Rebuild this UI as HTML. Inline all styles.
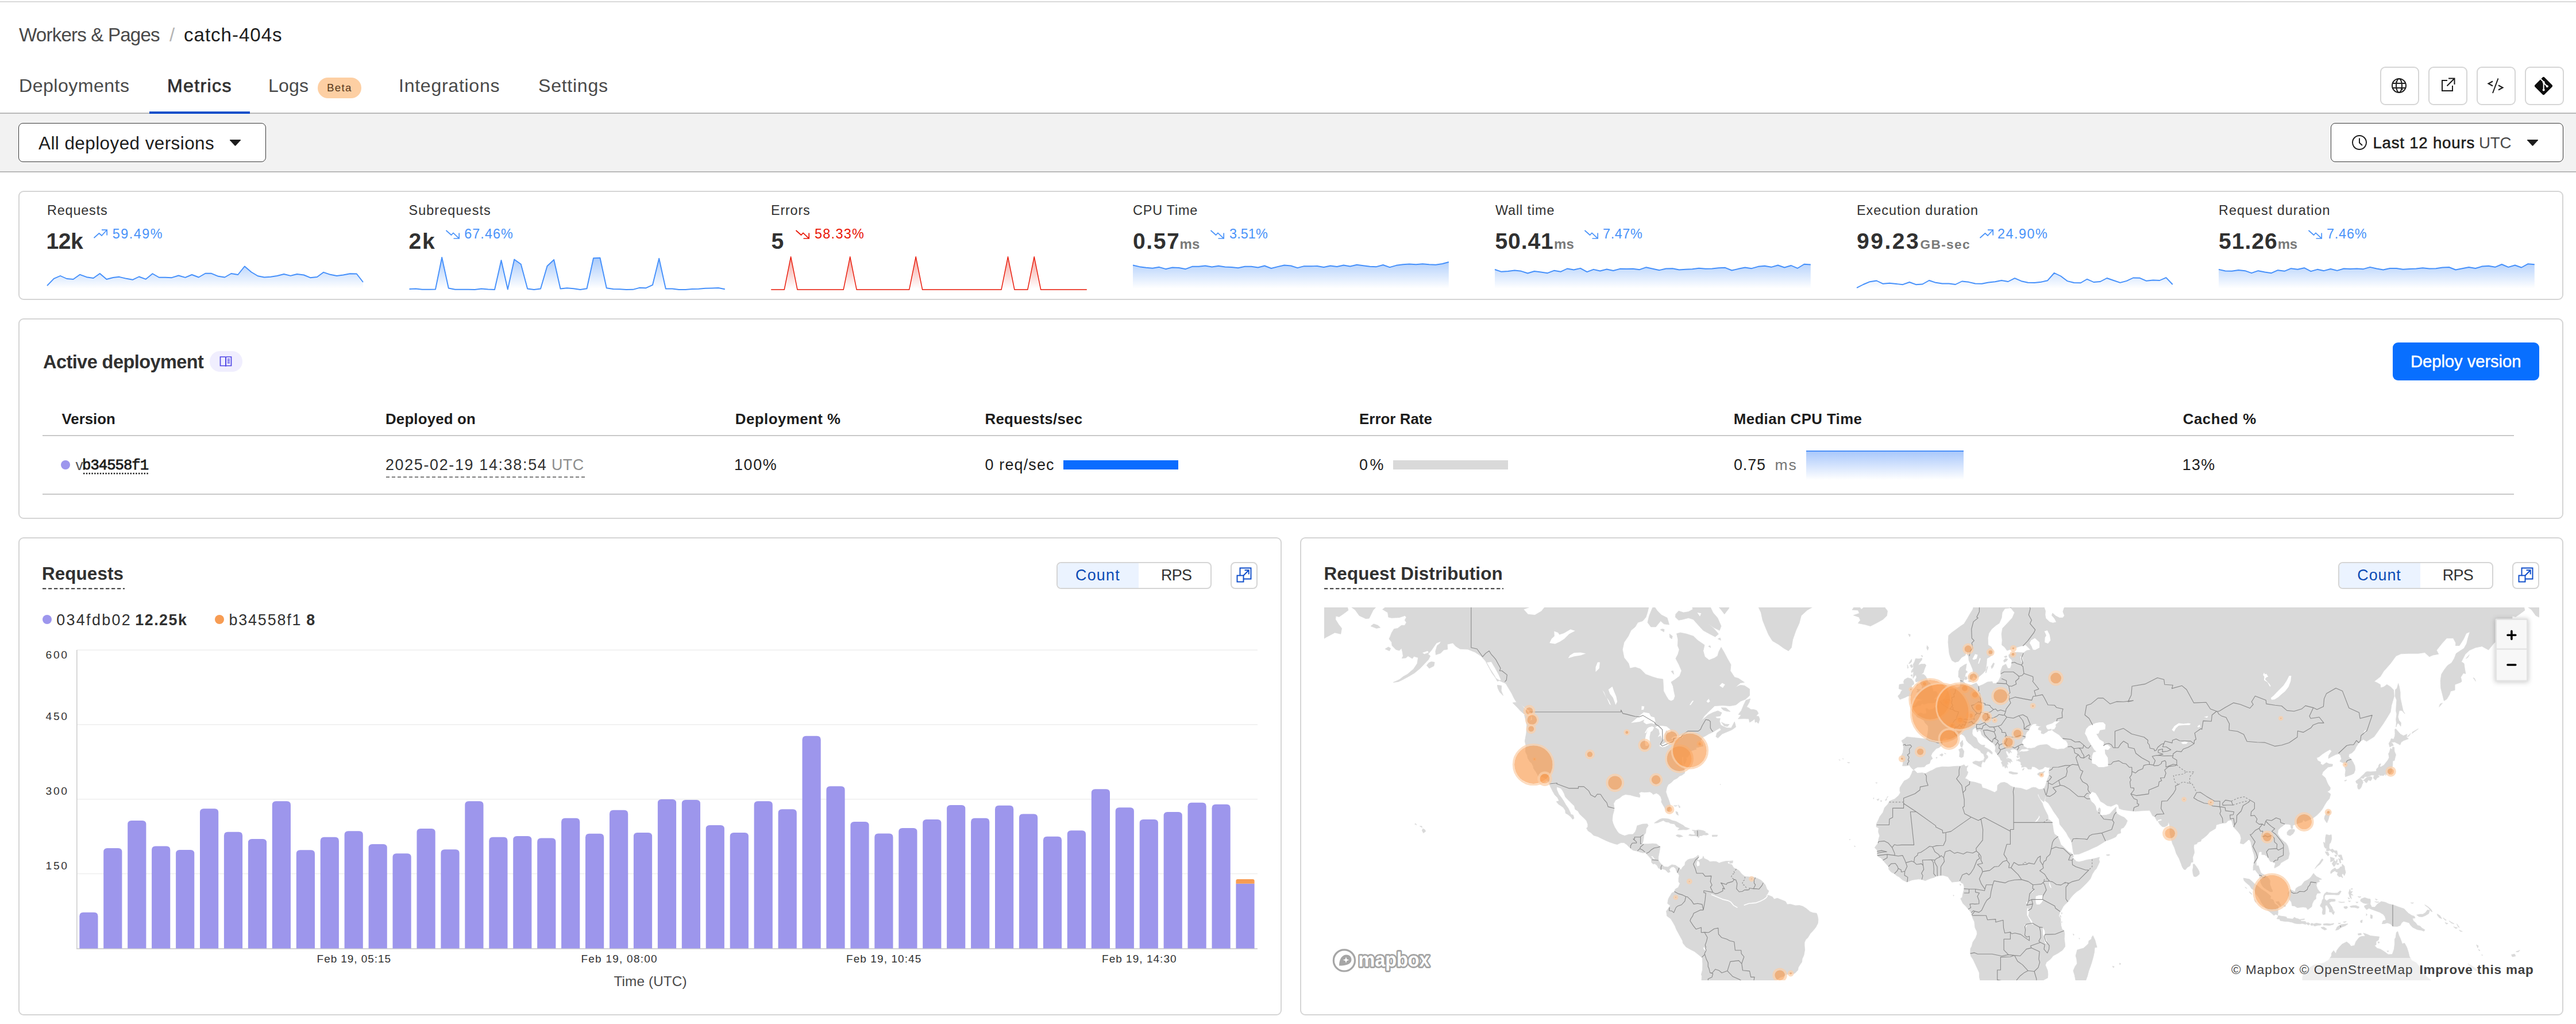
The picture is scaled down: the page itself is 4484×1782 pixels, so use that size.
<!DOCTYPE html>
<html><head><meta charset="utf-8"><title>catch-404s metrics</title>
<style>
html,body{margin:0;padding:0;background:#fff}
body{width:4484px;height:1782px;position:relative;overflow:hidden;font-family:"Liberation Sans",sans-serif}
.a{position:absolute;display:block}
.t{position:absolute;white-space:pre;font-family:"Liberation Sans",sans-serif}
</style></head><body>
<div class="a" style="left:0px;top:1.5px;width:4484px;height:2px;background:#d9d9d9"></div>
<div class="a" style="left:0px;top:198px;width:4484px;height:100.5px;background:#f2f2f2"></div>
<div class="a" style="left:0px;top:196.2px;width:4484px;height:1.8px;background:#b9b9b9"></div>
<div class="a" style="left:0px;top:298px;width:4484px;height:1.8px;background:#b9b9b9"></div>
<div class="a" style="left:260px;top:194px;width:175px;height:4.2px;background:#0b4ec9"></div>
<div class="a" style="left:553px;top:135px;width:76px;height:36px;background:#fdcfa3;border-radius:18px"></div>
<div class="a" style="left:32px;top:214px;width:430.5px;height:68px;background:#fff;border:1.7px solid #3a3a3a;border-radius:8px;box-sizing:border-box"></div>
<svg class="a" style="left:399px;top:242px" width="21" height="13" viewBox="0 0 21 13"><path d="M1.5 1 H19.5 Q20.3 1.4 19.8 2.2 L11.3 11.4 Q10.5 12.1 9.7 11.4 L1.2 2.2 Q0.7 1.4 1.5 1Z" fill="#1d1d1d"/></svg>
<div class="a" style="left:4057px;top:214px;width:404.5px;height:68px;background:#fff;border:1.7px solid #3a3a3a;border-radius:8px;box-sizing:border-box"></div>
<svg class="a" style="left:4398px;top:242px" width="21" height="13" viewBox="0 0 21 13"><path d="M1.5 1 H19.5 Q20.3 1.4 19.8 2.2 L11.3 11.4 Q10.5 12.1 9.7 11.4 L1.2 2.2 Q0.7 1.4 1.5 1Z" fill="#1d1d1d"/></svg>
<svg class="a" style="left:4093px;top:234px" width="28" height="28" viewBox="0 0 28 28"><circle cx="14" cy="14" r="12" fill="none" stroke="#1d1d1d" stroke-width="2"/><path d="M14 6.5V14.5L19 19" fill="none" stroke="#1d1d1d" stroke-width="2"/></svg>
<div class="a" style="left:4143px;top:115.5px;width:67.5px;height:67.5px;background:#fff;border:2px solid #d6d6d6;border-radius:9px;box-sizing:border-box"></div>
<div class="a" style="left:4227px;top:115.5px;width:67.5px;height:67.5px;background:#fff;border:2px solid #d6d6d6;border-radius:9px;box-sizing:border-box"></div>
<div class="a" style="left:4311px;top:115.5px;width:67.5px;height:67.5px;background:#fff;border:2px solid #d6d6d6;border-radius:9px;box-sizing:border-box"></div>
<div class="a" style="left:4395px;top:115.5px;width:67.5px;height:67.5px;background:#fff;border:2px solid #d6d6d6;border-radius:9px;box-sizing:border-box"></div>
<svg class="a" style="left:4162px;top:135px" width="28" height="28" viewBox="0 0 28 28" fill="none" stroke="#1d1d1d" stroke-width="2"><circle cx="14" cy="14" r="12"/><ellipse cx="14" cy="14" rx="5" ry="12"/><path d="M2.5 10H25.5M2.5 18H25.5"/><circle cx="9" cy="7.5" r="1" fill="#1d1d1d" stroke="none"/><circle cx="19.5" cy="20.5" r="1.2" fill="#1d1d1d" stroke="none"/></svg>
<svg class="a" style="left:4248px;top:134px" width="27" height="27" viewBox="0 0 27 27" fill="none" stroke="#1d1d1d" stroke-width="2"><path d="M12 6H3V24H21V15"/><path d="M14 2.5H24.5V13M24 3L11.5 15.5"/></svg>
<svg class="a" style="left:4329px;top:134px" width="30" height="30" viewBox="0 0 30 30" fill="none" stroke="#1d1d1d" stroke-width="2"><path d="M10 7.5L2.5 11.5L10 15.5M20 14.5L27.5 18.5L20 22.5M19.5 2.5L10 28"/></svg>
<svg class="a" style="left:4410px;top:132px" width="35" height="35" viewBox="0 0 35 35"><rect x="5.7" y="5.7" width="23.6" height="23.6" rx="2.6" transform="rotate(45 17.5 17.5)" fill="#0d0d0d"/><g stroke="#fff" stroke-width="2" fill="none"><path d="M12.5 5.5L19 12M17.7 11V24M18 12.5L23.5 18"/></g><circle cx="17.7" cy="11.3" r="2" fill="#fff"/><circle cx="17.7" cy="24.5" r="2" fill="#fff"/><circle cx="23.8" cy="18.3" r="2" fill="#fff"/></svg>
<div class="a" style="left:32px;top:332px;width:4430px;height:190px;background:#fff;border:2px solid #d5d5d5;border-radius:9px;box-sizing:border-box"></div>
<div class="a" style="left:32px;top:554px;width:4430px;height:349px;background:#fff;border:2px solid #d5d5d5;border-radius:9px;box-sizing:border-box"></div>
<div class="a" style="left:32px;top:935px;width:2199px;height:832px;background:#fff;border:2px solid #d5d5d5;border-radius:9px;box-sizing:border-box"></div>
<div class="a" style="left:2263px;top:935px;width:2199px;height:832px;background:#fff;border:2px solid #d5d5d5;border-radius:9px;box-sizing:border-box"></div>
<svg class="a" style="left:0;top:430px" width="4484" height="80" viewBox="0 430 4484 80">
<defs><linearGradient id="gb" gradientUnits="userSpaceOnUse" x1="0" y1="440" x2="0" y2="502"><stop offset="0" stop-color="#5b9bf8" stop-opacity="0.62"/><stop offset="1" stop-color="#5b9bf8" stop-opacity="0"/></linearGradient>
<linearGradient id="gr" gradientUnits="userSpaceOnUse" x1="0" y1="440" x2="0" y2="502"><stop offset="0" stop-color="#e81403" stop-opacity="0.45"/><stop offset="1" stop-color="#e81403" stop-opacity="0"/></linearGradient></defs>
<path d="M82.0,503.5 L82.0,497.2 L93.8,484.8 L105.0,480.0 L116.2,485.0 L127.5,486.0 L139.2,477.8 L150.8,482.2 L162.5,484.0 L173.8,476.0 L185.5,486.0 L197.0,483.0 L207.5,481.8 L220.0,484.8 L230.8,486.8 L242.0,481.5 L253.8,485.8 L265.5,476.2 L276.8,482.8 L287.5,482.8 L299.0,483.2 L310.8,479.5 L322.5,482.8 L334.0,478.0 L345.8,482.5 L357.5,475.8 L368.0,475.8 L380.0,480.8 L391.2,482.5 L402.5,476.0 L414.2,478.0 L425.8,463.5 L437.5,473.5 L448.8,480.2 L460.0,482.5 L471.2,481.8 L482.5,480.0 L494.2,477.0 L505.8,479.8 L517.0,477.0 L528.8,478.5 L540.0,483.2 L552.0,482.0 L563.2,473.8 L575.0,477.8 L586.2,480.0 L597.5,478.5 L609.2,476.2 L620.8,476.5 L632.0,491.0 L632.0,503.5Z" fill="url(#gb)"/><polyline points="82.0,497.2 93.8,484.8 105.0,480.0 116.2,485.0 127.5,486.0 139.2,477.8 150.8,482.2 162.5,484.0 173.8,476.0 185.5,486.0 197.0,483.0 207.5,481.8 220.0,484.8 230.8,486.8 242.0,481.5 253.8,485.8 265.5,476.2 276.8,482.8 287.5,482.8 299.0,483.2 310.8,479.5 322.5,482.8 334.0,478.0 345.8,482.5 357.5,475.8 368.0,475.8 380.0,480.8 391.2,482.5 402.5,476.0 414.2,478.0 425.8,463.5 437.5,473.5 448.8,480.2 460.0,482.5 471.2,481.8 482.5,480.0 494.2,477.0 505.8,479.8 517.0,477.0 528.8,478.5 540.0,483.2 552.0,482.0 563.2,473.8 575.0,477.8 586.2,480.0 597.5,478.5 609.2,476.2 620.8,476.5 632.0,491.0" fill="none" stroke="#4590fb" stroke-width="1.9" stroke-linejoin="round"/>
<path d="M712.5,503.5 L712.5,503.0 L723.8,502.5 L735.0,503.8 L746.8,503.8 L758.0,503.5 L769.2,448.0 L780.8,501.5 L792.2,503.8 L803.8,503.8 L815.0,503.8 L826.5,504.0 L838.0,502.5 L849.5,503.5 L861.0,504.0 L872.5,453.0 L883.8,503.5 L895.2,451.5 L906.8,459.8 L918.2,502.5 L929.5,504.0 L941.0,502.5 L952.5,463.0 L964.2,452.0 L975.5,502.5 L987.0,501.2 L998.5,502.2 L1010.0,504.0 L1021.5,502.2 L1033.0,449.2 L1044.5,448.8 L1055.8,501.2 L1067.5,503.0 L1078.8,503.2 L1090.0,504.0 L1101.8,503.8 L1113.0,500.8 L1124.5,501.2 L1136.0,495.8 L1147.2,449.8 L1158.8,502.5 L1170.2,502.5 L1181.8,504.0 L1193.2,504.0 L1204.8,503.0 L1216.2,502.8 L1227.8,501.8 L1239.2,501.5 L1250.5,501.0 L1261.8,503.2 L1261.8,503.5Z" fill="url(#gb)"/><polyline points="712.5,503.0 723.8,502.5 735.0,503.8 746.8,503.8 758.0,503.5 769.2,448.0 780.8,501.5 792.2,503.8 803.8,503.8 815.0,503.8 826.5,504.0 838.0,502.5 849.5,503.5 861.0,504.0 872.5,453.0 883.8,503.5 895.2,451.5 906.8,459.8 918.2,502.5 929.5,504.0 941.0,502.5 952.5,463.0 964.2,452.0 975.5,502.5 987.0,501.2 998.5,502.2 1010.0,504.0 1021.5,502.2 1033.0,449.2 1044.5,448.8 1055.8,501.2 1067.5,503.0 1078.8,503.2 1090.0,504.0 1101.8,503.8 1113.0,500.8 1124.5,501.2 1136.0,495.8 1147.2,449.8 1158.8,502.5 1170.2,502.5 1181.8,504.0 1193.2,504.0 1204.8,503.0 1216.2,502.8 1227.8,501.8 1239.2,501.5 1250.5,501.0 1261.8,503.2" fill="none" stroke="#4590fb" stroke-width="1.9" stroke-linejoin="round"/>
<path d="M1342.2,503.5 L1342.2,504.0 L1353.7,504.0 L1365.2,504.0 L1376.6,446.8 L1388.0,504.0 L1399.5,504.0 L1411.0,504.0 L1422.4,504.0 L1433.8,504.0 L1445.3,504.0 L1456.8,504.0 L1468.2,504.0 L1479.7,446.8 L1491.1,504.0 L1502.5,504.0 L1514.0,504.0 L1525.5,504.0 L1536.9,504.0 L1548.3,504.0 L1559.8,504.0 L1571.2,504.0 L1582.7,504.0 L1594.2,446.8 L1605.6,504.0 L1617.0,504.0 L1628.5,504.0 L1640.0,504.0 L1651.4,504.0 L1662.8,504.0 L1674.3,504.0 L1685.8,504.0 L1697.2,504.0 L1708.7,504.0 L1720.1,504.0 L1731.5,504.0 L1743.0,504.0 L1754.5,446.8 L1765.9,504.0 L1777.3,504.0 L1788.8,504.0 L1800.2,446.8 L1811.7,504.0 L1823.2,504.0 L1834.6,504.0 L1846.0,504.0 L1857.5,504.0 L1868.9,504.0 L1880.4,504.0 L1891.8,504.0 L1891.8,503.5Z" fill="url(#gr)"/><polyline points="1342.2,504.0 1353.7,504.0 1365.2,504.0 1376.6,446.8 1388.0,504.0 1399.5,504.0 1411.0,504.0 1422.4,504.0 1433.8,504.0 1445.3,504.0 1456.8,504.0 1468.2,504.0 1479.7,446.8 1491.1,504.0 1502.5,504.0 1514.0,504.0 1525.5,504.0 1536.9,504.0 1548.3,504.0 1559.8,504.0 1571.2,504.0 1582.7,504.0 1594.2,446.8 1605.6,504.0 1617.0,504.0 1628.5,504.0 1640.0,504.0 1651.4,504.0 1662.8,504.0 1674.3,504.0 1685.8,504.0 1697.2,504.0 1708.7,504.0 1720.1,504.0 1731.5,504.0 1743.0,504.0 1754.5,446.8 1765.9,504.0 1777.3,504.0 1788.8,504.0 1800.2,446.8 1811.7,504.0 1823.2,504.0 1834.6,504.0 1846.0,504.0 1857.5,504.0 1868.9,504.0 1880.4,504.0 1891.8,504.0" fill="none" stroke="#e81403" stroke-width="1.4" stroke-linejoin="round"/>
<path d="M1972.0,503.5 L1972.0,461.5 L1983.5,464.2 L1995.0,465.8 L2006.2,466.8 L2017.8,464.8 L2029.2,468.2 L2040.8,465.5 L2052.2,466.0 L2063.8,468.2 L2075.2,463.8 L2086.5,463.8 L2098.0,462.5 L2109.5,464.5 L2121.0,462.8 L2132.5,464.5 L2144.0,465.0 L2155.2,466.2 L2166.8,463.8 L2178.2,463.8 L2189.8,465.5 L2201.2,462.5 L2212.8,467.0 L2224.0,464.2 L2235.5,461.5 L2247.0,462.5 L2258.5,466.2 L2270.0,463.2 L2281.5,463.2 L2293.0,463.0 L2304.2,465.0 L2315.8,462.5 L2327.2,464.0 L2338.8,461.5 L2350.2,463.5 L2361.8,460.8 L2373.0,462.2 L2384.5,463.8 L2396.0,464.2 L2407.5,461.0 L2419.0,465.2 L2430.5,461.8 L2442.0,460.2 L2453.2,459.5 L2464.8,460.2 L2476.2,459.2 L2487.8,460.2 L2499.2,460.8 L2510.8,459.0 L2521.8,456.0 L2521.8,503.5Z" fill="url(#gb)"/><polyline points="1972.0,461.5 1983.5,464.2 1995.0,465.8 2006.2,466.8 2017.8,464.8 2029.2,468.2 2040.8,465.5 2052.2,466.0 2063.8,468.2 2075.2,463.8 2086.5,463.8 2098.0,462.5 2109.5,464.5 2121.0,462.8 2132.5,464.5 2144.0,465.0 2155.2,466.2 2166.8,463.8 2178.2,463.8 2189.8,465.5 2201.2,462.5 2212.8,467.0 2224.0,464.2 2235.5,461.5 2247.0,462.5 2258.5,466.2 2270.0,463.2 2281.5,463.2 2293.0,463.0 2304.2,465.0 2315.8,462.5 2327.2,464.0 2338.8,461.5 2350.2,463.5 2361.8,460.8 2373.0,462.2 2384.5,463.8 2396.0,464.2 2407.5,461.0 2419.0,465.2 2430.5,461.8 2442.0,460.2 2453.2,459.5 2464.8,460.2 2476.2,459.2 2487.8,460.2 2499.2,460.8 2510.8,459.0 2521.8,456.0" fill="none" stroke="#4590fb" stroke-width="1.9" stroke-linejoin="round"/>
<path d="M2602.0,503.5 L2602.0,469.0 L2613.5,472.8 L2625.0,472.0 L2636.5,470.5 L2647.8,471.8 L2659.2,475.5 L2670.8,472.0 L2682.2,473.5 L2693.8,475.2 L2705.0,470.8 L2716.5,472.8 L2728.0,467.5 L2739.5,469.5 L2751.0,466.8 L2762.5,473.2 L2773.8,468.8 L2785.2,471.5 L2796.8,468.5 L2808.2,471.0 L2819.8,467.8 L2831.2,468.0 L2842.5,467.8 L2854.0,469.2 L2865.5,465.2 L2877.0,467.8 L2888.5,470.2 L2900.0,467.5 L2911.5,467.2 L2922.8,469.5 L2934.2,468.8 L2945.8,468.2 L2957.2,466.8 L2968.8,467.8 L2980.2,467.5 L2991.5,466.2 L3003.0,465.8 L3014.5,470.5 L3026.0,467.8 L3037.5,465.5 L3049.0,467.2 L3060.5,463.8 L3071.8,462.8 L3083.2,464.8 L3094.8,461.5 L3106.2,465.5 L3117.8,462.0 L3129.0,466.8 L3140.5,459.8 L3151.8,460.5 L3151.8,503.5Z" fill="url(#gb)"/><polyline points="2602.0,469.0 2613.5,472.8 2625.0,472.0 2636.5,470.5 2647.8,471.8 2659.2,475.5 2670.8,472.0 2682.2,473.5 2693.8,475.2 2705.0,470.8 2716.5,472.8 2728.0,467.5 2739.5,469.5 2751.0,466.8 2762.5,473.2 2773.8,468.8 2785.2,471.5 2796.8,468.5 2808.2,471.0 2819.8,467.8 2831.2,468.0 2842.5,467.8 2854.0,469.2 2865.5,465.2 2877.0,467.8 2888.5,470.2 2900.0,467.5 2911.5,467.2 2922.8,469.5 2934.2,468.8 2945.8,468.2 2957.2,466.8 2968.8,467.8 2980.2,467.5 2991.5,466.2 3003.0,465.8 3014.5,470.5 3026.0,467.8 3037.5,465.5 3049.0,467.2 3060.5,463.8 3071.8,462.8 3083.2,464.8 3094.8,461.5 3106.2,465.5 3117.8,462.0 3129.0,466.8 3140.5,459.8 3151.8,460.5" fill="none" stroke="#4590fb" stroke-width="1.9" stroke-linejoin="round"/>
<path d="M3232.0,503.5 L3232.0,500.8 L3243.5,495.0 L3255.0,490.2 L3266.5,488.5 L3277.8,493.8 L3289.2,492.8 L3300.8,494.0 L3312.2,495.2 L3323.8,491.0 L3335.0,495.2 L3346.5,494.5 L3358.0,488.0 L3369.5,491.8 L3381.0,493.5 L3392.5,493.5 L3403.8,495.0 L3415.2,489.5 L3426.8,490.8 L3438.2,493.5 L3449.8,493.8 L3461.2,491.5 L3472.8,490.2 L3484.0,488.0 L3495.5,490.0 L3507.0,484.2 L3518.5,489.2 L3530.0,491.8 L3541.5,492.0 L3552.8,490.8 L3564.2,488.2 L3575.8,475.0 L3587.2,480.5 L3598.8,489.2 L3610.2,492.0 L3621.8,492.2 L3633.0,485.8 L3644.5,491.0 L3656.0,490.0 L3667.5,484.0 L3679.0,488.0 L3690.5,491.8 L3701.8,488.8 L3713.2,483.5 L3724.8,483.8 L3736.2,488.8 L3747.8,487.5 L3759.2,488.0 L3770.5,483.2 L3781.8,495.0 L3781.8,503.5Z" fill="url(#gb)"/><polyline points="3232.0,500.8 3243.5,495.0 3255.0,490.2 3266.5,488.5 3277.8,493.8 3289.2,492.8 3300.8,494.0 3312.2,495.2 3323.8,491.0 3335.0,495.2 3346.5,494.5 3358.0,488.0 3369.5,491.8 3381.0,493.5 3392.5,493.5 3403.8,495.0 3415.2,489.5 3426.8,490.8 3438.2,493.5 3449.8,493.8 3461.2,491.5 3472.8,490.2 3484.0,488.0 3495.5,490.0 3507.0,484.2 3518.5,489.2 3530.0,491.8 3541.5,492.0 3552.8,490.8 3564.2,488.2 3575.8,475.0 3587.2,480.5 3598.8,489.2 3610.2,492.0 3621.8,492.2 3633.0,485.8 3644.5,491.0 3656.0,490.0 3667.5,484.0 3679.0,488.0 3690.5,491.8 3701.8,488.8 3713.2,483.5 3724.8,483.8 3736.2,488.8 3747.8,487.5 3759.2,488.0 3770.5,483.2 3781.8,495.0" fill="none" stroke="#4590fb" stroke-width="1.9" stroke-linejoin="round"/>
<path d="M3862.0,503.5 L3862.0,468.8 L3873.5,471.5 L3885.0,471.8 L3896.5,470.0 L3907.8,471.2 L3919.2,475.2 L3930.8,471.2 L3942.2,473.5 L3953.8,475.2 L3965.0,470.2 L3976.5,471.8 L3988.0,467.2 L3999.5,468.8 L4011.0,466.2 L4022.5,472.2 L4033.8,468.8 L4045.2,471.2 L4056.8,468.0 L4068.2,470.8 L4079.8,467.5 L4091.2,468.0 L4102.5,467.5 L4114.0,468.2 L4125.5,464.8 L4137.0,467.5 L4148.5,469.5 L4160.0,467.0 L4171.5,467.0 L4182.8,468.8 L4194.2,468.0 L4205.8,467.5 L4217.2,466.2 L4228.8,467.5 L4240.2,467.2 L4251.5,465.5 L4263.0,465.0 L4274.5,469.5 L4286.0,467.2 L4297.5,465.0 L4309.0,467.0 L4320.5,463.5 L4331.8,462.8 L4343.2,464.8 L4354.8,460.0 L4366.2,464.8 L4377.8,461.5 L4389.0,465.5 L4400.5,459.2 L4411.8,460.2 L4411.8,503.5Z" fill="url(#gb)"/><polyline points="3862.0,468.8 3873.5,471.5 3885.0,471.8 3896.5,470.0 3907.8,471.2 3919.2,475.2 3930.8,471.2 3942.2,473.5 3953.8,475.2 3965.0,470.2 3976.5,471.8 3988.0,467.2 3999.5,468.8 4011.0,466.2 4022.5,472.2 4033.8,468.8 4045.2,471.2 4056.8,468.0 4068.2,470.8 4079.8,467.5 4091.2,468.0 4102.5,467.5 4114.0,468.2 4125.5,464.8 4137.0,467.5 4148.5,469.5 4160.0,467.0 4171.5,467.0 4182.8,468.8 4194.2,468.0 4205.8,467.5 4217.2,466.2 4228.8,467.5 4240.2,467.2 4251.5,465.5 4263.0,465.0 4274.5,469.5 4286.0,467.2 4297.5,465.0 4309.0,467.0 4320.5,463.5 4331.8,462.8 4343.2,464.8 4354.8,460.0 4366.2,464.8 4377.8,461.5 4389.0,465.5 4400.5,459.2 4411.8,460.2" fill="none" stroke="#4590fb" stroke-width="1.9" stroke-linejoin="round"/>
</svg>
<svg class="a" style="left:162.5px;top:398.5px" width="25" height="17" viewBox="0 0 25 17" fill="none" stroke="#4a93f9" stroke-width="1.7"><path d="M0.5 15 L9.5 7 L14 11 L23 1.2 M14 1.2H23.2V10.5"/></svg>
<svg class="a" style="left:776px;top:399.5px" width="25" height="17" viewBox="0 0 25 17" fill="none" stroke="#4a93f9" stroke-width="1.7"><path d="M0.5 1 L9.5 9 L13 5.5 L23 14.8 M23.2 5.5V15H13.5"/></svg>
<svg class="a" style="left:1385px;top:399.5px" width="25" height="17" viewBox="0 0 25 17" fill="none" stroke="#e81403" stroke-width="1.7"><path d="M0.5 1 L9.5 9 L13 5.5 L23 14.8 M23.2 5.5V15H13.5"/></svg>
<svg class="a" style="left:2107px;top:399.5px" width="25" height="17" viewBox="0 0 25 17" fill="none" stroke="#4a93f9" stroke-width="1.7"><path d="M0.5 1 L9.5 9 L13 5.5 L23 14.8 M23.2 5.5V15H13.5"/></svg>
<svg class="a" style="left:2758px;top:399.5px" width="25" height="17" viewBox="0 0 25 17" fill="none" stroke="#4a93f9" stroke-width="1.7"><path d="M0.5 1 L9.5 9 L13 5.5 L23 14.8 M23.2 5.5V15H13.5"/></svg>
<svg class="a" style="left:3445.5px;top:398.5px" width="25" height="17" viewBox="0 0 25 17" fill="none" stroke="#4a93f9" stroke-width="1.7"><path d="M0.5 15 L9.5 7 L14 11 L23 1.2 M14 1.2H23.2V10.5"/></svg>
<svg class="a" style="left:4018px;top:399.5px" width="25" height="17" viewBox="0 0 25 17" fill="none" stroke="#4a93f9" stroke-width="1.7"><path d="M0.5 1 L9.5 9 L13 5.5 L23 14.8 M23.2 5.5V15H13.5"/></svg>
<div class="a" style="left:365px;top:611px;width:56.5px;height:36px;background:#f0eefe;border-radius:18px"></div>
<svg class="a" style="left:382px;top:619px" width="22" height="21" viewBox="0 0 22 21" fill="none" stroke="#4f46e5" stroke-width="1.7"><path d="M1.5 2H9.5Q11 2 11 3.5V18.5Q11 17.5 9.5 17.5H1.5Z"/><path d="M20.5 2H12.5Q11 2 11 3.5V18.5Q11 17.5 12.5 17.5H20.5Z"/><path d="M13.8 6H18M13.8 9.2H18M13.8 12.4H18"/></svg>
<div class="a" style="left:4165px;top:596.3px;width:255px;height:65.5px;background:#086fff;border-radius:9px"></div>
<div class="a" style="left:74px;top:757px;width:4302px;height:1.8px;background:#c9c9c9"></div>
<div class="a" style="left:74px;top:859.2px;width:4302px;height:1.8px;background:#c9c9c9"></div>
<div class="a" style="left:106px;top:800.7px;width:16px;height:16px;background:#9d96ed;border-radius:50%"></div>
<svg class="a" style="left:144px;top:822px" width="116" height="4"><path d="M1 2H115" stroke="#1d1d1d" stroke-width="2.4" stroke-dasharray="2.4 2.4"/></svg>
<svg class="a" style="left:672px;top:829px" width="346" height="3"><path d="M0 1.2H346" stroke="#555" stroke-width="1.6" stroke-dasharray="6 4"/></svg>
<div class="a" style="left:1851px;top:801px;width:200px;height:16px;background:#0a6cff"></div>
<div class="a" style="left:2425px;top:801px;width:200px;height:16px;background:#d9d9d9"></div>
<div class="a" style="left:3144px;top:783.7px;width:274px;height:51.5px;background:linear-gradient(#a6c6fb,#ffffff)"></div>
<div class="a" style="left:3144px;top:783.7px;width:274px;height:2px;background:#4a90f8"></div>
<svg class="a" style="left:74px;top:1023px" width="143" height="3"><path d="M0 1.3H143" stroke="#1d1d1d" stroke-width="1.8" stroke-dasharray="6.3 3.7"/></svg>
<svg class="a" style="left:2305px;top:1023px" width="312" height="3"><path d="M0 1.3H312" stroke="#1d1d1d" stroke-width="1.8" stroke-dasharray="6.3 3.7"/></svg>
<div class="a" style="left:74px;top:1070px;width:16px;height:16px;background:#9d96ed;border-radius:50%"></div>
<div class="a" style="left:374px;top:1070px;width:16px;height:16px;background:#f79c53;border-radius:50%"></div>
<div class="a" style="left:1838.5px;top:977.5px;width:270px;height:47px;background:#fff;border:2px solid #d5d5d5;border-radius:8px;box-sizing:border-box;overflow:hidden"></div>
<div class="a" style="left:1840.5px;top:979.5px;width:141.5px;height:43px;background:#ebf3ff;border-radius:6.5px 0 0 6.5px"></div>
<div class="a" style="left:2141.5px;top:977.5px;width:47px;height:47px;background:#fff;border:2px solid #d5d5d5;border-radius:8px;box-sizing:border-box"></div>
<svg class="a" style="left:2151.5px;top:987.3px" width="27" height="27" viewBox="0 0 27 27" fill="none" stroke="#0b4bc9" stroke-width="1.9"><path d="M6.5 14.5V1.5H25.5V20.5H12.5"/><rect x="1.5" y="14.5" width="11" height="11"/><path d="M12.5 14.5L21.5 5.5M14.5 5.3H21.7V12.5"/></svg>
<div class="a" style="left:4069.8px;top:977.5px;width:270px;height:47px;background:#fff;border:2px solid #d5d5d5;border-radius:8px;box-sizing:border-box;overflow:hidden"></div>
<div class="a" style="left:4071.8px;top:979.5px;width:141.5px;height:43px;background:#ebf3ff;border-radius:6.5px 0 0 6.5px"></div>
<div class="a" style="left:4372.8px;top:977.5px;width:47px;height:47px;background:#fff;border:2px solid #d5d5d5;border-radius:8px;box-sizing:border-box"></div>
<svg class="a" style="left:4382.8px;top:987.3px" width="27" height="27" viewBox="0 0 27 27" fill="none" stroke="#0b4bc9" stroke-width="1.9"><path d="M6.5 14.5V1.5H25.5V20.5H12.5"/><rect x="1.5" y="14.5" width="11" height="11"/><path d="M12.5 14.5L21.5 5.5M14.5 5.3H21.7V12.5"/></svg>
<svg class="a" style="left:0;top:1120px" width="2240" height="540" viewBox="0 1120 2240 540">
<path d="M134 1131.3H2189" stroke="#eeeeee" stroke-width="1.5"/>
<path d="M134 1261H2189" stroke="#eeeeee" stroke-width="1.5"/>
<path d="M134 1390.8H2189" stroke="#eeeeee" stroke-width="1.5"/>
<path d="M134 1520.6H2189" stroke="#eeeeee" stroke-width="1.5"/>
<path d="M133.8 1131V1651.5" stroke="#d3d3d3" stroke-width="1.8"/>
<path d="M133 1651H2189" stroke="#d3d3d3" stroke-width="1.8"/>
<path d="M138.3 1650.4V1594.3Q138.3 1587.8 144.8 1587.8H164.0Q170.5 1587.8 170.5 1594.3V1650.4Z" fill="#9d96ec"/>
<path d="M180.2 1650.4V1482.5Q180.2 1476.0 186.7 1476.0H205.9Q212.4 1476.0 212.4 1482.5V1650.4Z" fill="#9d96ec"/>
<path d="M222.2 1650.4V1434.6Q222.2 1428.1 228.7 1428.1H247.9Q254.4 1428.1 254.4 1434.6V1650.4Z" fill="#9d96ec"/>
<path d="M264.1 1650.4V1478.9Q264.1 1472.4 270.6 1472.4H289.8Q296.3 1472.4 296.3 1478.9V1650.4Z" fill="#9d96ec"/>
<path d="M306.1 1650.4V1485.5Q306.1 1479.0 312.6 1479.0H331.8Q338.3 1479.0 338.3 1485.5V1650.4Z" fill="#9d96ec"/>
<path d="M348.0 1650.4V1413.8Q348.0 1407.3 354.5 1407.3H373.7Q380.2 1407.3 380.2 1413.8V1650.4Z" fill="#9d96ec"/>
<path d="M389.9 1650.4V1454.3Q389.9 1447.8 396.4 1447.8H415.6Q422.1 1447.8 422.1 1454.3V1650.4Z" fill="#9d96ec"/>
<path d="M431.9 1650.4V1466.6Q431.9 1460.1 438.4 1460.1H457.6Q464.1 1460.1 464.1 1466.6V1650.4Z" fill="#9d96ec"/>
<path d="M473.8 1650.4V1400.7Q473.8 1394.2 480.3 1394.2H499.5Q506.0 1394.2 506.0 1400.7V1650.4Z" fill="#9d96ec"/>
<path d="M515.8 1650.4V1485.8Q515.8 1479.3 522.3 1479.3H541.5Q548.0 1479.3 548.0 1485.8V1650.4Z" fill="#9d96ec"/>
<path d="M557.7 1650.4V1463.3Q557.7 1456.8 564.2 1456.8H583.4Q589.9 1456.8 589.9 1463.3V1650.4Z" fill="#9d96ec"/>
<path d="M599.6 1650.4V1452.7Q599.6 1446.2 606.1 1446.2H625.3Q631.8 1446.2 631.8 1452.7V1650.4Z" fill="#9d96ec"/>
<path d="M641.6 1650.4V1475.4Q641.6 1468.9 648.1 1468.9H667.3Q673.8 1468.9 673.8 1475.4V1650.4Z" fill="#9d96ec"/>
<path d="M683.5 1650.4V1491.8Q683.5 1485.3 690.0 1485.3H709.2Q715.7 1485.3 715.7 1491.8V1650.4Z" fill="#9d96ec"/>
<path d="M725.5 1650.4V1448.6Q725.5 1442.1 732.0 1442.1H751.2Q757.7 1442.1 757.7 1448.6V1650.4Z" fill="#9d96ec"/>
<path d="M767.4 1650.4V1484.7Q767.4 1478.2 773.9 1478.2H793.1Q799.6 1478.2 799.6 1484.7V1650.4Z" fill="#9d96ec"/>
<path d="M809.3 1650.4V1400.7Q809.3 1394.2 815.8 1394.2H835.0Q841.5 1394.2 841.5 1400.7V1650.4Z" fill="#9d96ec"/>
<path d="M851.3 1650.4V1463.3Q851.3 1456.8 857.8 1456.8H877.0Q883.5 1456.8 883.5 1463.3V1650.4Z" fill="#9d96ec"/>
<path d="M893.2 1650.4V1461.4Q893.2 1454.9 899.7 1454.9H918.9Q925.4 1454.9 925.4 1461.4V1650.4Z" fill="#9d96ec"/>
<path d="M935.2 1650.4V1465.0Q935.2 1458.5 941.7 1458.5H960.9Q967.4 1458.5 967.4 1465.0V1650.4Z" fill="#9d96ec"/>
<path d="M977.1 1650.4V1430.3Q977.1 1423.8 983.6 1423.8H1002.8Q1009.3 1423.8 1009.3 1430.3V1650.4Z" fill="#9d96ec"/>
<path d="M1019.0 1650.4V1457.3Q1019.0 1450.8 1025.5 1450.8H1044.7Q1051.2 1450.8 1051.2 1457.3V1650.4Z" fill="#9d96ec"/>
<path d="M1061.0 1650.4V1416.3Q1061.0 1409.8 1067.5 1409.8H1086.7Q1093.2 1409.8 1093.2 1416.3V1650.4Z" fill="#9d96ec"/>
<path d="M1102.9 1650.4V1455.4Q1102.9 1448.9 1109.4 1448.9H1128.6Q1135.1 1448.9 1135.1 1455.4V1650.4Z" fill="#9d96ec"/>
<path d="M1144.9 1650.4V1397.4Q1144.9 1390.9 1151.4 1390.9H1170.6Q1177.1 1390.9 1177.1 1397.4V1650.4Z" fill="#9d96ec"/>
<path d="M1186.8 1650.4V1398.5Q1186.8 1392.0 1193.3 1392.0H1212.5Q1219.0 1392.0 1219.0 1398.5V1650.4Z" fill="#9d96ec"/>
<path d="M1228.7 1650.4V1442.6Q1228.7 1436.1 1235.2 1436.1H1254.4Q1260.9 1436.1 1260.9 1442.6V1650.4Z" fill="#9d96ec"/>
<path d="M1270.7 1650.4V1455.4Q1270.7 1448.9 1277.2 1448.9H1296.4Q1302.9 1448.9 1302.9 1455.4V1650.4Z" fill="#9d96ec"/>
<path d="M1312.6 1650.4V1400.7Q1312.6 1394.2 1319.1 1394.2H1338.3Q1344.8 1394.2 1344.8 1400.7V1650.4Z" fill="#9d96ec"/>
<path d="M1354.6 1650.4V1414.7Q1354.6 1408.2 1361.1 1408.2H1380.3Q1386.8 1408.2 1386.8 1414.7V1650.4Z" fill="#9d96ec"/>
<path d="M1396.5 1650.4V1287.2Q1396.5 1280.7 1403.0 1280.7H1422.2Q1428.7 1280.7 1428.7 1287.2V1650.4Z" fill="#9d96ec"/>
<path d="M1438.4 1650.4V1374.7Q1438.4 1368.2 1444.9 1368.2H1464.1Q1470.6 1368.2 1470.6 1374.7V1650.4Z" fill="#9d96ec"/>
<path d="M1480.4 1650.4V1436.4Q1480.4 1429.9 1486.9 1429.9H1506.1Q1512.6 1429.9 1512.6 1436.4V1650.4Z" fill="#9d96ec"/>
<path d="M1522.3 1650.4V1457.1Q1522.3 1450.6 1528.8 1450.6H1548.0Q1554.5 1450.6 1554.5 1457.1V1650.4Z" fill="#9d96ec"/>
<path d="M1564.3 1650.4V1447.4Q1564.3 1440.9 1570.8 1440.9H1590.0Q1596.5 1440.9 1596.5 1447.4V1650.4Z" fill="#9d96ec"/>
<path d="M1606.2 1650.4V1432.5Q1606.2 1426.0 1612.7 1426.0H1631.9Q1638.4 1426.0 1638.4 1432.5V1650.4Z" fill="#9d96ec"/>
<path d="M1648.1 1650.4V1407.5Q1648.1 1401.0 1654.6 1401.0H1673.8Q1680.3 1401.0 1680.3 1407.5V1650.4Z" fill="#9d96ec"/>
<path d="M1690.1 1650.4V1430.2Q1690.1 1423.7 1696.6 1423.7H1715.8Q1722.3 1423.7 1722.3 1430.2V1650.4Z" fill="#9d96ec"/>
<path d="M1732.0 1650.4V1408.3Q1732.0 1401.8 1738.5 1401.8H1757.7Q1764.2 1401.8 1764.2 1408.3V1650.4Z" fill="#9d96ec"/>
<path d="M1774.0 1650.4V1423.1Q1774.0 1416.6 1780.5 1416.6H1799.7Q1806.2 1416.6 1806.2 1423.1V1650.4Z" fill="#9d96ec"/>
<path d="M1815.9 1650.4V1462.2Q1815.9 1455.7 1822.4 1455.7H1841.6Q1848.1 1455.7 1848.1 1462.2V1650.4Z" fill="#9d96ec"/>
<path d="M1857.8 1650.4V1451.7Q1857.8 1445.2 1864.3 1445.2H1883.5Q1890.0 1445.2 1890.0 1451.7V1650.4Z" fill="#9d96ec"/>
<path d="M1899.8 1650.4V1379.8Q1899.8 1373.3 1906.3 1373.3H1925.5Q1932.0 1373.3 1932.0 1379.8V1650.4Z" fill="#9d96ec"/>
<path d="M1941.7 1650.4V1411.8Q1941.7 1405.3 1948.2 1405.3H1967.4Q1973.9 1405.3 1973.9 1411.8V1650.4Z" fill="#9d96ec"/>
<path d="M1983.7 1650.4V1432.5Q1983.7 1426.0 1990.2 1426.0H2009.4Q2015.9 1426.0 2015.9 1432.5V1650.4Z" fill="#9d96ec"/>
<path d="M2025.6 1650.4V1419.6Q2025.6 1413.1 2032.1 1413.1H2051.3Q2057.8 1413.1 2057.8 1419.6V1650.4Z" fill="#9d96ec"/>
<path d="M2067.5 1650.4V1403.2Q2067.5 1396.7 2074.0 1396.7H2093.2Q2099.7 1396.7 2099.7 1403.2V1650.4Z" fill="#9d96ec"/>
<path d="M2109.5 1650.4V1406.3Q2109.5 1399.8 2116.0 1399.8H2135.2Q2141.7 1399.8 2141.7 1406.3V1650.4Z" fill="#9d96ec"/>
<path d="M2151.4 1650.4V1537.7H2183.6V1650.4Z" fill="#9d96ec"/>
<path d="M2151.4 1537.7V1532.9Q2151.4 1529.9 2154.4 1529.9H2180.6Q2183.6 1529.9 2183.6 1532.9V1537.7Z" fill="#f79c53"/>
</svg>
<svg class="a" style="left:2305px;top:1057px;background:#fff" width="2115" height="649" viewBox="2305 1057 2115 649">
<path d="M2472.6 971.7 L2452.7 985.6 L2435.6 1002.3 L2417.4 1011.9 L2427.1 1028.8 L2431.6 1039.2 L2442.4 1042.1 L2447.0 1049.3 L2442.4 1053.6 L2431.1 1053.6 L2432.2 1047.2 L2418.0 1051.4 L2406.6 1060.5 L2415.7 1066.0 L2416.8 1074.0 L2422.0 1075.3 L2435.6 1074.7 L2445.3 1071.4 L2448.1 1074.0 L2445.3 1079.3 L2448.1 1083.2 L2445.3 1088.3 L2439.6 1088.3 L2432.8 1093.4 L2426.5 1094.6 L2422.5 1100.9 L2419.7 1108.2 L2418.0 1111.8 L2422.5 1117.7 L2423.1 1123.5 L2429.9 1130.4 L2435.6 1132.1 L2439.6 1128.2 L2441.3 1135.0 L2442.4 1141.6 L2440.2 1145.5 L2447.0 1144.9 L2451.0 1141.6 L2458.4 1146.0 L2461.2 1142.2 L2468.6 1144.4 L2466.9 1154.7 L2460.6 1164.2 L2449.8 1173.4 L2442.4 1177.5 L2436.2 1182.5 L2425.4 1187.4 L2433.9 1186.4 L2441.3 1183.0 L2451.5 1177.5 L2461.8 1171.4 L2472.0 1163.1 L2479.4 1155.2 L2486.2 1148.2 L2489.7 1141.6 L2485.7 1138.3 L2491.4 1132.1 L2496.5 1124.7 L2500.5 1118.9 L2508.4 1115.9 L2506.2 1120.1 L2501.6 1123.5 L2498.8 1133.3 L2499.3 1139.4 L2507.9 1136.6 L2513.0 1131.0 L2519.8 1129.9 L2519.2 1121.2 L2528.9 1118.9 L2534.0 1124.7 L2541.4 1129.3 L2555.1 1129.9 L2567.6 1135.0 L2577.8 1141.6 L2585.8 1150.4 L2591.5 1161.0 L2597.2 1171.4 L2604.0 1180.5 L2612.0 1185.5 L2621.1 1189.4 L2625.6 1197.1 L2631.3 1206.6 L2635.9 1215.9 L2640.4 1223.1 L2649.5 1227.6 L2654.1 1231.2 L2662.0 1236.4 L2665.4 1239.9 L2666.6 1245.9 L2667.1 1252.7 L2663.7 1254.4 L2664.9 1247.6 L2660.3 1246.3 L2653.5 1244.2 L2655.8 1253.5 L2657.5 1261.8 L2656.9 1275.6 L2654.3 1289.8 L2656.3 1298.2 L2655.2 1308.1 L2658.6 1314.7 L2659.2 1319.1 L2663.2 1325.7 L2666.0 1327.8 L2668.9 1333.6 L2669.4 1337.1 L2672.8 1342.0 L2676.3 1347.6 L2677.4 1350.7 L2682.5 1351.1 L2688.8 1353.8 L2690.5 1355.5 L2695.6 1360.6 L2696.7 1364.0 L2699.0 1369.4 L2703.0 1377.4 L2706.4 1383.3 L2711.5 1388.5 L2713.8 1393.7 L2709.2 1395.0 L2712.7 1399.4 L2716.6 1402.0 L2721.2 1405.2 L2724.6 1410.2 L2725.2 1415.2 L2729.7 1417.7 L2734.8 1422.1 L2737.4 1425.8 L2740.0 1424.0 L2738.3 1418.4 L2734.3 1417.1 L2733.1 1413.4 L2729.7 1406.4 L2725.7 1400.7 L2723.5 1396.9 L2721.2 1393.0 L2717.2 1387.2 L2713.2 1382.0 L2709.8 1374.1 L2709.8 1369.1 L2717.2 1372.1 L2720.1 1376.0 L2722.9 1381.3 L2724.6 1386.5 L2728.6 1391.1 L2732.0 1394.3 L2737.1 1399.4 L2740.5 1402.6 L2741.7 1408.3 L2746.8 1411.5 L2749.6 1416.5 L2754.8 1421.5 L2757.6 1424.0 L2761.6 1428.3 L2763.9 1434.4 L2763.9 1439.3 L2761.6 1441.1 L2764.4 1446.0 L2769.5 1449.3 L2774.1 1453.8 L2781.5 1455.9 L2785.5 1458.0 L2794.6 1462.4 L2802.5 1465.7 L2810.5 1468.4 L2815.1 1469.5 L2821.3 1466.6 L2827.0 1466.6 L2831.6 1469.8 L2837.8 1476.0 L2842.9 1479.8 L2849.2 1481.0 L2854.3 1482.8 L2860.0 1484.2 L2864.0 1483.6 L2865.7 1485.7 L2869.7 1489.8 L2874.8 1495.6 L2874.8 1500.8 L2877.6 1503.7 L2880.5 1503.1 L2884.5 1506.0 L2886.7 1510.6 L2890.7 1512.6 L2894.7 1512.3 L2898.7 1513.5 L2901.5 1516.3 L2903.8 1518.6 L2907.2 1517.2 L2905.5 1512.9 L2909.5 1508.9 L2913.5 1508.6 L2916.9 1511.7 L2918.0 1515.8 L2919.7 1518.6 L2922.9 1510.2 L2916.3 1505.7 L2910.1 1504.8 L2903.2 1508.9 L2897.0 1508.3 L2893.0 1504.8 L2890.2 1502.2 L2886.7 1497.0 L2886.7 1490.9 L2887.9 1485.1 L2889.0 1479.3 L2889.9 1473.4 L2883.3 1468.7 L2876.5 1468.1 L2869.1 1468.7 L2862.3 1468.7 L2858.3 1468.9 L2860.0 1464.5 L2861.1 1458.6 L2861.7 1453.2 L2864.6 1449.6 L2865.4 1442.3 L2869.1 1436.6 L2867.4 1433.8 L2859.4 1434.1 L2849.8 1436.9 L2848.1 1443.5 L2846.3 1447.8 L2842.4 1452.0 L2835.5 1452.0 L2828.1 1454.4 L2823.6 1452.9 L2817.9 1450.2 L2815.1 1446.6 L2810.5 1439.3 L2807.7 1432.6 L2806.5 1427.7 L2807.1 1419.0 L2809.4 1410.9 L2809.9 1406.4 L2808.8 1398.2 L2812.2 1392.4 L2819.6 1388.5 L2824.2 1384.6 L2829.3 1382.6 L2837.8 1383.6 L2843.5 1385.2 L2848.6 1386.5 L2854.3 1387.5 L2854.9 1383.9 L2852.6 1380.0 L2857.2 1378.0 L2862.3 1378.7 L2866.8 1378.4 L2871.9 1378.0 L2875.9 1380.3 L2877.6 1382.6 L2883.3 1380.3 L2887.3 1382.6 L2890.7 1386.5 L2892.4 1391.7 L2891.9 1395.6 L2894.7 1400.7 L2897.0 1404.5 L2898.1 1407.1 L2901.5 1411.8 L2905.5 1411.5 L2907.2 1407.7 L2907.8 1401.4 L2904.7 1391.7 L2902.1 1385.2 L2899.8 1378.0 L2901.5 1370.1 L2903.8 1365.4 L2908.9 1362.0 L2913.5 1357.2 L2919.2 1354.5 L2923.7 1350.4 L2927.7 1349.0 L2932.8 1345.2 L2931.1 1336.4 L2928.8 1332.8 L2928.3 1326.4 L2927.7 1318.4 L2930.0 1315.5 L2930.5 1324.2 L2931.1 1331.4 L2934.5 1325.7 L2935.7 1320.6 L2933.4 1315.5 L2936.8 1318.4 L2940.8 1313.3 L2941.9 1307.3 L2944.2 1306.6 L2953.3 1303.5 L2949.9 1301.7 L2956.1 1300.5 L2960.7 1299.0 L2964.7 1298.6 L2964.1 1295.6 L2961.3 1296.3 L2959.0 1293.3 L2960.7 1288.2 L2963.5 1283.2 L2969.2 1280.4 L2974.3 1277.2 L2981.7 1274.0 L2987.4 1270.4 L2993.7 1266.8 L2996.0 1270.0 L2988.6 1275.6 L2986.9 1282.0 L2990.3 1284.3 L2997.7 1277.2 L3003.4 1274.8 L3013.0 1270.8 L3015.9 1269.2 L3021.6 1265.1 L3019.3 1256.0 L3013.6 1266.8 L3006.2 1266.8 L2999.9 1264.3 L2995.4 1261.8 L2993.1 1255.2 L2994.3 1250.2 L2988.6 1250.2 L2985.7 1247.2 L2994.3 1245.9 L2997.1 1240.3 L2990.3 1236.9 L2981.7 1239.9 L2973.2 1244.2 L2965.2 1251.0 L2959.0 1256.9 L2963.5 1251.0 L2966.4 1246.3 L2974.9 1237.7 L2984.6 1228.5 L2998.8 1227.6 L3011.3 1228.5 L3021.6 1226.7 L3029.5 1220.4 L3038.6 1216.8 L3045.5 1210.3 L3045.5 1199.0 L3036.9 1193.3 L3029.5 1192.3 L3020.4 1196.2 L3029.5 1188.4 L3036.4 1187.4 L3026.1 1180.5 L3019.3 1178.5 L3011.9 1167.3 L3013.0 1156.8 L3006.8 1146.0 L3001.1 1135.0 L2996.0 1126.4 L2992.0 1133.8 L2989.7 1141.6 L2984.6 1144.9 L2974.9 1148.8 L2967.5 1142.8 L2964.7 1132.7 L2967.0 1122.4 L2960.1 1117.7 L2955.0 1114.2 L2947.6 1107.0 L2936.2 1103.3 L2924.9 1100.9 L2918.6 1102.7 L2920.9 1113.0 L2920.3 1123.5 L2923.1 1130.4 L2920.9 1138.3 L2916.9 1146.0 L2922.6 1156.8 L2927.1 1167.3 L2923.7 1176.5 L2915.8 1182.5 L2908.9 1186.9 L2912.3 1194.2 L2914.0 1203.8 L2915.8 1211.3 L2913.5 1217.7 L2908.9 1220.0 L2904.4 1217.7 L2900.4 1211.3 L2895.8 1202.8 L2895.3 1192.3 L2894.7 1182.0 L2885.0 1180.5 L2875.4 1177.5 L2864.6 1173.4 L2855.5 1164.2 L2846.3 1161.0 L2837.2 1163.1 L2835.0 1154.7 L2827.0 1144.4 L2824.2 1130.4 L2827.0 1117.7 L2834.4 1107.0 L2839.0 1097.1 L2846.3 1090.9 L2850.9 1083.2 L2859.4 1080.6 L2865.1 1074.0 L2868.0 1064.6 L2870.2 1055.0 L2873.7 1046.5 L2873.7 959.1 L2680.2 959.1Z M2633.0 1223.1 L2640.4 1230.3 L2646.7 1237.3 L2652.9 1242.5 L2659.8 1245.1 L2660.3 1239.9 L2652.9 1232.0 L2648.9 1227.6 L2639.3 1222.2Z M2606.3 1192.3 L2613.7 1193.3 L2613.1 1201.9 L2616.5 1210.3 L2610.8 1204.7 L2607.4 1198.1Z M2587.5 1152.5 L2596.0 1151.5 L2602.9 1163.1 L2608.6 1173.4 L2613.1 1183.5 L2606.3 1185.5 L2601.2 1175.5 L2593.2 1163.1Z M2483.4 1157.9 L2487.9 1163.1 L2495.9 1158.9 L2497.1 1152.5 L2491.4 1151.5 L2486.8 1153.6Z M2411.1 1129.3 L2418.5 1132.7 L2420.8 1128.2 L2416.8 1125.9Z M2386.1 1089.6 L2395.8 1093.4 L2402.6 1092.1 L2398.6 1088.3 L2391.2 1085.8Z M2475.4 1445.4 L2477.7 1449.6 L2481.7 1446.6 L2480.0 1443.5 L2476.6 1442.3Z M2471.5 1437.8 L2475.4 1439.9 L2474.9 1437.8Z M2462.6 1434.1 L2465.8 1435.6 L2464.3 1433.2Z M2876.5 1057.7 L2870.8 1071.4 L2868.0 1083.2 L2873.7 1090.9 L2882.2 1090.9 L2890.7 1080.6 L2896.4 1085.8 L2905.5 1087.0 L2902.1 1075.3 L2891.9 1070.0 L2885.0 1063.2 L2879.3 1055.0Z M2890.2 1095.9 L2896.4 1099.6 L2897.0 1095.3 L2893.0 1094.6Z M2906.1 1103.3 L2911.2 1107.0 L2910.1 1111.8 L2906.7 1109.4Z M2916.3 1074.0 L2922.0 1079.3 L2928.8 1078.0 L2939.1 1075.3 L2947.6 1078.0 L2954.4 1085.8 L2964.7 1097.1 L2976.1 1103.3 L2985.7 1108.2 L2991.4 1103.3 L2984.0 1094.6 L2973.2 1085.1 L2982.9 1092.1 L2993.1 1097.1 L2996.0 1089.6 L2989.7 1075.3 L2981.7 1066.0 L2977.2 1056.3 L2985.7 1050.7 L2994.3 1059.1 L3001.7 1068.7 L3009.1 1059.1 L3013.6 1046.5 L3010.2 959.1 L2919.2 959.1 L2944.8 1047.9 L2946.5 1060.5 L2939.1 1064.6 L2930.5 1066.0 L2922.0 1063.2 L2916.9 1068.7Z M2990.3 1111.8 L2995.4 1114.2 L2994.3 1110.0Z M2973.8 1124.7 L2977.8 1127.0 L2976.6 1123.5Z M2908.9 1168.3 L2913.5 1173.4 L2912.3 1167.3Z M3025.5 1251.0 L3030.7 1244.2 L3026.1 1243.3 L3031.2 1236.4 L3035.2 1226.7 L3039.2 1218.6 L3046.6 1215.9 L3044.9 1222.2 L3040.3 1230.3 L3044.3 1232.0 L3047.7 1234.7 L3052.9 1234.7 L3058.0 1236.4 L3060.8 1241.6 L3056.8 1245.9 L3061.4 1246.8 L3063.1 1251.8 L3060.8 1258.9 L3057.4 1256.0 L3055.1 1257.3 L3054.6 1251.0 L3050.0 1254.4 L3045.5 1256.9 L3044.3 1251.0 L3035.8 1250.6Z M2996.0 1231.6 L3004.5 1232.0 L3011.9 1238.2 L3005.6 1237.7 L2999.4 1235.5Z M2996.5 1256.9 L3003.4 1260.2 L3010.2 1260.6 L3006.8 1264.3 L3001.1 1263.1Z M3057.4 1040.7 L3060.3 1055.0 L3065.4 1066.0 L3068.2 1079.3 L3073.3 1092.1 L3078.5 1104.5 L3085.3 1115.3 L3095.5 1121.2 L3105.2 1128.2 L3113.2 1132.7 L3118.3 1127.0 L3120.6 1113.0 L3126.2 1097.1 L3131.9 1084.5 L3135.3 1071.4 L3145.6 1061.9 L3155.3 1056.3 L3166.6 1047.9 L3192.2 1010.3 L3050.0 994.0Z M3224.1 1061.2 L3232.1 1049.3 L3240.0 1060.5 L3247.4 1054.3 L3257.7 1052.8 L3270.2 1047.9 L3279.3 1055.0 L3285.5 1063.2 L3284.4 1071.4 L3277.6 1078.0 L3267.3 1083.8 L3255.9 1089.6 L3246.8 1087.0 L3234.3 1084.5 L3238.3 1079.3 L3236.0 1074.0 L3226.4 1070.7 L3236.6 1067.3 L3234.3 1061.9Z M2879.6 1432.3 L2883.3 1429.5 L2889.6 1425.5 L2894.1 1424.3 L2899.3 1424.6 L2904.9 1425.2 L2911.2 1428.0 L2917.5 1429.5 L2923.7 1432.9 L2930.5 1436.6 L2932.8 1439.0 L2939.1 1441.4 L2941.1 1442.3 L2935.7 1444.1 L2930.5 1443.8 L2924.9 1444.1 L2920.6 1444.4 L2923.7 1440.8 L2918.0 1438.7 L2914.6 1433.8 L2907.8 1432.9 L2904.9 1431.0 L2899.8 1430.4 L2895.3 1427.7 L2889.6 1430.1 L2885.0 1432.0Z M2945.3 1444.7 L2952.2 1445.1 L2955.6 1444.1 L2960.7 1444.7 L2965.2 1445.7 L2969.2 1447.8 L2967.0 1449.3 L2972.1 1449.9 L2974.1 1452.0 L2970.9 1453.2 L2965.2 1452.9 L2961.8 1454.4 L2958.4 1454.4 L2956.7 1458.0 L2954.4 1455.3 L2949.9 1454.4 L2943.6 1454.7 L2939.4 1453.5 L2941.4 1451.7 L2947.6 1452.9 L2951.0 1452.0 L2948.7 1448.4 L2949.3 1446.6Z M2917.2 1453.8 L2920.3 1452.6 L2925.4 1453.2 L2929.4 1455.6 L2926.0 1456.2 L2923.1 1457.1 L2918.6 1455.0Z M2980.3 1453.2 L2989.7 1453.2 L2988.9 1455.6 L2980.6 1455.9Z M3010.8 1498.5 L3016.4 1497.9 L3015.9 1501.9 L3010.8 1502.2Z M2916.9 1412.1 L2920.3 1413.4 L2921.4 1419.0 L2918.0 1416.5Z M2913.5 1402.0 L2919.7 1402.0 L2916.3 1403.3Z M2921.4 1400.7 L2924.9 1404.5 L2923.1 1405.8Z M2922.9 1510.2 L2926.0 1514.0 L2928.8 1508.9 L2932.8 1505.4 L2933.4 1500.2 L2937.4 1496.4 L2940.8 1495.0 L2947.6 1493.8 L2952.2 1491.5 L2955.6 1488.3 L2957.9 1490.3 L2953.9 1493.3 L2956.1 1497.3 L2959.6 1495.6 L2963.5 1493.8 L2964.7 1489.8 L2966.4 1493.8 L2973.8 1497.3 L2976.1 1499.6 L2982.3 1499.1 L2987.4 1499.3 L2992.6 1501.9 L2997.1 1500.2 L3004.5 1498.5 L3010.8 1498.5 L3006.8 1500.8 L3008.5 1503.1 L3014.7 1504.8 L3017.6 1510.0 L3022.7 1512.3 L3027.3 1515.2 L3031.8 1520.9 L3037.5 1525.5 L3045.5 1526.1 L3052.9 1526.4 L3058.5 1528.4 L3065.4 1531.8 L3069.4 1535.8 L3072.8 1539.8 L3075.6 1547.2 L3079.0 1550.6 L3076.2 1556.3 L3072.8 1559.7 L3078.5 1558.0 L3085.3 1560.8 L3088.1 1564.8 L3093.8 1563.1 L3101.2 1566.0 L3108.0 1568.8 L3110.9 1573.9 L3116.6 1573.4 L3125.1 1575.9 L3132.5 1575.6 L3138.2 1577.3 L3143.9 1580.8 L3150.7 1586.5 L3155.8 1588.5 L3162.1 1589.3 L3163.8 1593.9 L3164.9 1600.2 L3164.4 1606.5 L3160.9 1613.4 L3155.8 1619.8 L3151.3 1624.4 L3146.7 1632.0 L3143.3 1634.9 L3141.0 1640.1 L3141.0 1646.0 L3141.6 1653.1 L3139.9 1662.3 L3137.1 1668.6 L3136.5 1674.0 L3133.6 1678.3 L3130.2 1683.8 L3129.7 1688.0 L3124.0 1693.9 L3117.1 1694.5 L3109.2 1695.8 L3104.1 1699.2 L3098.9 1700.7 L3092.1 1706.0 L3087.0 1710.4 L3086.4 1719.3 L3078.5 1738.7 L2953.3 1738.7 L2956.7 1729.0 L2959.6 1719.3 L2961.8 1709.2 L2962.4 1698.2 L2961.3 1696.1 L2963.5 1688.0 L2963.8 1677.1 L2963.0 1666.8 L2957.0 1661.7 L2949.9 1656.1 L2941.9 1651.9 L2935.1 1648.1 L2929.4 1641.3 L2928.8 1637.2 L2924.3 1629.1 L2920.9 1622.7 L2918.0 1617.5 L2915.8 1611.7 L2912.3 1605.4 L2908.4 1599.0 L2901.5 1593.9 L2901.0 1588.8 L2900.4 1585.9 L2904.9 1579.6 L2908.4 1573.9 L2906.1 1575.1 L2902.7 1572.2 L2903.8 1565.4 L2905.5 1561.4 L2907.5 1558.6 L2910.1 1554.0 L2914.0 1552.3 L2916.3 1547.2 L2921.4 1544.3 L2924.3 1537.5 L2922.0 1534.6 L2922.0 1528.4 L2923.1 1523.2 L2921.4 1520.4 L2919.7 1518.6Z M1394.5 994.0 L1394.5 1036.3 L1388.9 1050.7 L1386.0 1060.5 L1380.9 1068.7 L1376.3 1076.7 L1370.7 1085.8 L1363.8 1090.2 L1358.1 1094.6 L1350.2 1100.2 L1343.9 1105.7 L1343.1 1117.7 L1343.9 1125.9 L1345.1 1137.2 L1346.8 1142.8 L1349.6 1149.3 L1355.0 1152.5 L1361.0 1150.9 L1366.7 1143.9 L1372.9 1140.5 L1375.2 1132.1 L1376.9 1139.4 L1378.6 1142.8 L1379.2 1149.3 L1382.6 1156.8 L1386.0 1165.2 L1386.6 1171.4 L1388.3 1177.5 L1391.7 1180.0 L1396.3 1178.0 L1403.6 1171.9 L1408.2 1166.8 L1409.9 1155.7 L1410.5 1146.0 L1416.2 1142.8 L1421.9 1135.0 L1418.4 1125.9 L1412.7 1122.4 L1412.2 1110.6 L1413.9 1102.1 L1419.0 1094.6 L1426.4 1088.3 L1432.1 1084.5 L1436.1 1075.3 L1437.2 1066.0 L1441.8 1059.1 L1452.0 1057.7 L1458.8 1066.0 L1454.8 1075.3 L1446.9 1083.8 L1437.8 1093.4 L1436.1 1103.3 L1437.2 1114.2 L1436.6 1122.4 L1441.2 1125.9 L1445.7 1132.1 L1457.1 1128.2 L1468.5 1124.7 L1478.2 1122.4 L1486.7 1131.0 L1479.9 1132.1 L1474.2 1136.1 L1462.8 1135.0 L1456.0 1136.6 L1448.6 1139.4 L1449.2 1143.9 L1454.3 1148.8 L1453.1 1157.9 L1451.4 1163.1 L1446.9 1163.1 L1443.5 1155.7 L1437.8 1158.9 L1434.4 1168.3 L1434.9 1176.5 L1431.5 1184.0 L1427.5 1188.9 L1421.3 1189.4 L1419.6 1185.9 L1411.6 1186.9 L1403.6 1191.3 L1396.3 1194.2 L1392.3 1188.4 L1384.3 1191.8 L1376.9 1193.8 L1372.9 1189.4 L1369.5 1185.5 L1371.8 1180.5 L1373.5 1171.9 L1376.9 1169.3 L1373.5 1166.2 L1374.6 1158.9 L1375.2 1155.2 L1370.7 1157.3 L1363.8 1162.1 L1361.3 1168.3 L1361.0 1178.0 L1363.8 1180.5 L1364.1 1184.5 L1364.4 1190.4 L1363.8 1194.7 L1360.4 1196.2 L1355.3 1198.1 L1354.2 1199.0 L1346.8 1199.5 L1342.2 1203.3 L1339.4 1211.3 L1335.4 1217.2 L1331.4 1219.1 L1325.1 1221.8 L1324.0 1227.6 L1321.2 1230.7 L1315.5 1234.2 L1309.2 1235.5 L1307.2 1232.9 L1304.1 1232.9 L1305.8 1241.6 L1300.1 1242.5 L1295.0 1240.3 L1287.9 1244.2 L1288.7 1247.6 L1295.6 1250.2 L1300.7 1253.5 L1303.5 1258.5 L1308.1 1263.1 L1308.6 1268.0 L1307.8 1275.2 L1306.1 1284.3 L1303.5 1285.9 L1293.3 1284.7 L1282.5 1283.5 L1271.1 1282.4 L1266.5 1285.9 L1262.0 1289.0 L1264.8 1294.4 L1265.4 1302.4 L1264.3 1309.5 L1261.4 1315.8 L1260.9 1320.2 L1264.3 1322.4 L1264.8 1326.0 L1263.7 1332.8 L1270.0 1332.8 L1275.4 1331.4 L1279.1 1336.4 L1283.0 1339.9 L1285.3 1337.5 L1289.9 1335.0 L1295.0 1335.0 L1301.8 1334.6 L1305.2 1330.7 L1310.9 1328.6 L1312.6 1322.8 L1316.0 1320.2 L1313.2 1315.1 L1315.5 1310.3 L1319.7 1305.8 L1322.3 1302.8 L1327.4 1300.9 L1333.1 1296.0 L1332.5 1291.3 L1333.1 1286.7 L1337.7 1284.3 L1342.8 1285.5 L1345.6 1286.3 L1349.0 1287.8 L1353.0 1286.3 L1357.0 1282.4 L1361.5 1280.4 L1365.5 1277.2 L1370.7 1280.0 L1373.5 1284.3 L1374.9 1288.6 L1378.6 1292.9 L1382.0 1295.2 L1384.9 1298.2 L1388.9 1301.7 L1393.4 1302.4 L1396.3 1305.1 L1399.1 1306.6 L1400.2 1309.5 L1402.5 1311.0 L1404.8 1312.5 L1406.5 1318.4 L1405.1 1322.1 L1403.9 1325.7 L1406.5 1326.4 L1409.3 1321.3 L1412.2 1318.8 L1412.2 1315.5 L1409.1 1312.9 L1411.0 1308.1 L1413.3 1307.7 L1417.3 1311.0 L1419.6 1312.5 L1420.1 1309.5 L1416.7 1305.8 L1411.0 1302.4 L1405.9 1299.8 L1407.1 1296.7 L1401.9 1296.7 L1398.5 1294.8 L1395.1 1291.3 L1392.3 1284.3 L1386.6 1280.4 L1384.9 1276.4 L1385.4 1270.0 L1389.4 1266.8 L1392.8 1267.2 L1391.7 1268.8 L1394.0 1274.0 L1396.8 1270.0 L1399.7 1272.4 L1401.4 1278.8 L1405.4 1282.8 L1408.8 1284.3 L1413.9 1288.2 L1417.9 1291.3 L1420.7 1292.9 L1424.1 1296.3 L1425.8 1301.3 L1424.7 1307.3 L1428.1 1311.8 L1430.4 1315.5 L1433.2 1318.8 L1434.9 1323.1 L1437.8 1324.2 L1435.5 1327.1 L1437.8 1331.4 L1438.3 1334.3 L1440.9 1332.8 L1442.6 1337.1 L1444.0 1334.6 L1446.6 1336.7 L1445.2 1330.0 L1448.0 1330.0 L1445.7 1326.4 L1449.4 1326.0 L1451.7 1328.2 L1451.4 1324.2 L1447.5 1321.3 L1444.0 1319.5 L1445.7 1316.9 L1447.5 1316.9 L1444.6 1311.8 L1443.5 1308.1 L1445.2 1306.6 L1448.0 1309.2 L1449.2 1311.4 L1451.4 1308.4 L1453.7 1309.9 L1450.9 1305.4 L1454.3 1303.9 L1458.3 1303.9 L1462.8 1305.1 L1463.9 1308.8 L1464.5 1310.7 L1466.8 1307.7 L1471.3 1303.8 L1477.6 1303.5 L1479.9 1303.2 L1480.4 1301.7 L1474.8 1299.0 L1473.6 1296.0 L1471.3 1292.1 L1473.6 1286.7 L1477.3 1285.1 L1477.9 1278.8 L1479.9 1274.0 L1483.9 1270.8 L1485.6 1265.1 L1490.1 1260.2 L1494.7 1259.4 L1498.7 1260.6 L1495.8 1262.2 L1502.6 1263.9 L1506.0 1263.5 L1500.9 1266.3 L1499.8 1269.6 L1505.5 1271.6 L1504.9 1276.0 L1508.9 1277.2 L1514.6 1274.0 L1517.4 1271.6 L1522.5 1270.8 L1522.5 1268.8 L1516.9 1270.0 L1514.0 1266.8 L1512.9 1263.1 L1516.3 1261.0 L1524.3 1258.5 L1528.8 1255.2 L1534.5 1254.8 L1538.5 1254.4 L1533.4 1258.5 L1530.5 1261.0 L1531.1 1264.3 L1528.2 1269.2 L1523.7 1270.0 L1527.1 1273.2 L1529.9 1274.8 L1536.8 1279.2 L1540.7 1283.9 L1544.2 1287.1 L1548.7 1289.0 L1551.6 1294.8 L1551.3 1299.0 L1544.7 1303.2 L1540.2 1303.2 L1533.4 1304.3 L1528.2 1302.8 L1522.5 1301.3 L1519.7 1298.2 L1515.1 1295.6 L1508.3 1296.1 L1502.6 1296.7 L1498.1 1298.2 L1493.5 1301.3 L1487.3 1302.4 L1483.3 1302.0 L1480.2 1303.2 L1485.0 1305.4 L1479.9 1307.7 L1474.2 1308.1 L1470.2 1307.7 L1465.7 1309.5 L1463.7 1311.4 L1463.4 1314.7 L1467.9 1314.4 L1466.8 1316.6 L1468.5 1319.1 L1467.4 1321.0 L1469.1 1322.4 L1464.8 1321.0 L1464.5 1323.9 L1467.4 1324.9 L1469.9 1327.1 L1469.6 1330.7 L1471.9 1332.8 L1470.2 1335.0 L1475.3 1335.0 L1475.9 1333.9 L1479.9 1335.3 L1482.2 1338.5 L1487.8 1338.5 L1489.0 1333.9 L1493.5 1334.6 L1496.9 1336.4 L1501.5 1339.6 L1507.8 1337.8 L1511.7 1334.3 L1516.9 1335.7 L1520.6 1335.3 L1519.1 1338.5 L1518.3 1343.4 L1519.1 1347.6 L1517.4 1352.4 L1515.1 1358.6 L1514.0 1362.0 L1512.6 1367.0 L1510.0 1371.7 L1506.0 1373.4 L1501.5 1373.7 L1498.7 1372.4 L1500.1 1381.0 L1500.9 1383.9 L1503.8 1390.4 L1506.6 1393.0 L1509.7 1395.3 L1511.2 1390.4 L1513.7 1383.6 L1512.9 1389.1 L1511.7 1393.3 L1517.4 1397.5 L1522.5 1405.2 L1526.5 1412.1 L1531.1 1418.4 L1536.2 1425.8 L1537.3 1434.4 L1543.6 1442.3 L1548.7 1449.0 L1552.1 1455.6 L1556.7 1462.1 L1558.4 1467.5 L1559.5 1474.6 L1560.9 1483.3 L1562.1 1487.1 L1570.9 1486.3 L1579.4 1482.8 L1588.0 1479.3 L1594.8 1476.0 L1602.2 1472.8 L1611.9 1466.9 L1617.5 1463.3 L1623.2 1461.5 L1629.5 1458.9 L1635.2 1456.2 L1638.0 1451.4 L1643.7 1449.6 L1643.1 1445.4 L1644.3 1441.7 L1648.3 1440.5 L1652.3 1435.0 L1655.1 1428.3 L1650.0 1422.7 L1644.3 1420.2 L1637.5 1416.5 L1635.2 1410.9 L1635.8 1404.2 L1633.5 1406.4 L1629.5 1410.9 L1624.4 1416.5 L1618.1 1418.4 L1609.6 1419.0 L1607.3 1415.9 L1608.4 1410.9 L1607.9 1407.1 L1606.2 1405.5 L1603.9 1409.6 L1604.2 1414.3 L1601.1 1409.6 L1599.9 1403.3 L1597.1 1398.8 L1592.5 1395.0 L1590.2 1390.4 L1588.0 1384.9 L1590.8 1380.7 L1594.2 1377.7 L1599.9 1380.0 L1604.5 1387.2 L1608.4 1394.6 L1614.1 1397.8 L1619.8 1402.0 L1626.7 1403.3 L1632.3 1400.7 L1635.8 1399.1 L1639.2 1400.7 L1640.9 1407.1 L1647.7 1409.3 L1659.6 1410.9 L1669.3 1411.8 L1679.0 1410.9 L1687.5 1410.5 L1693.8 1410.2 L1696.1 1414.0 L1698.9 1419.6 L1702.9 1421.5 L1706.9 1428.9 L1708.6 1426.4 L1714.3 1425.2 L1715.4 1427.7 L1708.6 1429.5 L1711.4 1434.4 L1716.0 1438.7 L1719.9 1439.0 L1725.1 1436.2 L1726.8 1430.1 L1727.9 1433.8 L1729.1 1440.5 L1729.1 1449.6 L1731.3 1459.8 L1733.6 1468.1 L1737.0 1475.1 L1740.4 1485.7 L1745.0 1493.8 L1748.4 1502.5 L1750.7 1508.9 L1753.5 1512.9 L1756.1 1513.6 L1759.5 1509.4 L1764.3 1506.6 L1766.0 1500.8 L1769.2 1500.2 L1768.9 1491.5 L1771.7 1483.9 L1770.6 1475.1 L1771.1 1469.8 L1775.7 1468.7 L1777.4 1465.7 L1783.1 1463.9 L1783.7 1461.2 L1789.4 1457.1 L1794.5 1452.6 L1798.5 1447.8 L1804.1 1444.4 L1808.7 1441.7 L1809.8 1435.6 L1815.5 1433.8 L1821.2 1432.6 L1826.9 1432.0 L1830.3 1428.3 L1834.9 1427.0 L1837.1 1429.5 L1838.8 1436.2 L1840.6 1439.9 L1844.0 1443.5 L1847.9 1447.8 L1851.4 1452.6 L1853.1 1458.6 L1851.4 1467.5 L1857.1 1468.9 L1861.0 1465.7 L1865.6 1461.5 L1867.9 1461.5 L1870.1 1465.7 L1871.3 1472.2 L1873.0 1479.3 L1875.8 1488.0 L1876.4 1494.4 L1875.5 1502.5 L1874.1 1508.3 L1874.1 1514.6 L1877.5 1513.8 L1880.9 1518.6 L1884.4 1522.6 L1886.1 1528.4 L1887.2 1535.8 L1890.0 1541.5 L1892.3 1544.3 L1896.9 1547.5 L1903.1 1551.5 L1907.1 1552.0 L1908.0 1550.6 L1905.4 1545.5 L1903.1 1538.6 L1903.4 1532.4 L1901.4 1528.9 L1896.9 1524.4 L1892.9 1522.1 L1889.5 1520.4 L1887.2 1518.1 L1884.9 1511.7 L1883.2 1506.6 L1879.8 1506.8 L1879.2 1500.2 L1881.5 1493.8 L1883.5 1488.0 L1883.8 1483.3 L1887.2 1481.9 L1889.2 1483.3 L1888.9 1487.1 L1894.0 1487.4 L1898.0 1490.3 L1900.9 1493.8 L1903.7 1499.1 L1908.8 1500.2 L1912.8 1502.5 L1911.1 1508.3 L1911.1 1510.6 L1915.6 1508.3 L1920.2 1505.4 L1922.5 1501.4 L1925.9 1499.6 L1930.4 1497.0 L1935.0 1494.4 L1936.4 1489.2 L1937.3 1485.7 L1936.4 1480.4 L1934.4 1472.2 L1931.0 1466.9 L1927.0 1463.9 L1921.3 1458.6 L1916.8 1451.4 L1917.4 1444.7 L1921.3 1440.5 L1925.3 1437.5 L1929.3 1434.1 L1935.6 1434.4 L1939.3 1435.6 L1940.1 1441.7 L1943.0 1441.7 L1943.0 1436.2 L1948.1 1434.4 L1952.6 1432.6 L1959.5 1430.7 L1961.2 1426.7 L1964.6 1429.5 L1971.4 1426.7 L1978.8 1423.3 L1985.1 1418.4 L1990.2 1413.4 L1994.7 1407.7 L1998.1 1401.4 L2002.1 1395.0 L2006.7 1389.8 L2008.9 1382.0 L2005.5 1379.3 L2002.7 1378.0 L2007.8 1374.7 L2008.4 1370.7 L2005.0 1366.0 L2002.7 1361.3 L1999.8 1353.8 L1993.6 1348.3 L1995.3 1343.4 L1999.8 1339.2 L2004.4 1335.0 L2011.8 1333.6 L2012.4 1330.0 L2006.1 1329.3 L2001.5 1327.1 L1995.3 1331.4 L1991.3 1329.3 L1991.9 1326.4 L1986.2 1323.5 L1984.5 1318.8 L1989.0 1316.9 L1994.2 1312.5 L2001.0 1308.1 L2007.8 1304.3 L2010.7 1307.3 L2005.5 1314.7 L2005.0 1319.9 L2010.1 1316.9 L2017.5 1313.3 L2022.6 1311.8 L2026.0 1314.0 L2027.7 1320.6 L2024.9 1324.9 L2029.4 1327.1 L2034.5 1328.6 L2036.3 1333.6 L2033.4 1335.0 L2035.1 1340.6 L2034.0 1347.6 L2034.5 1351.7 L2040.2 1349.7 L2045.4 1347.9 L2049.3 1345.9 L2051.6 1339.9 L2051.0 1332.8 L2048.2 1327.1 L2044.8 1321.3 L2040.2 1316.9 L2040.8 1312.5 L2045.9 1310.3 L2050.5 1305.8 L2053.3 1299.8 L2057.3 1293.7 L2060.1 1290.6 L2065.8 1286.7 L2071.5 1290.2 L2084.6 1282.0 L2091.4 1272.4 L2100.0 1260.2 L2107.4 1248.5 L2113.1 1239.0 L2114.8 1227.6 L2119.3 1212.2 L2118.7 1200.9 L2113.1 1195.2 L2106.8 1191.3 L2101.7 1195.2 L2096.0 1197.1 L2095.4 1191.3 L2088.6 1187.4 L2084.6 1185.9 L2095.4 1177.5 L2101.1 1168.3 L2113.1 1154.7 L2122.7 1141.6 L2131.3 1137.8 L2144.3 1137.2 L2161.4 1137.2 L2172.8 1135.5 L2180.7 1142.8 L2187.0 1140.0 L2196.7 1138.3 L2193.3 1131.6 L2202.4 1120.1 L2210.9 1110.6 L2222.3 1110.6 L2226.8 1118.9 L2226.3 1123.5 L2233.1 1123.5 L2240.5 1111.8 L2245.0 1102.1 L2251.3 1099.6 L2247.9 1110.6 L2245.6 1120.1 L2241.1 1128.2 L2235.9 1131.6 L2227.4 1137.2 L2224.0 1146.0 L2219.4 1153.6 L2212.6 1157.9 L2206.9 1165.2 L2201.8 1173.4 L2200.1 1184.5 L2200.7 1197.1 L2203.5 1208.5 L2206.3 1219.5 L2210.9 1216.8 L2216.0 1208.5 L2217.7 1202.8 L2225.1 1200.9 L2225.1 1191.3 L2235.4 1187.4 L2237.1 1185.5 L2235.4 1178.5 L2239.9 1171.4 L2243.9 1172.4 L2242.2 1163.1 L2241.1 1154.7 L2236.5 1151.5 L2243.3 1138.3 L2250.7 1131.6 L2261.0 1127.0 L2272.3 1124.7 L2283.7 1131.0 L2293.4 1118.9 L2307.6 1109.4 L2323.5 1100.9 L2333.8 1103.3 L2335.5 1093.4 L2330.4 1087.0 L2324.7 1078.0 L2325.2 1072.0 L2330.9 1073.4 L2338.9 1068.0 L2346.9 1061.9 L2344.0 1050.7 L2358.8 1061.2 L2366.2 1071.4 L2377.6 1076.7 L2383.3 1076.0 L2390.1 1061.9 L2397.8 1053.6 L2384.4 1037.8 L2338.9 1010.3 L2338.9 959.1 L1394.5 959.1Z M3442.5 994.0 L3442.5 1036.3 L3436.9 1050.7 L3434.0 1060.5 L3428.9 1068.7 L3424.3 1076.7 L3418.7 1085.8 L3411.8 1090.2 L3406.1 1094.6 L3398.2 1100.2 L3391.9 1105.7 L3391.1 1117.7 L3391.9 1125.9 L3393.1 1137.2 L3394.8 1142.8 L3397.6 1149.3 L3403.0 1152.5 L3409.0 1150.9 L3414.7 1143.9 L3420.9 1140.5 L3423.2 1132.1 L3424.9 1139.4 L3426.6 1142.8 L3427.2 1149.3 L3430.6 1156.8 L3434.0 1165.2 L3434.6 1171.4 L3436.3 1177.5 L3439.7 1180.0 L3444.3 1178.0 L3451.6 1171.9 L3456.2 1166.8 L3457.9 1155.7 L3458.5 1146.0 L3464.2 1142.8 L3469.9 1135.0 L3466.4 1125.9 L3460.7 1122.4 L3460.2 1110.6 L3461.9 1102.1 L3467.0 1094.6 L3474.4 1088.3 L3480.1 1084.5 L3484.1 1075.3 L3485.2 1066.0 L3489.8 1059.1 L3500.0 1057.7 L3506.8 1066.0 L3502.8 1075.3 L3494.9 1083.8 L3485.8 1093.4 L3484.1 1103.3 L3485.2 1114.2 L3484.6 1122.4 L3489.2 1125.9 L3493.7 1132.1 L3505.1 1128.2 L3516.5 1124.7 L3526.2 1122.4 L3534.7 1131.0 L3527.9 1132.1 L3522.2 1136.1 L3510.8 1135.0 L3504.0 1136.6 L3496.6 1139.4 L3497.2 1143.9 L3502.3 1148.8 L3501.1 1157.9 L3499.4 1163.1 L3494.9 1163.1 L3491.5 1155.7 L3485.8 1158.9 L3482.4 1168.3 L3482.9 1176.5 L3479.5 1184.0 L3475.5 1188.9 L3469.3 1189.4 L3467.6 1185.9 L3459.6 1186.9 L3451.6 1191.3 L3444.3 1194.2 L3440.3 1188.4 L3432.3 1191.8 L3424.9 1193.8 L3420.9 1189.4 L3417.5 1185.5 L3419.8 1180.5 L3421.5 1171.9 L3424.9 1169.3 L3421.5 1166.2 L3422.6 1158.9 L3423.2 1155.2 L3418.7 1157.3 L3411.8 1162.1 L3409.3 1168.3 L3409.0 1178.0 L3411.8 1180.5 L3412.1 1184.5 L3412.4 1190.4 L3411.8 1194.7 L3408.4 1196.2 L3403.3 1198.1 L3402.2 1199.0 L3394.8 1199.5 L3390.2 1203.3 L3387.4 1211.3 L3383.4 1217.2 L3379.4 1219.1 L3373.1 1221.8 L3372.0 1227.6 L3369.2 1230.7 L3363.5 1234.2 L3357.2 1235.5 L3355.2 1232.9 L3352.1 1232.9 L3353.8 1241.6 L3348.1 1242.5 L3343.0 1240.3 L3335.9 1244.2 L3336.7 1247.6 L3343.6 1250.2 L3348.7 1253.5 L3351.5 1258.5 L3356.1 1263.1 L3356.6 1268.0 L3355.8 1275.2 L3354.1 1284.3 L3351.5 1285.9 L3341.3 1284.7 L3330.5 1283.5 L3319.1 1282.4 L3314.5 1285.9 L3310.0 1289.0 L3312.8 1294.4 L3313.4 1302.4 L3312.3 1309.5 L3309.4 1315.8 L3308.9 1320.2 L3312.3 1322.4 L3312.8 1326.0 L3311.7 1332.8 L3318.0 1332.8 L3323.4 1331.4 L3327.1 1336.4 L3331.0 1339.9 L3333.3 1337.5 L3337.9 1335.0 L3343.0 1335.0 L3349.8 1334.6 L3353.2 1330.7 L3358.9 1328.6 L3360.6 1322.8 L3364.0 1320.2 L3361.2 1315.1 L3363.5 1310.3 L3367.7 1305.8 L3370.3 1302.8 L3375.4 1300.9 L3381.1 1296.0 L3380.5 1291.3 L3381.1 1286.7 L3385.7 1284.3 L3390.8 1285.5 L3393.6 1286.3 L3397.0 1287.8 L3401.0 1286.3 L3405.0 1282.4 L3409.5 1280.4 L3413.5 1277.2 L3418.7 1280.0 L3421.5 1284.3 L3422.9 1288.6 L3426.6 1292.9 L3430.0 1295.2 L3432.9 1298.2 L3436.9 1301.7 L3441.4 1302.4 L3444.3 1305.1 L3447.1 1306.6 L3448.2 1309.5 L3450.5 1311.0 L3452.8 1312.5 L3454.5 1318.4 L3453.1 1322.1 L3451.9 1325.7 L3454.5 1326.4 L3457.3 1321.3 L3460.2 1318.8 L3460.2 1315.5 L3457.1 1312.9 L3459.0 1308.1 L3461.3 1307.7 L3465.3 1311.0 L3467.6 1312.5 L3468.1 1309.5 L3464.7 1305.8 L3459.0 1302.4 L3453.9 1299.8 L3455.1 1296.7 L3449.9 1296.7 L3446.5 1294.8 L3443.1 1291.3 L3440.3 1284.3 L3434.6 1280.4 L3432.9 1276.4 L3433.4 1270.0 L3437.4 1266.8 L3440.8 1267.2 L3439.7 1268.8 L3442.0 1274.0 L3444.8 1270.0 L3447.7 1272.4 L3449.4 1278.8 L3453.4 1282.8 L3456.8 1284.3 L3461.9 1288.2 L3465.9 1291.3 L3468.7 1292.9 L3472.1 1296.3 L3473.8 1301.3 L3472.7 1307.3 L3476.1 1311.8 L3478.4 1315.5 L3481.2 1318.8 L3482.9 1323.1 L3485.8 1324.2 L3483.5 1327.1 L3485.8 1331.4 L3486.3 1334.3 L3488.9 1332.8 L3490.6 1337.1 L3492.0 1334.6 L3494.6 1336.7 L3493.2 1330.0 L3496.0 1330.0 L3493.7 1326.4 L3497.4 1326.0 L3499.7 1328.2 L3499.4 1324.2 L3495.5 1321.3 L3492.0 1319.5 L3493.7 1316.9 L3495.5 1316.9 L3492.6 1311.8 L3491.5 1308.1 L3493.2 1306.6 L3496.0 1309.2 L3497.2 1311.4 L3499.4 1308.4 L3501.7 1309.9 L3498.9 1305.4 L3502.3 1303.9 L3506.3 1303.9 L3510.8 1305.1 L3511.9 1308.8 L3512.5 1310.7 L3514.8 1307.7 L3519.3 1303.8 L3525.6 1303.5 L3527.9 1303.2 L3528.4 1301.7 L3522.8 1299.0 L3521.6 1296.0 L3519.3 1292.1 L3521.6 1286.7 L3525.3 1285.1 L3525.9 1278.8 L3527.9 1274.0 L3531.9 1270.8 L3533.6 1265.1 L3538.1 1260.2 L3542.7 1259.4 L3546.7 1260.6 L3543.8 1262.2 L3550.6 1263.9 L3554.0 1263.5 L3548.9 1266.3 L3547.8 1269.6 L3553.5 1271.6 L3552.9 1276.0 L3556.9 1277.2 L3562.6 1274.0 L3565.4 1271.6 L3570.5 1270.8 L3570.5 1268.8 L3564.9 1270.0 L3562.0 1266.8 L3560.9 1263.1 L3564.3 1261.0 L3572.3 1258.5 L3576.8 1255.2 L3582.5 1254.8 L3586.5 1254.4 L3581.4 1258.5 L3578.5 1261.0 L3579.1 1264.3 L3576.2 1269.2 L3571.7 1270.0 L3575.1 1273.2 L3577.9 1274.8 L3584.8 1279.2 L3588.7 1283.9 L3592.2 1287.1 L3596.7 1289.0 L3599.6 1294.8 L3599.3 1299.0 L3592.7 1303.2 L3588.2 1303.2 L3581.4 1304.3 L3576.2 1302.8 L3570.5 1301.3 L3567.7 1298.2 L3563.1 1295.6 L3556.3 1296.1 L3550.6 1296.7 L3546.1 1298.2 L3541.5 1301.3 L3535.3 1302.4 L3531.3 1302.0 L3528.2 1303.2 L3533.0 1305.4 L3527.9 1307.7 L3522.2 1308.1 L3518.2 1307.7 L3513.7 1309.5 L3511.7 1311.4 L3511.4 1314.7 L3515.9 1314.4 L3514.8 1316.6 L3516.5 1319.1 L3515.4 1321.0 L3517.1 1322.4 L3512.8 1321.0 L3512.5 1323.9 L3515.4 1324.9 L3517.9 1327.1 L3517.6 1330.7 L3519.9 1332.8 L3518.2 1335.0 L3523.3 1335.0 L3523.9 1333.9 L3527.9 1335.3 L3530.2 1338.5 L3535.8 1338.5 L3537.0 1333.9 L3541.5 1334.6 L3544.9 1336.4 L3549.5 1339.6 L3555.8 1337.8 L3559.7 1334.3 L3564.9 1335.7 L3568.6 1335.3 L3567.1 1338.5 L3566.3 1343.4 L3567.1 1347.6 L3565.4 1352.4 L3563.1 1358.6 L3562.0 1362.0 L3560.6 1367.0 L3558.0 1371.7 L3554.0 1373.4 L3549.5 1373.7 L3546.7 1372.4 L3548.1 1381.0 L3548.9 1383.9 L3551.8 1390.4 L3554.6 1393.0 L3557.7 1395.3 L3559.2 1390.4 L3561.7 1383.6 L3560.9 1389.1 L3559.7 1393.3 L3565.4 1397.5 L3570.5 1405.2 L3574.5 1412.1 L3579.1 1418.4 L3584.2 1425.8 L3585.3 1434.4 L3591.6 1442.3 L3596.7 1449.0 L3600.1 1455.6 L3604.7 1462.1 L3606.4 1467.5 L3607.5 1474.6 L3608.9 1483.3 L3610.1 1487.1 L3618.9 1486.3 L3627.4 1482.8 L3636.0 1479.3 L3642.8 1476.0 L3650.2 1472.8 L3659.9 1466.9 L3665.5 1463.3 L3671.2 1461.5 L3677.5 1458.9 L3683.2 1456.2 L3686.0 1451.4 L3691.7 1449.6 L3691.1 1445.4 L3692.3 1441.7 L3696.3 1440.5 L3700.3 1435.0 L3703.1 1428.3 L3698.0 1422.7 L3692.3 1420.2 L3685.5 1416.5 L3683.2 1410.9 L3683.8 1404.2 L3681.5 1406.4 L3677.5 1410.9 L3672.4 1416.5 L3666.1 1418.4 L3657.6 1419.0 L3655.3 1415.9 L3656.4 1410.9 L3655.9 1407.1 L3654.2 1405.5 L3651.9 1409.6 L3652.2 1414.3 L3649.1 1409.6 L3647.9 1403.3 L3645.1 1398.8 L3640.5 1395.0 L3638.2 1390.4 L3636.0 1384.9 L3638.8 1380.7 L3642.2 1377.7 L3647.9 1380.0 L3652.5 1387.2 L3656.4 1394.6 L3662.1 1397.8 L3667.8 1402.0 L3674.7 1403.3 L3680.3 1400.7 L3683.8 1399.1 L3687.2 1400.7 L3688.9 1407.1 L3695.7 1409.3 L3707.6 1410.9 L3717.3 1411.8 L3727.0 1410.9 L3735.5 1410.5 L3741.8 1410.2 L3744.1 1414.0 L3746.9 1419.6 L3750.9 1421.5 L3754.9 1428.9 L3756.6 1426.4 L3762.3 1425.2 L3763.4 1427.7 L3756.6 1429.5 L3759.4 1434.4 L3764.0 1438.7 L3767.9 1439.0 L3773.1 1436.2 L3774.8 1430.1 L3775.9 1433.8 L3777.1 1440.5 L3777.1 1449.6 L3779.3 1459.8 L3781.6 1468.1 L3785.0 1475.1 L3788.4 1485.7 L3793.0 1493.8 L3796.4 1502.5 L3798.7 1508.9 L3801.5 1512.9 L3804.1 1513.6 L3807.5 1509.4 L3812.3 1506.6 L3814.0 1500.8 L3817.2 1500.2 L3816.9 1491.5 L3819.7 1483.9 L3818.6 1475.1 L3819.1 1469.8 L3823.7 1468.7 L3825.4 1465.7 L3831.1 1463.9 L3831.7 1461.2 L3837.4 1457.1 L3842.5 1452.6 L3846.5 1447.8 L3852.1 1444.4 L3856.7 1441.7 L3857.8 1435.6 L3863.5 1433.8 L3869.2 1432.6 L3874.9 1432.0 L3878.3 1428.3 L3882.9 1427.0 L3885.1 1429.5 L3886.8 1436.2 L3888.6 1439.9 L3892.0 1443.5 L3895.9 1447.8 L3899.4 1452.6 L3901.1 1458.6 L3899.4 1467.5 L3905.1 1468.9 L3909.0 1465.7 L3913.6 1461.5 L3915.9 1461.5 L3918.1 1465.7 L3919.3 1472.2 L3921.0 1479.3 L3923.8 1488.0 L3924.4 1494.4 L3923.5 1502.5 L3922.1 1508.3 L3922.1 1514.6 L3925.5 1513.8 L3928.9 1518.6 L3932.4 1522.6 L3934.1 1528.4 L3935.2 1535.8 L3938.0 1541.5 L3940.3 1544.3 L3944.9 1547.5 L3951.1 1551.5 L3955.1 1552.0 L3956.0 1550.6 L3953.4 1545.5 L3951.1 1538.6 L3951.4 1532.4 L3949.4 1528.9 L3944.9 1524.4 L3940.9 1522.1 L3937.5 1520.4 L3935.2 1518.1 L3932.9 1511.7 L3931.2 1506.6 L3927.8 1506.8 L3927.2 1500.2 L3929.5 1493.8 L3931.5 1488.0 L3931.8 1483.3 L3935.2 1481.9 L3937.2 1483.3 L3936.9 1487.1 L3942.0 1487.4 L3946.0 1490.3 L3948.9 1493.8 L3951.7 1499.1 L3956.8 1500.2 L3960.8 1502.5 L3959.1 1508.3 L3959.1 1510.6 L3963.6 1508.3 L3968.2 1505.4 L3970.5 1501.4 L3973.9 1499.6 L3978.4 1497.0 L3983.0 1494.4 L3984.4 1489.2 L3985.3 1485.7 L3984.4 1480.4 L3982.4 1472.2 L3979.0 1466.9 L3975.0 1463.9 L3969.3 1458.6 L3964.8 1451.4 L3965.4 1444.7 L3969.3 1440.5 L3973.3 1437.5 L3977.3 1434.1 L3983.6 1434.4 L3987.3 1435.6 L3988.1 1441.7 L3991.0 1441.7 L3991.0 1436.2 L3996.1 1434.4 L4000.6 1432.6 L4007.5 1430.7 L4009.2 1426.7 L4012.6 1429.5 L4019.4 1426.7 L4026.8 1423.3 L4033.1 1418.4 L4038.2 1413.4 L4042.7 1407.7 L4046.1 1401.4 L4050.1 1395.0 L4054.7 1389.8 L4056.9 1382.0 L4053.5 1379.3 L4050.7 1378.0 L4055.8 1374.7 L4056.4 1370.7 L4053.0 1366.0 L4050.7 1361.3 L4047.8 1353.8 L4041.6 1348.3 L4043.3 1343.4 L4047.8 1339.2 L4052.4 1335.0 L4059.8 1333.6 L4060.4 1330.0 L4054.1 1329.3 L4049.5 1327.1 L4043.3 1331.4 L4039.3 1329.3 L4039.9 1326.4 L4034.2 1323.5 L4032.5 1318.8 L4037.0 1316.9 L4042.2 1312.5 L4049.0 1308.1 L4055.8 1304.3 L4058.7 1307.3 L4053.5 1314.7 L4053.0 1319.9 L4058.1 1316.9 L4065.5 1313.3 L4070.6 1311.8 L4074.0 1314.0 L4075.7 1320.6 L4072.9 1324.9 L4077.4 1327.1 L4082.5 1328.6 L4084.3 1333.6 L4081.4 1335.0 L4083.1 1340.6 L4082.0 1347.6 L4082.5 1351.7 L4088.2 1349.7 L4093.4 1347.9 L4097.3 1345.9 L4099.6 1339.9 L4099.0 1332.8 L4096.2 1327.1 L4092.8 1321.3 L4088.2 1316.9 L4088.8 1312.5 L4093.9 1310.3 L4098.5 1305.8 L4101.3 1299.8 L4105.3 1293.7 L4108.1 1290.6 L4113.8 1286.7 L4119.5 1290.2 L4132.6 1282.0 L4139.4 1272.4 L4148.0 1260.2 L4155.4 1248.5 L4161.1 1239.0 L4162.8 1227.6 L4167.3 1212.2 L4166.7 1200.9 L4161.1 1195.2 L4154.8 1191.3 L4149.7 1195.2 L4144.0 1197.1 L4143.4 1191.3 L4136.6 1187.4 L4132.6 1185.9 L4143.4 1177.5 L4149.1 1168.3 L4161.1 1154.7 L4170.7 1141.6 L4179.3 1137.8 L4192.3 1137.2 L4209.4 1137.2 L4220.8 1135.5 L4228.7 1142.8 L4235.0 1140.0 L4244.7 1138.3 L4241.3 1131.6 L4250.4 1120.1 L4258.9 1110.6 L4270.3 1110.6 L4274.8 1118.9 L4274.3 1123.5 L4281.1 1123.5 L4288.5 1111.8 L4293.0 1102.1 L4299.3 1099.6 L4295.9 1110.6 L4293.6 1120.1 L4289.1 1128.2 L4283.9 1131.6 L4275.4 1137.2 L4272.0 1146.0 L4267.4 1153.6 L4260.6 1157.9 L4254.9 1165.2 L4249.8 1173.4 L4248.1 1184.5 L4248.7 1197.1 L4251.5 1208.5 L4254.3 1219.5 L4258.9 1216.8 L4264.0 1208.5 L4265.7 1202.8 L4273.1 1200.9 L4273.1 1191.3 L4283.4 1187.4 L4285.1 1185.5 L4283.4 1178.5 L4287.9 1171.4 L4291.9 1172.4 L4290.2 1163.1 L4289.1 1154.7 L4284.5 1151.5 L4291.3 1138.3 L4298.7 1131.6 L4309.0 1127.0 L4320.3 1124.7 L4331.7 1131.0 L4341.4 1118.9 L4355.6 1109.4 L4371.5 1100.9 L4381.8 1103.3 L4383.5 1093.4 L4378.4 1087.0 L4372.7 1078.0 L4373.2 1072.0 L4378.9 1073.4 L4386.9 1068.0 L4394.9 1061.9 L4392.0 1050.7 L4406.8 1061.2 L4414.2 1071.4 L4425.6 1076.7 L4431.3 1076.0 L4438.1 1061.9 L4445.8 1053.6 L4432.4 1037.8 L4386.9 1010.3 L4386.9 959.1 L3442.5 959.1Z M3426.0 1176.5 L3430.0 1173.9 L3434.6 1172.4 L3434.6 1177.5 L3432.3 1181.5 L3429.5 1182.5 L3426.6 1180.5Z M3418.7 1178.5 L3423.2 1177.5 L3424.3 1181.5 L3421.5 1183.0 L3419.2 1181.5Z M3425.5 1185.0 L3430.0 1184.5 L3431.7 1185.9 L3427.8 1186.9Z M3465.9 1160.0 L3469.9 1153.6 L3471.6 1154.7 L3469.3 1161.0 L3467.0 1163.6Z M3456.2 1170.9 L3459.0 1160.0 L3460.2 1160.0 L3457.3 1170.4Z M3487.5 1149.3 L3490.9 1146.0 L3494.9 1147.1 L3492.6 1150.4 L3488.6 1152.5Z M3488.6 1142.8 L3492.6 1141.1 L3493.7 1143.3 L3490.9 1144.4Z M3330.5 1229.8 L3333.3 1230.7 L3339.0 1227.2 L3342.4 1228.1 L3345.8 1224.0 L3349.0 1225.4 L3356.6 1223.6 L3364.3 1223.6 L3368.3 1222.2 L3370.9 1220.0 L3370.9 1217.7 L3366.3 1217.2 L3368.0 1214.0 L3370.3 1212.6 L3372.9 1207.5 L3370.3 1203.3 L3365.2 1203.3 L3363.5 1204.7 L3364.9 1200.9 L3363.5 1197.1 L3361.8 1192.3 L3359.5 1188.4 L3356.1 1186.9 L3354.4 1181.5 L3351.5 1176.0 L3348.1 1173.4 L3344.1 1173.4 L3348.1 1170.4 L3349.2 1166.2 L3351.2 1161.0 L3352.7 1157.9 L3351.0 1155.7 L3343.6 1155.7 L3339.0 1157.9 L3340.7 1154.1 L3345.3 1148.2 L3345.5 1145.5 L3340.1 1146.6 L3334.5 1146.0 L3332.7 1151.5 L3329.9 1156.8 L3331.0 1161.0 L3329.9 1164.2 L3327.6 1166.2 L3331.0 1168.8 L3330.5 1174.4 L3329.9 1180.5 L3332.7 1176.5 L3335.0 1174.4 L3336.2 1178.5 L3333.9 1183.5 L3335.0 1186.9 L3340.1 1185.5 L3344.7 1184.0 L3342.4 1188.4 L3344.7 1192.3 L3346.7 1191.8 L3345.5 1196.2 L3345.8 1199.5 L3341.3 1200.0 L3336.7 1199.5 L3338.4 1201.9 L3335.9 1204.7 L3339.6 1203.8 L3339.6 1208.5 L3336.2 1211.3 L3332.7 1213.1 L3333.9 1215.4 L3339.0 1215.9 L3341.9 1216.8 L3344.7 1217.7 L3347.5 1215.9 L3345.8 1219.1 L3342.4 1219.5 L3339.0 1219.5 L3337.0 1222.2 L3334.5 1225.8 L3331.6 1228.5Z M3320.8 1179.5 L3327.6 1181.5 L3331.0 1186.4 L3331.6 1190.4 L3327.6 1193.3 L3328.2 1199.5 L3328.8 1203.8 L3326.5 1210.3 L3320.2 1211.7 L3315.7 1214.0 L3307.1 1217.2 L3304.9 1213.6 L3303.7 1211.3 L3307.7 1207.1 L3309.4 1202.8 L3311.7 1200.9 L3305.4 1198.6 L3306.0 1191.3 L3310.6 1190.4 L3314.5 1189.9 L3313.4 1186.4 L3315.1 1182.5Z M3335.6 1192.3 L3338.2 1189.4 L3337.9 1192.3Z M3322.5 1154.7 L3327.6 1147.1 L3327.6 1151.5 L3324.2 1154.7Z M3324.8 1157.9 L3327.6 1156.3 L3329.9 1160.5 L3327.1 1162.1Z M3320.2 1156.8 L3321.9 1162.1 L3320.5 1163.1Z M3327.1 1167.3 L3330.5 1168.8 L3327.1 1170.4Z M3325.9 1175.0 L3328.8 1173.9 L3328.2 1177.5Z M3344.1 1140.5 L3347.0 1141.6 L3345.8 1143.3Z M3354.4 1123.5 L3357.2 1127.0 L3355.5 1131.6 L3353.8 1128.2Z M3321.9 1103.3 L3325.4 1104.5 L3324.2 1108.2Z M3411.8 1292.9 L3416.1 1288.2 L3417.2 1295.2 L3415.2 1300.5 L3413.0 1299.0Z M3409.5 1304.3 L3415.2 1301.7 L3418.7 1307.3 L3417.5 1316.9 L3414.1 1318.4 L3410.7 1316.9 L3411.3 1308.8Z M3433.7 1326.4 L3438.6 1324.2 L3445.4 1325.3 L3451.6 1323.5 L3448.8 1330.7 L3448.8 1335.0 L3444.8 1333.6 L3439.7 1330.7 L3434.6 1328.6Z M3496.9 1343.1 L3500.6 1342.7 L3505.1 1344.1 L3509.1 1344.5 L3512.5 1345.2 L3511.4 1346.9 L3503.4 1347.3 L3497.2 1345.2Z M3546.7 1346.6 L3550.1 1344.1 L3554.0 1344.1 L3559.5 1342.0 L3556.0 1346.6 L3554.0 1347.9 L3550.6 1349.7 L3547.2 1348.6Z M3376.3 1314.0 L3380.5 1311.4 L3382.5 1313.3 L3380.3 1316.2 L3378.3 1314.7Z M3384.5 1310.7 L3387.4 1311.8 L3385.7 1311.8Z M3369.7 1318.8 L3372.0 1317.7 L3371.4 1319.5Z M3493.7 1318.4 L3497.2 1320.2 L3500.6 1321.3 L3502.6 1325.7 L3500.6 1324.9 L3496.6 1322.1Z M3510.2 1316.2 L3513.7 1315.8 L3513.7 1318.4 L3511.4 1318.4Z M3510.2 1321.7 L3511.7 1323.5 L3510.8 1324.2Z M3520.5 1338.9 L3523.3 1336.7 L3522.8 1339.2 L3520.8 1340.6Z M3817.4 1504.0 L3819.7 1503.7 L3824.8 1510.6 L3828.0 1516.3 L3828.5 1520.9 L3824.8 1524.6 L3821.4 1525.8 L3818.6 1524.9 L3817.2 1520.1 L3816.6 1514.0 L3817.7 1508.6Z M4100.7 1359.3 L4104.7 1356.2 L4107.9 1354.2 L4112.1 1357.6 L4113.3 1361.7 L4111.6 1365.4 L4110.7 1368.7 L4108.7 1372.1 L4106.2 1373.7 L4104.2 1372.1 L4103.6 1367.4 L4104.7 1364.0 L4101.6 1362.7Z M4113.8 1358.3 L4118.1 1354.5 L4119.5 1353.1 L4125.5 1351.4 L4128.9 1352.4 L4128.9 1355.2 L4126.3 1358.9 L4122.7 1357.2 L4119.5 1362.3 L4117.2 1361.0 L4116.1 1358.6Z M4107.6 1354.2 L4110.4 1351.1 L4114.4 1347.6 L4117.8 1343.8 L4120.7 1342.7 L4126.3 1343.1 L4132.6 1342.7 L4136.6 1342.0 L4136.6 1338.5 L4140.0 1335.0 L4140.6 1331.8 L4142.3 1329.3 L4144.3 1329.3 L4142.3 1333.9 L4144.6 1334.6 L4149.7 1331.4 L4153.7 1326.4 L4156.5 1322.8 L4158.8 1318.4 L4157.6 1311.4 L4159.3 1308.8 L4161.1 1302.0 L4163.6 1304.3 L4165.0 1299.8 L4167.6 1300.5 L4167.9 1307.3 L4170.4 1313.6 L4169.0 1318.8 L4167.9 1323.5 L4165.0 1324.2 L4164.7 1332.8 L4162.8 1337.8 L4164.2 1342.0 L4161.6 1345.5 L4158.5 1347.6 L4158.2 1342.7 L4157.4 1345.9 L4154.5 1345.2 L4152.8 1349.7 L4152.5 1346.2 L4149.1 1349.7 L4144.6 1349.3 L4142.3 1349.7 L4141.4 1346.9 L4140.0 1349.7 L4141.7 1351.7 L4137.7 1353.8 L4135.2 1357.6 L4131.5 1354.5 L4131.8 1351.7 L4133.2 1349.3 L4128.6 1348.6 L4124.6 1350.4 L4120.7 1351.7 L4116.4 1351.4 L4114.4 1354.5 L4109.9 1354.2Z M4159.9 1300.1 L4163.6 1297.9 L4166.2 1297.5 L4164.7 1293.7 L4161.6 1292.1 L4168.4 1291.3 L4173.6 1294.0 L4177.8 1296.3 L4179.8 1291.3 L4184.4 1288.6 L4189.5 1286.7 L4192.3 1285.5 L4188.9 1282.8 L4189.8 1277.6 L4183.8 1280.4 L4178.4 1277.6 L4174.1 1272.8 L4170.4 1268.4 L4168.7 1269.2 L4169.0 1276.4 L4168.7 1280.8 L4166.7 1286.3 L4162.2 1285.5 L4161.1 1289.0 L4158.2 1293.7Z M4170.7 1265.1 L4171.3 1257.7 L4170.7 1251.8 L4171.9 1242.5 L4170.7 1237.3 L4171.3 1225.8 L4171.9 1218.6 L4169.0 1211.3 L4169.6 1200.0 L4172.4 1198.1 L4174.7 1189.4 L4176.4 1195.2 L4178.1 1204.7 L4178.1 1214.0 L4181.0 1227.6 L4183.2 1237.3 L4186.1 1242.1 L4181.0 1236.4 L4176.4 1236.4 L4174.1 1247.6 L4175.8 1253.5 L4179.3 1257.7 L4179.0 1263.9 L4175.3 1258.9 L4173.0 1258.9Z M4198.6 1276.4 L4209.4 1268.4 L4204.9 1270.8 L4199.2 1274.0Z M4190.1 1282.0 L4196.3 1276.4 L4192.9 1281.2Z M4245.8 1230.3 L4251.5 1223.6 L4247.5 1224.9Z M4292.5 1146.0 L4298.2 1139.4 L4295.9 1143.9Z M4305.0 1179.5 L4309.5 1185.5 L4307.3 1180.5Z M4051.3 1412.4 L4054.4 1410.9 L4056.9 1412.7 L4054.7 1419.0 L4053.0 1425.8 L4050.4 1432.0 L4047.3 1427.7 L4045.9 1424.6 L4046.7 1420.2 L4049.0 1416.5Z M3988.7 1442.9 L3993.8 1443.5 L3994.4 1446.0 L3991.5 1450.8 L3986.4 1454.4 L3981.3 1452.6 L3981.0 1448.4 L3984.1 1444.4Z M4080.6 1358.6 L4084.8 1357.2 L4083.1 1359.3Z M4049.0 1452.3 L4054.7 1453.5 L4058.1 1452.6 L4058.7 1459.8 L4056.9 1466.3 L4054.7 1468.9 L4054.1 1475.1 L4055.8 1478.7 L4060.4 1477.5 L4063.2 1480.4 L4067.8 1480.4 L4068.9 1485.1 L4068.9 1487.7 L4066.0 1485.7 L4062.6 1482.2 L4060.4 1483.9 L4055.8 1479.8 L4051.3 1481.0 L4049.0 1479.8 L4050.7 1476.3 L4048.4 1476.6 L4046.1 1474.0 L4045.0 1468.7 L4044.4 1465.4 L4047.3 1467.5 L4047.8 1463.3 L4047.8 1458.0Z M4047.3 1482.2 L4052.4 1482.8 L4054.4 1487.4 L4052.4 1489.8 L4049.8 1486.9Z M4029.6 1511.7 L4034.2 1507.1 L4038.5 1504.0 L4041.6 1499.6 L4043.9 1496.2 L4042.2 1494.4 L4039.9 1497.3 L4037.0 1501.9 L4032.5 1507.1Z M4056.4 1491.5 L4062.1 1493.3 L4063.5 1493.8 L4062.6 1497.0 L4060.1 1498.5 L4056.7 1499.9 L4056.9 1495.6Z M4063.2 1497.0 L4061.5 1499.6 L4059.2 1503.1 L4062.6 1508.0 L4064.3 1506.6 L4063.8 1502.5 L4065.5 1499.1Z M4068.3 1495.0 L4068.6 1499.1 L4066.3 1503.1 L4064.6 1505.7 L4064.6 1503.1 L4066.0 1499.6Z M4067.2 1502.8 L4070.0 1501.7 L4071.7 1503.7 L4069.5 1504.8 L4067.5 1504.5Z M4070.0 1488.0 L4075.7 1487.7 L4078.3 1496.7 L4074.0 1495.6 L4073.7 1492.4 L4071.2 1490.9Z M4070.3 1494.1 L4074.0 1495.3 L4074.3 1498.5 L4075.1 1501.4 L4073.2 1502.2 L4072.6 1500.2 L4071.7 1496.7Z M4063.8 1488.0 L4068.3 1488.0 L4066.0 1491.5Z M4057.2 1520.4 L4056.7 1517.5 L4058.7 1514.0 L4064.6 1510.3 L4067.2 1513.2 L4069.7 1512.3 L4072.0 1511.2 L4074.0 1508.3 L4076.9 1508.3 L4076.9 1503.7 L4080.8 1507.1 L4081.7 1512.9 L4083.1 1518.1 L4080.8 1523.8 L4078.0 1519.8 L4076.3 1522.6 L4078.0 1527.8 L4075.1 1525.5 L4071.7 1525.8 L4068.3 1522.6 L4069.5 1518.1 L4065.5 1516.9 L4065.2 1515.2 L4061.5 1516.9 L4058.7 1519.2Z M3986.7 1548.0 L3991.0 1550.0 L3994.9 1551.7 L3996.4 1546.0 L4000.6 1543.2 L4006.0 1540.9 L4011.1 1534.1 L4016.8 1531.2 L4020.0 1528.9 L4023.1 1525.5 L4027.1 1519.8 L4029.6 1522.6 L4032.5 1525.5 L4034.8 1526.6 L4041.3 1530.1 L4036.2 1531.2 L4037.6 1534.4 L4033.6 1535.5 L4031.9 1540.9 L4034.2 1547.2 L4039.6 1554.0 L4033.6 1554.6 L4031.3 1559.1 L4031.3 1564.3 L4027.6 1567.1 L4025.1 1572.2 L4023.9 1577.9 L4017.1 1583.0 L4014.3 1579.1 L4008.6 1578.5 L4002.9 1579.1 L3998.9 1579.6 L3994.4 1576.8 L3989.8 1576.2 L3988.7 1569.9 L3984.1 1564.3 L3983.6 1558.6 L3982.7 1554.6 L3984.7 1550.6Z M3905.1 1528.1 L3915.6 1530.1 L3920.4 1534.1 L3924.4 1538.1 L3930.9 1542.6 L3936.3 1547.2 L3940.3 1550.0 L3944.9 1552.9 L3948.9 1556.3 L3952.8 1559.7 L3951.7 1564.3 L3956.8 1565.7 L3959.7 1572.8 L3965.4 1576.5 L3965.9 1578.5 L3965.1 1583.6 L3965.4 1588.2 L3964.5 1593.0 L3961.9 1591.0 L3958.0 1593.0 L3954.0 1589.3 L3948.3 1584.8 L3944.6 1581.3 L3939.2 1574.5 L3936.3 1570.5 L3933.8 1565.1 L3930.1 1559.7 L3926.7 1555.7 L3925.0 1549.7 L3919.3 1546.6 L3915.9 1541.2 L3909.6 1536.1 L3906.2 1532.4Z M3961.4 1569.4 L3966.5 1568.8 L3969.9 1574.5 L3969.3 1576.8 L3965.4 1573.4Z M3975.0 1574.5 L3978.4 1575.1 L3977.9 1577.9 L3975.3 1577.3Z M3915.3 1551.7 L3919.3 1555.1 L3919.8 1556.6 L3916.4 1554.0Z M3923.8 1565.4 L3927.2 1568.8 L3926.1 1570.2Z M3907.9 1543.8 L3911.3 1546.0 L3909.0 1545.2Z M3965.9 1593.3 L3970.8 1594.2 L3976.7 1595.0 L3979.6 1595.6 L3981.3 1598.2 L3985.8 1598.8 L3991.0 1599.3 L3993.8 1596.2 L3996.6 1597.9 L4000.6 1599.0 L4004.6 1600.8 L4005.7 1603.3 L4011.4 1603.3 L4014.0 1604.2 L4013.7 1608.8 L4007.5 1607.1 L4004.0 1607.7 L3998.3 1607.4 L3994.4 1606.8 L3989.8 1605.1 L3984.7 1603.9 L3980.7 1603.6 L3975.6 1603.3 L3968.8 1601.9 L3968.8 1599.6 L3963.1 1598.8 L3964.8 1596.2Z M4004.0 1599.9 L4010.9 1599.0 L4012.0 1599.6 L4008.6 1600.8 L4004.3 1600.5Z M4014.0 1606.2 L4018.3 1605.6 L4021.1 1607.7 L4018.3 1610.0 L4014.8 1607.7Z M4022.0 1607.7 L4024.5 1606.5 L4026.8 1607.7 L4025.7 1610.5 L4022.2 1610.0Z M4027.1 1607.9 L4031.9 1606.5 L4035.9 1607.1 L4041.0 1608.2 L4039.3 1610.0 L4034.2 1610.2 L4030.2 1611.4 L4027.4 1611.1Z M4044.4 1607.7 L4050.1 1607.1 L4056.9 1607.9 L4062.6 1606.8 L4061.5 1608.8 L4054.7 1610.5 L4048.4 1610.0 L4044.4 1610.0Z M4039.9 1614.0 L4045.0 1613.1 L4050.4 1616.9 L4046.7 1618.6 L4041.6 1615.7Z M4065.5 1618.9 L4068.3 1613.1 L4074.6 1609.1 L4080.8 1608.2 L4087.1 1607.7 L4082.5 1611.1 L4075.1 1614.0 L4070.6 1617.7Z M4078.6 1604.5 L4084.3 1603.6 L4081.4 1605.4Z M4070.0 1606.5 L4074.6 1606.5 L4071.7 1607.9Z M4108.7 1602.5 L4112.1 1600.8 L4111.6 1605.4 L4109.3 1605.4Z M4126.3 1591.6 L4129.8 1593.3 L4129.2 1598.5 L4126.3 1597.9Z M4119.0 1589.9 L4120.4 1591.6 L4119.0 1593.6Z M4050.1 1552.3 L4053.5 1553.4 L4058.7 1554.0 L4063.2 1554.3 L4068.9 1554.0 L4073.2 1550.3 L4075.4 1551.2 L4071.7 1557.1 L4068.3 1557.4 L4063.2 1556.9 L4054.1 1556.9 L4047.8 1556.9 L4046.1 1560.8 L4046.4 1564.5 L4050.1 1567.7 L4054.7 1564.5 L4061.5 1564.8 L4065.2 1565.1 L4062.1 1568.8 L4058.1 1568.8 L4054.1 1571.1 L4056.9 1575.6 L4059.2 1578.5 L4060.4 1582.2 L4062.1 1584.8 L4058.7 1587.3 L4054.7 1587.0 L4054.7 1582.8 L4051.3 1576.8 L4050.7 1575.1 L4047.3 1576.2 L4047.8 1581.3 L4047.8 1585.9 L4047.3 1591.0 L4043.3 1591.6 L4042.2 1588.8 L4043.3 1582.5 L4042.2 1579.6 L4038.7 1576.8 L4039.3 1574.5 L4041.6 1570.5 L4042.2 1566.5 L4044.4 1563.7 L4044.7 1559.1 L4046.1 1555.4Z M4060.9 1585.9 L4063.8 1586.5 L4062.1 1591.6 L4060.4 1590.5Z M4058.7 1586.5 L4060.9 1587.6 L4059.8 1589.9Z M4061.5 1567.1 L4065.5 1567.1 L4063.8 1568.8Z M4070.6 1569.4 L4076.3 1569.9 L4081.4 1569.9 L4075.7 1570.8Z M4088.2 1554.0 L4090.5 1547.2 L4091.6 1551.7 L4095.1 1551.2 L4092.2 1555.1 L4096.2 1558.0 L4091.6 1557.4 L4093.4 1564.3 L4090.5 1561.4 L4089.4 1557.4Z M4092.2 1546.6 L4095.1 1546.0 L4093.9 1548.3Z M4087.1 1562.0 L4090.5 1563.7 L4088.2 1564.5Z M4087.7 1567.7 L4091.6 1568.2 L4089.4 1569.4Z M4080.0 1577.9 L4085.4 1577.3 L4086.5 1579.6 L4083.7 1581.6 L4080.3 1580.2Z M4090.5 1577.3 L4095.6 1575.9 L4101.3 1575.9 L4107.0 1578.5 L4104.7 1580.8 L4098.5 1579.1 L4092.2 1579.1Z M4104.2 1560.3 L4109.9 1560.6 L4107.0 1562.0Z M4100.7 1569.9 L4104.7 1569.9 L4103.0 1571.4Z M4134.3 1564.3 L4138.3 1565.4 L4136.6 1566.5Z M4133.7 1569.1 L4141.1 1569.7 L4137.7 1570.5Z M4109.6 1564.5 L4116.1 1562.0 L4121.8 1564.0 L4125.8 1564.5 L4126.3 1567.7 L4125.8 1573.4 L4128.6 1578.5 L4133.7 1578.8 L4138.9 1572.8 L4145.1 1568.8 L4152.2 1570.2 L4158.2 1573.1 L4163.3 1574.2 L4166.7 1575.1 L4174.1 1577.9 L4180.1 1579.9 L4184.9 1581.6 L4187.8 1584.8 L4192.3 1589.3 L4198.0 1593.0 L4202.6 1594.5 L4204.0 1597.6 L4199.2 1598.2 L4200.9 1602.5 L4204.9 1605.9 L4208.3 1610.5 L4212.3 1611.4 L4215.7 1614.9 L4221.1 1618.3 L4219.1 1620.6 L4215.1 1618.9 L4207.7 1617.7 L4200.0 1614.0 L4196.3 1610.5 L4193.5 1605.9 L4187.8 1604.2 L4183.8 1603.3 L4180.4 1605.9 L4178.1 1610.5 L4173.0 1612.3 L4165.0 1612.0 L4161.1 1607.7 L4155.4 1605.9 L4150.8 1607.4 L4146.3 1607.7 L4148.0 1602.5 L4153.1 1600.8 L4151.4 1595.0 L4148.5 1591.3 L4142.3 1587.6 L4136.0 1585.3 L4129.8 1583.0 L4123.5 1580.5 L4119.5 1583.0 L4116.1 1579.1 L4115.5 1576.5 L4120.7 1573.9 L4124.6 1572.8 L4118.4 1572.5 L4113.8 1571.6 L4108.7 1567.9Z M4206.6 1592.2 L4212.3 1591.0 L4217.4 1591.0 L4221.9 1588.2 L4225.3 1583.6 L4229.3 1584.2 L4227.6 1589.9 L4221.9 1593.3 L4216.2 1595.6 L4210.5 1595.0Z M4220.8 1574.5 L4226.5 1577.9 L4231.6 1582.5 L4233.9 1586.5 L4231.6 1585.9 L4227.6 1580.2 L4221.4 1575.6Z M4196.3 1571.1 L4201.4 1571.1 L4199.2 1572.2Z M4242.4 1590.5 L4247.0 1593.3 L4250.4 1598.5 L4246.4 1597.3 L4243.0 1593.3Z M4252.6 1597.3 L4258.3 1601.3 L4256.1 1601.3Z M4256.1 1605.4 L4261.2 1607.1 L4258.3 1608.2Z M4262.9 1602.5 L4272.0 1607.7 L4267.4 1606.5Z M4270.8 1612.8 L4277.7 1614.6 L4274.8 1616.0Z M4276.5 1607.7 L4281.1 1614.0 L4278.8 1612.8Z M4280.5 1618.6 L4286.2 1620.9 L4282.8 1620.9Z M4310.7 1644.3 L4314.1 1646.0 L4312.9 1649.6Z M4314.1 1651.9 L4316.9 1653.7 L4315.8 1654.9Z M4319.8 1661.4 L4321.5 1662.3 L4320.3 1662.6Z M4295.9 1676.5 L4303.8 1681.3 L4312.4 1688.0 L4310.7 1689.9 L4302.7 1685.0 L4297.0 1679.5Z M2323.5 1661.4 L2329.2 1660.2 L2330.9 1663.8 L2325.2 1665.0Z M4371.5 1661.4 L4377.2 1660.2 L4378.9 1663.8 L4373.2 1665.0Z M2331.5 1656.1 L2338.3 1653.7 L2335.5 1656.7Z M4379.5 1656.1 L4386.3 1653.7 L4383.5 1656.7Z M4008.0 1713.0 L4008.0 1700.4 L4010.3 1691.7 L4012.0 1686.8 L4013.1 1690.5 L4017.7 1685.6 L4027.4 1679.5 L4037.6 1677.7 L4045.6 1675.3 L4053.0 1671.0 L4058.1 1663.8 L4058.7 1658.5 L4062.1 1654.3 L4066.0 1659.6 L4067.8 1653.7 L4071.7 1648.4 L4076.9 1643.1 L4084.8 1639.0 L4089.9 1643.1 L4092.2 1646.6 L4098.5 1645.4 L4100.7 1639.0 L4104.2 1634.3 L4107.3 1630.8 L4111.0 1629.6 L4117.2 1629.1 L4113.8 1623.8 L4119.5 1625.6 L4126.3 1628.5 L4133.2 1629.3 L4141.7 1630.2 L4140.0 1636.1 L4136.0 1638.4 L4136.0 1644.3 L4133.2 1645.4 L4137.7 1650.2 L4144.0 1651.9 L4151.4 1656.7 L4157.1 1661.1 L4164.2 1660.8 L4167.3 1651.9 L4168.4 1643.1 L4168.4 1634.3 L4170.2 1631.4 L4171.3 1622.7 L4173.6 1620.9 L4175.8 1627.9 L4178.7 1634.3 L4181.5 1642.5 L4185.5 1641.3 L4189.5 1648.4 L4192.3 1657.3 L4194.0 1664.4 L4198.0 1671.3 L4206.6 1675.9 L4211.7 1682.8 L4215.1 1690.5 L4220.8 1695.4 L4224.2 1699.8 L4230.5 1705.4 L4235.0 1709.8 L4233.3 1738.7 L4011.4 1738.7Z M4104.2 1625.0 L4109.9 1624.1 L4110.4 1626.7 L4105.3 1627.3Z M4138.9 1639.0 L4142.0 1639.3 L4140.6 1641.9Z M4154.8 1654.9 L4158.2 1654.9 L4156.5 1656.4Z M3643.1 1628.2 L3646.8 1636.1 L3648.5 1642.5 L3650.2 1648.4 L3646.2 1649.0 L3645.6 1656.7 L3643.9 1664.4 L3641.1 1674.7 L3638.2 1683.2 L3635.7 1689.9 L3633.7 1697.9 L3630.8 1706.0 L3625.7 1708.5 L3619.8 1710.4 L3613.2 1706.7 L3611.2 1696.7 L3608.9 1689.3 L3612.1 1681.9 L3615.5 1677.1 L3614.9 1669.8 L3613.2 1663.2 L3615.8 1653.1 L3621.2 1651.6 L3626.9 1649.9 L3632.0 1645.4 L3635.4 1641.9 L3636.0 1637.2 L3640.5 1634.3 L3641.1 1630.8Z M3666.1 1487.7 L3670.1 1486.9 L3672.9 1487.7 L3669.5 1489.2Z M3585.9 1592.5 L3587.0 1593.3 L3587.6 1596.5 L3586.2 1595.6Z M3588.5 1587.6 L3589.6 1588.8 L3588.7 1590.8Z M3588.5 1603.9 L3589.9 1604.5 L3588.7 1605.4Z M3608.7 1625.0 L3610.4 1626.7 L3609.2 1627.9Z M3618.9 1632.5 L3620.3 1633.4 L3619.5 1634.3Z M3677.2 1681.3 L3680.3 1682.2 L3678.6 1684.1Z M3689.4 1675.9 L3691.7 1677.1 L3690.0 1678.9Z M3411.3 1538.4 L3413.5 1539.2 L3412.4 1541.2Z M3399.9 1557.7 L3401.3 1558.0 L3400.4 1559.4Z M3266.8 1391.4 L3271.0 1390.1 L3269.0 1393.3Z M3273.0 1393.7 L3275.3 1393.0 L3275.0 1395.3Z M3281.5 1393.0 L3284.1 1389.1 L3283.8 1392.4Z M3284.1 1387.8 L3286.4 1385.9 L3285.8 1387.5Z M3260.8 1388.8 L3261.9 1388.5 L3261.4 1390.4Z M3264.8 1362.0 L3267.9 1362.3 L3266.5 1363.0Z M3227.8 1471.9 L3229.5 1472.8 L3228.6 1474.0Z M3219.0 1460.9 L3220.7 1460.6 L3219.8 1461.8Z M3215.8 1326.8 L3219.8 1327.1 L3217.8 1327.8Z M3200.8 1322.1 L3203.3 1322.8 L3201.9 1322.8Z M3207.3 1320.2 L3209.0 1320.6 L3208.2 1321.0Z M2994.0 1365.4 L2995.1 1364.7 L2994.8 1365.4Z M3329.3 1341.3 L3332.7 1340.6 L3337.3 1345.5 L3340.7 1345.2 L3346.1 1344.8 L3351.5 1346.2 L3359.2 1342.0 L3363.5 1340.3 L3370.3 1336.4 L3380.3 1334.3 L3391.9 1334.6 L3402.2 1333.6 L3407.0 1333.2 L3412.7 1333.2 L3418.9 1330.7 L3421.5 1333.9 L3425.8 1332.5 L3423.2 1337.1 L3423.5 1341.3 L3425.8 1343.4 L3424.1 1348.6 L3420.4 1354.5 L3424.9 1356.5 L3428.6 1359.6 L3438.0 1361.3 L3448.8 1364.7 L3450.5 1370.7 L3457.3 1372.7 L3465.3 1376.0 L3472.1 1379.0 L3476.7 1375.4 L3477.0 1366.7 L3482.4 1362.3 L3488.9 1361.3 L3494.3 1363.3 L3499.4 1367.4 L3506.0 1370.4 L3517.9 1371.7 L3527.6 1375.0 L3533.0 1372.7 L3535.8 1371.1 L3539.8 1370.1 L3544.1 1370.7 L3546.7 1372.4 L3548.1 1381.0 L3546.9 1383.3 L3548.6 1387.2 L3551.2 1391.7 L3555.5 1398.5 L3556.3 1402.0 L3558.3 1406.4 L3561.4 1412.7 L3564.9 1419.6 L3565.4 1425.2 L3571.7 1430.1 L3573.4 1437.5 L3574.5 1446.0 L3576.2 1451.4 L3581.9 1455.6 L3584.8 1462.1 L3587.3 1469.8 L3592.2 1474.0 L3597.3 1479.3 L3601.8 1483.3 L3606.1 1485.1 L3608.7 1488.0 L3609.2 1491.2 L3605.2 1493.5 L3608.4 1493.3 L3610.4 1495.0 L3614.3 1499.1 L3618.9 1499.9 L3626.3 1498.2 L3633.1 1496.2 L3640.5 1495.3 L3649.1 1493.3 L3654.5 1491.8 L3653.6 1495.6 L3654.7 1499.9 L3651.9 1506.0 L3649.1 1511.7 L3646.2 1514.6 L3642.2 1520.9 L3638.8 1529.2 L3633.1 1535.8 L3625.7 1543.2 L3620.6 1548.0 L3614.9 1551.7 L3609.2 1556.9 L3604.7 1562.0 L3599.6 1569.4 L3595.6 1572.8 L3591.6 1577.3 L3588.7 1582.8 L3585.3 1588.5 L3583.6 1593.9 L3587.0 1598.5 L3587.0 1604.2 L3587.6 1610.8 L3589.3 1616.9 L3592.7 1619.2 L3593.9 1625.6 L3593.3 1633.7 L3594.4 1642.5 L3594.7 1647.2 L3589.9 1653.7 L3581.9 1659.1 L3574.0 1663.2 L3569.4 1668.9 L3562.0 1674.7 L3560.3 1679.5 L3562.6 1685.0 L3564.3 1689.3 L3564.9 1696.1 L3564.3 1701.7 L3556.3 1706.0 L3550.6 1708.5 L3548.9 1713.0 L3550.1 1719.3 L3544.9 1738.7 L3459.6 1738.7 L3449.4 1719.3 L3447.7 1709.8 L3445.4 1700.4 L3445.4 1693.0 L3442.0 1685.6 L3438.6 1678.3 L3434.6 1669.8 L3430.6 1663.8 L3429.7 1659.1 L3430.0 1650.7 L3432.3 1646.6 L3434.0 1639.6 L3439.1 1632.0 L3441.4 1625.6 L3441.1 1620.9 L3438.0 1614.6 L3437.4 1610.0 L3436.9 1604.2 L3434.0 1597.9 L3432.9 1594.5 L3431.7 1590.5 L3430.3 1587.0 L3426.0 1581.9 L3421.5 1576.8 L3416.9 1572.2 L3412.7 1563.7 L3415.8 1561.4 L3416.4 1556.9 L3417.2 1553.4 L3418.4 1549.2 L3418.9 1543.2 L3417.5 1537.8 L3414.1 1536.4 L3411.8 1533.5 L3408.4 1534.1 L3402.7 1534.6 L3397.6 1535.2 L3393.6 1530.1 L3390.8 1525.8 L3382.2 1523.2 L3376.6 1523.8 L3369.7 1524.9 L3366.9 1526.9 L3361.2 1528.4 L3355.8 1530.6 L3351.0 1532.6 L3345.8 1530.6 L3340.1 1529.8 L3334.5 1530.4 L3328.2 1531.5 L3323.1 1533.5 L3319.1 1534.9 L3311.7 1531.2 L3305.7 1526.1 L3301.5 1523.8 L3297.5 1520.4 L3291.8 1517.5 L3287.8 1512.9 L3287.5 1508.3 L3285.0 1505.4 L3280.4 1500.2 L3277.6 1496.7 L3274.2 1493.3 L3270.2 1490.9 L3267.6 1488.6 L3267.9 1482.8 L3267.3 1479.3 L3263.3 1475.1 L3266.2 1471.0 L3269.0 1467.5 L3270.2 1459.8 L3271.9 1454.4 L3269.6 1447.8 L3270.2 1441.1 L3265.9 1438.7 L3266.5 1433.2 L3270.2 1425.8 L3272.2 1420.9 L3277.6 1414.0 L3280.4 1405.8 L3286.1 1399.4 L3289.2 1394.0 L3298.0 1390.4 L3304.9 1384.6 L3308.0 1379.3 L3306.9 1376.4 L3307.1 1370.7 L3310.3 1365.4 L3314.5 1358.9 L3319.7 1356.5 L3323.9 1353.5 L3327.6 1346.2Z" fill="#d9d9d9" stroke="#d9d9d9" stroke-width="0.8" stroke-linejoin="round"/>
<path d="M3641.7 1261.0 L3647.3 1258.5 L3654.2 1256.9 L3661.0 1256.9 L3665.0 1261.0 L3664.4 1269.2 L3655.3 1270.8 L3653.0 1276.4 L3649.1 1277.2 L3654.7 1286.7 L3662.1 1291.3 L3661.6 1298.2 L3667.8 1295.2 L3674.1 1300.5 L3669.5 1305.1 L3663.8 1304.3 L3664.4 1311.8 L3669.0 1318.4 L3669.5 1327.1 L3669.5 1333.2 L3661.6 1335.0 L3653.0 1335.0 L3647.3 1330.0 L3641.7 1328.6 L3641.1 1322.8 L3641.7 1315.5 L3643.9 1309.5 L3649.1 1308.1 L3645.1 1304.3 L3640.5 1296.7 L3634.8 1288.2 L3632.6 1282.0 L3629.1 1276.4 L3631.4 1268.4 L3636.0 1263.5Z M3780.5 1270.0 L3785.0 1263.5 L3792.4 1258.5 L3800.9 1259.4 L3809.5 1258.5 L3813.5 1259.4 L3811.2 1261.8 L3802.7 1261.8 L3792.4 1262.7 L3787.3 1267.6 L3784.4 1273.2Z M3824.8 1264.3 L3828.8 1261.0 L3830.0 1264.3 L3826.5 1265.9Z M3836.8 1247.6 L3843.6 1245.9 L3841.9 1249.3Z M3796.4 1292.5 L3802.7 1290.2 L3808.3 1291.3 L3806.1 1294.4 L3799.8 1294.8Z M3952.8 1214.5 L3957.4 1210.8 L3963.6 1204.3 L3969.3 1198.6 L3975.0 1192.8 L3980.7 1184.0 L3984.7 1176.0 L3988.4 1176.0 L3987.3 1185.5 L3983.6 1195.2 L3977.9 1202.8 L3971.0 1208.5 L3965.4 1213.6 L3959.1 1217.2 L3954.0 1217.7Z M3940.9 1170.4 L3942.6 1173.4 L3944.9 1172.4 L3948.3 1177.5 L3945.4 1178.5 L3942.6 1181.5 L3944.9 1184.5 L3950.6 1190.4 L3952.8 1194.2 L3951.1 1194.7 L3947.1 1187.4 L3940.9 1183.5 L3941.5 1177.5 L3939.2 1174.4Z M2993.1 1193.3 L2997.7 1188.4 L3002.8 1191.3 L2998.8 1197.1Z M2970.4 1220.4 L2974.3 1215.9 L2976.6 1220.4 L2973.2 1223.1Z M4113.8 1275.6 L4117.2 1270.0 L4119.0 1274.0 L4116.1 1276.4Z M3538.7 1130.4 L3542.7 1131.0 L3550.1 1127.0 L3550.1 1117.7 L3542.1 1110.6 L3535.3 1114.2 L3533.0 1118.9 L3536.4 1124.7Z M3559.2 1117.7 L3564.9 1120.1 L3569.4 1114.2 L3567.7 1104.5 L3563.7 1097.1 L3558.6 1098.4 L3562.0 1105.7 L3559.7 1109.4Z M3516.5 1142.8 L3520.5 1142.8 L3521.6 1150.4 L3518.8 1152.5 L3517.6 1147.1Z M3433.4 1147.1 L3438.0 1138.3 L3442.5 1139.4 L3440.8 1146.0 L3435.7 1148.2Z M3443.1 1154.7 L3446.0 1144.9 L3447.7 1146.0 L3444.8 1154.7Z M3547.2 1039.2 L3553.5 1047.2 L3557.5 1053.6 L3560.9 1063.2 L3560.3 1070.0 L3561.4 1076.0 L3567.7 1081.9 L3573.4 1083.8 L3579.1 1082.5 L3576.2 1076.7 L3571.1 1070.7 L3572.8 1066.6 L3578.5 1071.4 L3584.8 1074.7 L3590.5 1074.7 L3593.3 1071.4 L3590.5 1064.6 L3592.7 1057.7 L3599.0 1052.1 L3603.0 1046.5 L3613.2 1040.7 L3613.2 1010.3 L3547.2 1010.3Z M2839.0 1258.1 L2846.3 1256.9 L2854.3 1256.0 L2862.3 1252.3 L2860.6 1256.5 L2865.7 1260.2 L2874.2 1258.5 L2879.9 1260.2 L2881.6 1256.0 L2879.9 1248.5 L2873.7 1246.8 L2870.8 1241.2 L2861.1 1239.5 L2855.5 1244.2 L2848.6 1250.2 L2843.5 1254.4Z M2864.6 1298.2 L2868.5 1297.9 L2871.9 1292.1 L2871.4 1282.8 L2873.1 1274.0 L2876.5 1271.6 L2879.3 1265.9 L2875.9 1263.9 L2870.2 1265.5 L2867.4 1267.6 L2862.8 1275.6 L2865.1 1275.6 L2868.0 1270.8 L2865.1 1278.8 L2863.4 1286.7 L2863.4 1293.7Z M2881.1 1265.5 L2887.3 1269.6 L2889.0 1277.2 L2885.6 1282.8 L2890.7 1280.0 L2893.9 1287.8 L2898.1 1285.1 L2898.1 1277.2 L2900.4 1270.8 L2904.4 1275.6 L2908.4 1274.0 L2907.2 1269.2 L2901.0 1264.3 L2893.0 1263.1 L2886.2 1263.1 L2883.3 1264.3Z M2888.4 1297.9 L2893.6 1300.5 L2898.7 1299.4 L2907.8 1294.4 L2914.0 1289.4 L2908.9 1289.4 L2900.4 1291.0 L2893.6 1295.6 L2890.2 1295.2Z M2908.9 1285.9 L2913.5 1285.9 L2921.4 1285.9 L2928.8 1283.5 L2928.3 1279.6 L2922.0 1280.8 L2914.6 1281.2 L2910.6 1283.2Z M2812.2 1226.7 L2815.1 1221.3 L2813.4 1212.2 L2809.4 1202.8 L2806.5 1194.7 L2799.7 1200.0 L2802.5 1207.5 L2807.7 1214.0 L2811.1 1223.1Z M2796.3 1214.9 L2792.3 1204.7 L2789.5 1200.9 L2794.0 1210.3Z M2804.3 1227.6 L2800.8 1219.5 L2796.9 1214.0 L2801.4 1224.9Z M2729.7 1145.5 L2740.0 1142.2 L2751.3 1140.5 L2760.4 1137.2 L2751.3 1135.5 L2740.0 1136.1 L2732.6 1140.5Z M2777.5 1169.3 L2783.8 1163.1 L2784.9 1152.5 L2780.9 1152.5 L2777.5 1161.0Z M2697.3 1118.9 L2707.0 1120.6 L2715.5 1116.5 L2722.9 1111.8 L2731.4 1103.3 L2741.7 1097.8 L2733.7 1095.3 L2722.3 1102.1 L2714.4 1104.5 L2712.1 1100.9 L2705.3 1098.4 L2705.8 1107.0 L2700.7 1111.8Z M2659.8 1068.7 L2671.7 1070.0 L2683.1 1063.2 L2693.3 1050.7 L2688.8 1041.4 L2678.0 1045.0 L2668.9 1040.7 L2658.0 1049.3 L2664.3 1056.3 L2652.4 1060.5Z M2956.1 1050.7 L2964.7 1045.0 L2963.0 1055.0Z M2954.4 1066.0 L2961.3 1067.3 L2959.0 1072.7Z M2857.2 1235.5 L2861.1 1234.7 L2862.3 1229.4 L2857.7 1228.5Z M2940.8 1226.7 L2945.9 1219.5 L2948.2 1219.5 L2943.1 1226.7Z M2476.0 1136.1 L2485.1 1132.7 L2486.8 1135.5 L2479.4 1138.3Z M3543.2 1565.4 L3543.8 1559.7 L3548.9 1558.0 L3555.8 1558.0 L3557.5 1562.0 L3556.3 1566.5 L3553.5 1571.1 L3550.1 1573.9 L3544.9 1573.9 L3543.8 1569.9Z M3529.6 1579.1 L3531.9 1585.3 L3530.7 1593.9 L3536.4 1601.9 L3539.8 1609.4 L3537.0 1608.2 L3533.0 1600.8 L3528.4 1592.8 L3528.4 1584.2Z M3555.8 1614.0 L3559.2 1619.8 L3559.7 1628.5 L3562.6 1637.2 L3562.6 1641.9 L3559.7 1641.3 L3558.6 1633.1 L3556.3 1625.6 L3555.8 1618.6Z M3567.1 1534.1 L3568.8 1539.2 L3571.1 1545.5 L3569.4 1544.9 L3567.1 1540.3Z M3535.8 1553.4 L3539.3 1549.5 L3541.0 1547.2 L3540.4 1550.0 L3537.5 1553.4Z M3527.3 1569.4 L3529.6 1569.9 L3528.4 1573.4 L3527.3 1572.2Z M3524.5 1608.8 L3528.4 1610.0 L3526.7 1613.4 L3524.5 1612.3Z M3549.5 1419.0 L3550.6 1422.1 L3546.7 1428.3 L3541.5 1431.4 L3544.9 1427.0 L3548.4 1422.7Z M2955.6 1497.3 L2958.4 1501.4 L2958.4 1506.0 L2954.4 1507.7 L2953.3 1503.7 L2953.9 1499.6Z M2964.7 1648.4 L2968.1 1649.6 L2971.5 1653.1 L2970.4 1654.9 L2965.8 1651.9Z M2874.2 1490.3 L2879.3 1495.6 L2880.5 1495.6 L2878.2 1492.1 L2875.9 1489.8Z" fill="#ffffff"/>
<path d="M2979.5 1556.9 L2990.3 1561.4 L2999.9 1565.4 L3007.3 1567.1 L3012.5 1569.4 L3017.6 1575.6 L3023.8 1579.1 M3036.4 1575.1 L3044.3 1572.2 L3051.1 1571.6 L3056.8 1571.1 L3064.2 1568.2 L3069.9 1565.4 L3073.9 1562.5 L3076.2 1559.7" fill="none" stroke="#ffffff" stroke-width="1.6" stroke-linejoin="round" stroke-linecap="round"/>
<path d="M2560.8 1000.6 L2560.8 1127.0 L2571.0 1129.3 L2580.7 1142.8 L2586.4 1136.6 L2592.1 1132.7 L2595.5 1138.3 L2600.6 1143.9 L2604.0 1148.2 L2612.0 1163.1 L2610.3 1167.3 L2614.2 1167.3 L2623.3 1174.4 L2622.2 1183.5 L2619.4 1186.4 M2661.5 1239.0 L2821.6 1239.0 L2821.6 1235.5 L2824.7 1241.6 L2831.0 1242.9 L2839.5 1245.1 L2846.3 1246.8 L2853.2 1247.6 L2860.0 1245.1 L2879.9 1256.9 L2882.2 1260.6 L2887.3 1263.5 L2893.6 1269.6 L2894.1 1288.2 L2890.2 1295.2 L2893.6 1298.2 L2913.5 1289.8 L2912.9 1285.1 L2926.0 1283.5 L2928.8 1278.8 L2937.9 1272.4 L2956.1 1272.4 L2960.1 1269.2 L2963.0 1262.7 L2969.2 1252.3 L2974.3 1253.1 L2977.2 1255.6 L2977.2 1266.8 L2979.5 1270.8 L2981.7 1273.2 M2696.7 1364.0 L2710.4 1362.7 L2709.8 1364.0 L2731.4 1371.9 L2747.4 1371.9 L2747.4 1368.9 L2757.0 1368.9 L2765.6 1376.4 L2769.0 1383.3 L2776.4 1387.2 L2780.4 1382.0 L2786.0 1382.3 L2792.3 1391.7 L2796.9 1396.9 L2799.1 1403.9 L2810.2 1406.8 M2838.4 1476.0 L2838.4 1471.6 L2841.2 1467.2 L2848.6 1466.9 L2848.6 1465.1 L2842.9 1460.0 L2845.2 1460.0 L2845.2 1456.8 L2855.7 1456.8 L2855.7 1455.9 L2860.6 1452.6 M2855.7 1456.8 L2855.5 1468.1 L2857.2 1468.1 M2861.1 1469.2 L2855.5 1474.0 L2854.6 1476.9 L2850.3 1480.7 M2854.6 1476.9 L2859.4 1479.3 L2863.4 1482.8 M2865.7 1485.1 L2869.7 1483.3 L2873.7 1479.3 L2879.3 1475.7 L2885.0 1474.8 L2889.6 1473.4 M2875.4 1496.2 L2881.1 1496.7 L2886.7 1497.3 M2891.3 1513.8 L2891.3 1508.9 L2893.0 1505.1 M2919.7 1518.6 L2922.9 1510.2 M2954.7 1445.4 L2955.0 1452.0 L2954.7 1455.3 M2957.0 1491.8 L2951.6 1496.2 L2947.6 1503.7 L2951.0 1511.7 L2953.3 1519.8 L2964.1 1519.8 L2968.1 1524.9 L2978.9 1524.4 L2977.2 1534.1 L2980.0 1540.3 L2977.2 1543.8 L2981.7 1552.9 M2981.7 1552.9 L2965.8 1550.0 L2965.8 1553.4 L2969.2 1554.0 L2968.1 1566.0 L2965.0 1583.6 M2914.6 1551.5 L2920.9 1555.1 L2928.8 1557.4 L2934.5 1560.3 M2934.5 1560.3 L2937.4 1560.8 L2944.2 1567.1 L2948.2 1573.4 L2955.0 1572.2 L2963.0 1573.9 L2965.0 1583.6 M2906.1 1579.1 L2905.5 1584.8 L2910.1 1585.3 L2913.5 1588.2 L2917.5 1579.1 L2920.3 1576.8 L2927.1 1574.5 L2932.8 1568.2 L2934.5 1560.3 M2965.0 1583.6 L2960.1 1583.6 L2948.2 1589.3 L2946.5 1593.9 L2943.1 1599.0 L2941.9 1602.5 L2947.6 1611.1 L2952.2 1616.9 L2961.3 1614.0 L2961.3 1622.7 L2967.0 1622.4 M2967.0 1622.4 L2972.1 1631.4 L2970.4 1638.4 L2968.1 1644.8 L2969.2 1647.8 L2968.7 1651.3 L2970.4 1653.1 L2967.0 1659.6 L2967.5 1660.8 L2962.4 1665.9 M2967.5 1660.8 L2970.4 1669.8 L2973.2 1675.3 L2973.2 1681.9 L2974.9 1685.6 L2976.6 1693.0 M2967.0 1622.4 L2974.3 1622.7 L2984.0 1616.3 L2990.8 1615.1 L2991.4 1625.6 L2996.5 1631.4 L3005.6 1634.3 L3011.3 1637.2 L3018.7 1639.0 L3020.4 1653.7 L3030.7 1653.7 L3031.2 1659.6 L3035.8 1665.0 L3032.4 1674.7 L3031.8 1677.1 M3031.8 1677.1 L3026.7 1671.6 L3011.9 1673.4 L3006.8 1689.6 M3006.8 1689.6 L2997.1 1693.0 L2992.0 1688.7 L2985.7 1686.8 L2980.6 1693.0 L2976.6 1693.0 M2976.6 1693.0 L2981.7 1694.2 L2980.0 1700.4 L2973.2 1703.5 L2973.8 1713.0 L2970.4 1722.5 M3031.8 1677.1 L3033.5 1688.7 L3045.5 1689.9 L3047.7 1700.4 L3054.0 1700.4 L3052.3 1709.8 L3052.3 1719.3 M3006.8 1689.6 L3015.9 1699.2 L3027.3 1704.2 L3035.2 1709.2 L3029.5 1720.6 M2981.7 1552.9 L2985.7 1555.4 L2990.3 1554.6 L2998.8 1550.6 L2998.8 1545.5 L3002.2 1547.2 L2997.7 1539.2 L2995.4 1536.4 L3005.1 1539.2 L3006.2 1536.9 L3015.9 1534.1 L3018.2 1531.5 L3017.6 1530.1 M3017.6 1530.1 L3021.6 1531.2 L3023.8 1537.5 L3022.7 1546.6 L3027.3 1552.0 L3032.9 1551.2 L3036.9 1548.6 L3041.5 1548.9 M3041.5 1548.9 L3044.9 1548.3 L3044.9 1545.5 L3052.3 1546.6 L3056.8 1546.6 L3062.0 1547.2 L3067.1 1540.9 L3069.1 1536.4 M3055.7 1527.2 L3053.4 1531.2 L3053.4 1536.9 L3055.7 1539.8 L3052.3 1546.6 M3312.6 1296.7 L3316.3 1295.2 L3316.8 1297.5 L3325.4 1296.3 L3327.6 1299.0 L3323.6 1303.5 L3323.9 1311.0 L3320.2 1313.6 L3323.1 1317.7 L3321.4 1322.8 L3323.1 1324.2 L3320.2 1329.3 L3320.8 1331.4 M3352.7 1285.5 L3358.9 1289.0 L3366.9 1290.6 L3373.1 1292.9 L3380.8 1292.5 M3377.4 1220.4 L3381.1 1225.8 L3386.8 1229.4 L3390.5 1232.0 L3395.9 1234.2 L3399.3 1234.7 L3402.7 1237.3 L3409.5 1239.0 L3406.1 1247.6 L3406.1 1251.0 L3402.2 1253.5 L3397.6 1261.0 L3397.0 1263.1 L3401.6 1261.0 L3403.0 1265.1 L3401.6 1271.6 L3402.7 1278.0 L3406.7 1279.6 L3405.6 1282.0 M3382.2 1218.1 L3387.4 1218.1 L3391.3 1217.2 L3396.2 1220.0 L3395.3 1223.1 L3397.0 1223.6 M3403.9 1200.0 L3403.0 1206.6 L3401.0 1207.5 L3401.6 1212.6 L3397.0 1214.0 L3398.2 1217.7 L3397.0 1223.6 L3399.3 1227.2 L3397.6 1229.4 L3399.9 1232.0 L3399.3 1234.7 M3397.6 1229.4 L3395.6 1232.0 L3395.9 1234.2 M3412.1 1184.5 L3416.4 1185.5 M3444.0 1194.2 L3444.8 1200.9 L3443.1 1204.3 L3446.2 1206.6 L3446.8 1211.7 L3447.9 1217.7 L3447.1 1222.7 M3447.1 1222.7 L3444.3 1221.3 L3436.9 1226.3 L3431.7 1227.6 L3434.0 1232.9 L3441.4 1241.2 M3441.4 1241.2 L3436.9 1245.5 L3435.7 1250.6 L3436.9 1251.8 L3432.3 1250.6 L3425.5 1252.7 L3422.3 1251.4 L3417.5 1251.8 L3411.8 1250.2 L3406.1 1251.0 M3417.5 1251.8 L3416.9 1255.6 L3422.3 1256.9 M3403.0 1265.1 L3407.8 1265.1 L3411.0 1261.0 L3414.1 1265.5 L3415.8 1260.6 L3420.4 1262.2 L3422.3 1256.9 L3425.5 1258.1 L3432.3 1255.6 L3433.7 1258.5 L3440.8 1260.2 L3440.3 1265.9 L3441.4 1267.6 M3440.8 1260.2 L3446.0 1261.0 L3451.9 1258.5 L3454.5 1257.3 L3456.8 1252.7 L3460.2 1250.2 L3460.5 1247.6 M3441.4 1241.2 L3446.5 1242.5 L3448.2 1239.0 L3454.5 1241.2 L3459.3 1242.5 L3460.5 1247.6 M3447.1 1222.7 L3450.5 1223.1 L3455.6 1224.5 L3455.1 1226.7 L3459.0 1226.7 L3463.6 1227.6 L3465.3 1230.3 L3470.1 1234.7 M3470.1 1234.7 L3465.9 1238.2 L3460.7 1240.3 L3459.3 1242.5 M3470.1 1234.7 L3473.8 1233.8 L3477.2 1237.3 L3482.4 1235.5 L3491.2 1238.2 M3460.5 1247.6 L3464.7 1249.7 L3469.9 1249.3 L3476.1 1246.3 L3479.5 1243.3 L3486.3 1244.6 L3488.9 1244.2 L3491.2 1238.2 M3491.2 1238.2 L3492.0 1233.8 L3500.0 1223.1 L3497.2 1216.8 L3497.7 1211.3 L3494.9 1209.4 L3498.9 1205.7 L3496.6 1193.8 L3492.6 1189.9 L3475.5 1188.9 M3492.6 1189.9 L3492.6 1184.5 L3484.1 1181.0 M3496.6 1193.8 L3501.7 1194.2 L3509.7 1190.4 L3508.5 1185.5 L3514.2 1180.5 L3514.2 1177.0 M3482.7 1172.4 L3488.6 1169.3 L3504.6 1169.3 L3510.8 1173.9 L3514.2 1177.0 L3519.9 1175.5 L3523.0 1171.9 M3501.4 1153.6 L3506.8 1152.5 L3510.8 1154.7 L3518.5 1157.3 M3523.0 1171.9 L3521.3 1160.0 L3518.5 1157.3 L3521.1 1154.1 L3518.8 1144.9 L3522.2 1136.6 M3521.1 1124.1 L3529.6 1115.3 L3540.4 1100.9 L3542.7 1095.9 L3533.6 1085.1 L3536.4 1079.3 L3531.3 1070.0 L3534.1 1059.1 L3527.9 1042.1 L3533.6 1025.8 M3500.3 1057.7 L3497.4 1050.7 L3498.9 1033.3 M3428.0 1141.6 L3430.0 1132.7 L3434.0 1128.2 L3432.3 1118.9 L3436.3 1114.8 L3432.3 1110.6 L3431.7 1094.6 L3435.1 1081.9 L3443.1 1075.3 L3440.8 1074.0 L3445.4 1064.6 L3445.4 1053.6 L3451.1 1047.9 L3453.9 1033.3 M3488.9 1244.2 L3493.2 1248.0 L3483.5 1261.8 L3478.1 1263.5 L3471.0 1265.1 L3470.1 1265.1 L3463.0 1265.1 L3457.3 1260.6 L3454.5 1257.3 M3440.3 1268.8 L3446.0 1267.2 L3449.9 1268.8 L3452.2 1262.7 L3457.3 1260.6 M3471.0 1273.6 L3459.3 1270.4 L3452.5 1270.8 L3455.1 1278.8 L3463.0 1287.5 L3467.9 1291.7 M3470.1 1265.1 L3473.3 1270.8 L3471.0 1273.6 L3473.3 1278.8 L3474.4 1283.5 L3472.1 1284.3 L3469.3 1286.7 L3467.9 1291.7 M3478.1 1263.5 L3484.6 1270.8 L3484.6 1274.4 L3490.9 1274.8 L3492.0 1278.8 L3490.3 1282.0 L3493.7 1286.7 L3490.3 1293.7 L3485.8 1294.0 L3480.1 1296.7 M3472.1 1284.3 L3478.4 1289.4 L3477.2 1291.7 L3473.3 1297.1 M3477.2 1291.7 L3480.1 1296.7 L3479.5 1302.0 L3482.4 1304.7 L3480.7 1308.8 L3476.7 1313.3 M3482.4 1304.7 L3488.1 1302.4 L3493.2 1300.9 L3502.3 1299.4 L3506.8 1301.7 L3512.8 1298.2 L3518.8 1295.2 L3522.2 1296.1 M3490.3 1293.7 L3493.7 1298.2 L3493.2 1300.9 M3512.8 1298.2 L3514.2 1300.9 L3511.1 1305.4 M3492.0 1278.8 L3493.7 1282.0 L3507.4 1283.2 L3516.5 1279.6 L3525.6 1282.4 M3493.2 1248.0 L3504.6 1249.7 L3514.2 1245.5 L3520.8 1253.5 L3523.3 1260.2 L3523.3 1268.8 L3531.6 1269.6 M3514.2 1245.5 L3521.1 1243.8 L3528.7 1248.0 L3534.1 1261.0 L3527.6 1264.3 L3523.3 1268.8 M3497.2 1216.8 L3508.0 1213.1 L3521.6 1215.9 L3536.7 1218.6 L3539.0 1211.7 M3539.0 1211.7 L3543.8 1211.3 L3541.0 1201.9 L3548.9 1199.0 L3538.1 1185.5 L3539.3 1183.5 L3538.7 1177.5 L3523.0 1171.9 M3543.8 1211.3 L3555.2 1208.9 L3558.6 1214.5 L3564.9 1226.7 L3576.2 1227.2 L3579.6 1231.2 L3591.0 1233.8 L3589.3 1239.9 L3589.9 1248.9 L3580.8 1251.0 L3580.2 1255.2 M3599.3 1299.8 L3605.2 1299.0 L3610.1 1302.8 L3611.5 1310.3 L3617.8 1313.3 L3615.5 1315.5 L3613.5 1318.4 L3614.9 1322.8 L3617.8 1331.4 L3607.5 1330.3 L3603.8 1332.1 L3595.0 1332.1 L3583.1 1335.0 L3573.4 1335.3 L3571.7 1338.5 L3568.8 1340.3 L3567.1 1340.6 M3590.5 1285.1 L3604.7 1286.7 L3612.1 1291.3 L3620.0 1290.6 L3627.1 1296.7 L3632.0 1301.3 L3635.4 1302.0 L3639.4 1297.1 M3627.1 1296.7 L3625.7 1302.0 L3618.9 1301.7 L3610.1 1302.8 M3618.9 1301.7 L3622.3 1305.1 L3624.0 1309.5 L3627.4 1314.7 L3627.4 1319.1 M3617.8 1313.3 L3621.7 1318.4 L3627.4 1319.1 L3636.0 1313.3 L3637.7 1315.5 L3636.0 1319.9 L3641.1 1322.4 M3603.8 1332.1 L3597.3 1337.1 L3598.4 1342.7 L3596.1 1351.1 L3583.6 1357.9 L3572.3 1365.4 L3566.0 1362.7 M3567.4 1349.3 L3571.1 1352.4 L3567.1 1357.9 L3565.4 1358.9 L3562.6 1360.0 M3565.4 1358.9 L3565.4 1362.7 L3565.1 1370.7 L3562.0 1383.6 M3557.7 1372.1 L3561.4 1383.9 M3562.0 1384.9 L3568.3 1385.9 L3576.2 1380.7 L3579.1 1377.4 L3573.4 1370.7 L3584.8 1367.4 L3585.9 1366.4 L3583.6 1357.9 M3585.9 1366.4 L3592.7 1367.7 L3602.4 1373.4 L3617.2 1385.9 L3627.7 1386.5 L3632.8 1390.1 L3638.2 1390.1 M3627.7 1386.5 L3632.6 1380.7 L3635.7 1380.7 M3617.8 1331.8 L3621.2 1339.9 L3625.7 1342.0 L3622.3 1349.7 L3621.2 1353.8 L3625.2 1360.6 L3632.6 1364.4 L3635.1 1368.7 L3634.3 1374.1 L3636.0 1377.4 L3639.1 1381.0 M3606.4 1465.1 L3608.7 1459.8 L3614.3 1459.2 L3628.6 1460.0 L3633.1 1460.9 L3637.1 1454.4 L3642.2 1452.0 L3658.7 1449.6 L3675.8 1443.5 L3679.8 1431.4 L3676.9 1427.0 L3662.1 1425.5 L3656.4 1418.4 M3676.9 1427.0 L3680.3 1417.7 L3683.8 1413.4 M3658.7 1449.6 L3665.0 1463.6 M3652.2 1414.3 L3655.3 1415.2 M3669.5 1330.3 L3674.7 1330.0 L3678.6 1325.7 L3688.3 1323.9 L3695.1 1328.2 L3700.8 1329.3 L3706.5 1335.3 L3710.8 1335.3 L3711.1 1342.4 L3710.5 1348.3 L3707.1 1353.1 L3709.4 1357.2 L3707.6 1360.6 L3708.8 1370.7 L3714.5 1371.4 L3714.5 1375.0 L3709.1 1381.6 L3714.5 1389.8 L3720.2 1392.1 L3720.2 1398.8 L3723.0 1399.4 L3722.4 1402.3 L3714.8 1405.2 L3713.3 1411.5 M3709.1 1381.6 L3718.5 1384.6 L3740.1 1381.6 L3740.6 1374.7 L3748.6 1371.4 L3757.1 1368.0 L3758.3 1360.6 L3762.8 1358.6 L3760.6 1353.8 L3767.4 1353.5 L3770.2 1345.5 L3767.9 1339.9 L3775.3 1333.9 L3786.7 1332.5 L3789.0 1331.1 M3711.1 1342.4 L3717.3 1345.2 L3721.9 1341.0 L3729.8 1337.8 L3731.5 1332.1 L3736.1 1330.7 L3741.5 1330.3 L3748.6 1331.4 L3749.7 1332.8 L3757.1 1332.1 L3762.3 1328.6 L3762.8 1325.7 L3768.5 1323.5 L3770.2 1326.4 L3770.2 1335.0 L3775.9 1332.8 L3782.7 1330.0 L3789.0 1331.1 M3741.5 1330.3 L3741.2 1325.7 L3728.1 1318.8 L3717.9 1311.0 L3715.0 1302.8 L3704.8 1300.5 L3704.2 1294.4 L3696.3 1289.8 L3691.7 1294.4 L3687.2 1301.3 L3681.5 1301.3 L3678.6 1301.3 L3675.2 1296.0 L3670.7 1293.7 L3664.4 1295.2 L3661.3 1297.9 M3681.5 1301.3 L3681.5 1272.4 L3696.3 1267.6 L3710.5 1277.2 L3732.1 1282.8 L3738.9 1288.2 L3738.4 1292.9 L3741.2 1296.0 L3742.3 1302.0 L3749.7 1303.5 L3750.3 1306.6 L3753.2 1305.8 L3756.0 1300.5 L3762.3 1295.2 L3766.8 1293.7 L3768.5 1289.8 L3781.0 1292.9 L3781.6 1288.2 L3787.9 1285.9 L3794.1 1289.0 L3813.5 1289.8 L3819.1 1294.4 M3766.8 1293.7 L3764.5 1299.8 L3770.8 1299.8 L3778.8 1304.7 L3772.5 1307.3 L3764.0 1308.4 L3764.5 1303.5 L3757.1 1305.1 L3756.6 1309.5 L3765.1 1312.5 L3757.1 1314.4 L3766.8 1315.5 L3781.6 1315.1 L3782.7 1314.7 M3757.1 1314.4 L3752.6 1314.7 L3746.3 1316.2 L3751.5 1323.5 L3748.6 1331.4 M3782.7 1314.7 L3781.6 1318.4 L3789.0 1322.8 L3789.0 1331.1 M3819.1 1294.4 L3808.9 1300.5 L3800.4 1303.5 L3797.0 1308.1 L3789.0 1307.3 L3782.7 1311.8 L3782.7 1314.7 M3819.1 1294.4 L3819.7 1288.2 L3822.6 1286.7 L3820.3 1275.6 L3831.1 1268.0 L3832.8 1269.2 L3835.1 1254.4 L3849.3 1255.2 L3850.4 1244.2 L3857.8 1238.2 L3859.8 1238.2 M3859.8 1238.2 L3847.6 1233.8 L3840.2 1222.2 L3818.6 1223.1 L3806.1 1200.0 L3798.1 1193.3 L3780.5 1198.1 L3782.2 1192.3 L3767.9 1191.3 L3766.8 1182.5 L3755.4 1179.5 L3733.8 1190.4 L3711.1 1194.2 L3709.9 1209.4 L3704.2 1221.3 L3713.3 1219.1 L3696.3 1221.3 L3684.3 1220.9 L3672.9 1224.9 L3661.0 1214.9 L3651.9 1214.9 L3639.9 1224.9 L3632.0 1227.6 L3629.1 1244.2 L3636.5 1250.2 L3641.1 1258.9 L3642.8 1261.8 M3859.8 1238.2 L3863.5 1237.3 L3873.2 1231.2 L3888.0 1223.1 L3899.4 1225.8 L3916.4 1232.5 L3922.1 1225.8 L3919.3 1221.3 L3925.5 1211.3 L3944.3 1218.6 L3944.9 1224.9 L3960.2 1227.2 L3971.6 1228.5 L3980.7 1236.4 L3993.2 1237.7 L4006.3 1233.8 L4013.1 1228.1 L4026.8 1231.6 M3859.8 1238.2 L3862.4 1242.9 L3866.9 1245.9 L3874.9 1248.5 L3880.6 1259.4 L3880.0 1270.8 L3894.8 1272.8 L3905.6 1278.0 L3911.3 1290.2 L3928.9 1291.7 L3942.0 1292.1 L3959.7 1298.6 L3971.6 1296.7 L3984.7 1292.5 L3998.9 1282.8 L3999.5 1272.0 L4009.2 1274.4 L4022.5 1266.8 L4026.2 1261.8 L4035.9 1258.1 L4045.0 1258.1 L4037.0 1248.0 L4022.2 1250.2 L4020.0 1246.3 L4026.8 1231.6 M4026.8 1231.6 L4033.1 1234.7 L4044.4 1229.4 L4045.6 1215.9 L4049.5 1207.1 L4066.0 1197.6 L4077.4 1202.4 L4088.8 1232.0 L4106.4 1239.9 L4108.1 1250.2 L4129.2 1244.6 L4120.1 1271.6 L4109.9 1280.0 L4108.7 1289.0 L4105.9 1292.5 L4101.9 1288.6 L4096.8 1296.0 L4091.1 1296.0 L4084.8 1297.5 L4070.6 1311.0 M4083.7 1327.1 L4086.0 1323.5 L4093.1 1321.3 M3977.3 1434.1 L3969.9 1431.4 L3969.3 1425.8 L3961.9 1423.3 L3954.0 1428.0 L3946.0 1426.7 L3944.0 1428.9 L3941.5 1436.6 L3938.3 1434.1 L3932.4 1434.4 L3927.2 1430.4 L3928.9 1425.2 L3924.4 1419.0 L3917.9 1419.6 L3918.7 1412.7 L3924.4 1407.1 L3924.4 1396.9 L3916.7 1392.4 M3823.7 1379.3 L3830.0 1378.7 L3840.8 1385.9 L3850.4 1391.4 L3854.7 1394.3 L3864.1 1394.3 L3863.8 1403.9 L3851.6 1402.6 L3844.7 1398.8 L3836.8 1397.8 L3825.4 1392.7 L3818.6 1388.5 L3823.7 1379.3 M3868.6 1398.2 L3873.8 1392.4 L3884.0 1394.3 L3886.8 1401.0 L3877.2 1401.0 L3869.2 1401.4 L3868.6 1398.2 M3750.9 1420.9 L3754.3 1417.1 L3766.8 1416.5 L3761.7 1407.1 L3762.8 1394.3 L3772.5 1393.7 L3783.3 1380.7 L3787.3 1373.4 L3786.7 1367.4 L3791.8 1365.4 M3869.2 1432.0 L3868.6 1424.0 L3864.1 1415.9 L3865.8 1411.5 L3864.1 1403.9 L3873.2 1405.2 L3874.0 1410.9 L3888.6 1412.7 L3887.4 1417.7 L3881.7 1418.4 L3882.3 1425.2 L3888.0 1424.0 L3889.7 1435.6 L3888.3 1439.3 M3889.7 1435.6 L3893.1 1430.1 L3893.7 1419.0 L3901.1 1411.5 L3904.5 1402.0 L3914.7 1395.6 L3916.7 1392.4 M3938.3 1434.1 L3932.4 1441.4 L3926.1 1444.7 L3919.3 1452.0 L3916.7 1452.3 L3925.5 1465.1 L3921.5 1472.8 L3927.2 1483.9 L3929.8 1492.1 L3924.7 1500.2 L3923.5 1502.5 M3932.4 1441.4 L3934.9 1446.6 L3938.9 1446.3 L3937.5 1456.2 L3943.7 1454.4 L3947.1 1456.5 L3954.3 1453.8 L3958.8 1458.6 L3959.1 1465.1 L3963.6 1469.2 L3963.1 1476.9 L3959.1 1476.9 L3948.9 1477.8 L3946.0 1481.6 L3945.2 1482.2 L3948.3 1492.7 M3932.4 1522.9 L3936.3 1523.8 L3938.0 1527.2 L3942.0 1526.6 L3943.7 1524.1 M3944.0 1428.9 L3948.3 1433.5 L3954.0 1438.4 L3959.7 1442.3 L3954.5 1446.6 L3961.4 1452.0 L3969.3 1461.8 L3975.0 1470.4 L3974.7 1475.1 L3965.9 1479.5 L3963.1 1476.9 M3974.7 1475.1 L3974.5 1488.6 L3965.4 1492.7 L3964.8 1496.7 L3960.8 1497.0 L3957.1 1500.2 M3986.7 1548.0 L3988.1 1552.3 L3992.1 1554.6 L3998.9 1554.0 L4002.9 1551.2 L4010.9 1551.7 L4016.0 1548.3 L4017.7 1543.2 L4020.5 1540.3 L4022.2 1534.9 L4031.9 1536.1 M4165.0 1574.5 L4165.0 1612.0 M4073.7 1610.8 L4074.6 1613.7 M3350.4 1346.2 L3353.2 1350.4 L3353.2 1358.6 L3356.1 1366.7 L3342.4 1369.4 L3341.9 1374.7 L3333.3 1381.3 L3313.6 1389.1 L3313.6 1398.2 L3335.6 1412.7 L3369.4 1436.9 L3369.7 1439.3 L3381.1 1444.7 L3381.7 1449.6 L3387.1 1448.7 L3395.9 1446.9 L3431.2 1422.1 L3419.8 1415.9 L3416.4 1405.2 L3419.2 1403.3 L3419.2 1391.7 L3416.9 1379.3 L3414.7 1366.7 L3405.6 1355.2 L3410.1 1349.0 L3410.1 1339.9 L3411.8 1333.6 M3313.6 1398.2 L3313.6 1406.4 L3294.6 1406.4 L3294.6 1422.4 L3288.9 1425.2 L3288.4 1435.5 L3266.5 1435.5 M3335.6 1412.7 L3325.4 1412.7 L3331.6 1470.4 L3310.0 1470.4 L3302.0 1471.0 L3297.5 1469.8 L3293.5 1474.8 L3286.7 1466.9 L3279.8 1463.6 L3270.2 1464.5 L3269.0 1467.2 M3416.9 1379.3 L3421.5 1374.7 L3421.5 1369.4 L3428.3 1364.7 L3428.6 1359.6 M3506.0 1369.7 L3504.3 1377.4 L3505.1 1385.9 L3505.1 1443.5 L3499.4 1443.5 L3499.4 1469.2 L3493.2 1469.2 L3488.1 1486.9 L3493.2 1494.4 L3493.2 1497.3 L3497.7 1503.1 L3496.6 1510.0 L3500.6 1510.0 M3499.4 1446.6 L3453.9 1422.4 L3448.2 1425.2 L3443.7 1427.7 L3431.2 1422.1 M3505.1 1431.4 L3572.8 1431.4 M3500.6 1510.0 L3505.7 1500.8 L3513.7 1505.4 L3521.6 1504.8 L3527.9 1504.3 L3531.3 1501.9 L3541.0 1503.7 L3547.2 1492.7 L3551.8 1489.8 L3551.2 1498.5 L3555.8 1505.4 L3558.0 1499.1 L3561.4 1497.3 L3562.6 1492.1 L3568.3 1486.9 L3570.5 1477.5 L3572.8 1465.7 L3575.7 1460.9 L3582.5 1455.6 M3570.5 1477.5 L3578.5 1474.0 L3584.8 1475.7 L3591.6 1476.6 L3604.1 1488.3 L3608.1 1486.9 M3604.1 1488.3 L3600.7 1496.7 L3607.0 1497.0 L3608.9 1493.8 M3607.0 1497.0 L3607.5 1504.8 L3613.2 1508.3 L3630.3 1514.0 L3636.0 1514.0 L3618.9 1531.2 L3607.5 1534.1 L3601.3 1537.2 L3595.0 1535.5 L3587.6 1540.1 L3579.6 1539.2 L3572.8 1534.6 L3567.4 1533.5 M3601.3 1537.2 L3596.1 1543.8 L3596.1 1564.3 L3599.3 1569.1 M3555.8 1505.4 L3556.9 1510.6 L3550.6 1515.2 L3559.2 1521.5 L3563.7 1528.9 L3567.4 1533.5 L3558.6 1533.5 L3556.3 1535.8 L3553.5 1538.4 L3544.9 1539.2 L3538.7 1539.8 L3530.7 1534.1 L3518.8 1530.6 L3513.1 1522.1 L3500.6 1510.0 M3556.3 1535.8 L3559.2 1539.8 L3562.0 1548.9 L3556.3 1558.6 L3555.8 1565.4 L3576.8 1576.8 L3577.9 1580.5 L3585.9 1586.2 M3555.8 1565.4 L3536.4 1565.4 L3531.3 1567.7 L3533.0 1555.1 L3541.0 1547.5 L3538.1 1546.3 L3538.7 1539.8 M3536.4 1565.4 L3538.4 1573.1 L3527.9 1575.4 L3531.3 1567.7 M3538.4 1573.1 L3535.8 1581.3 L3530.2 1585.0 M3537.8 1606.5 L3550.1 1613.4 L3555.8 1614.0 M3559.7 1626.1 L3566.6 1626.1 L3577.9 1625.6 L3592.7 1619.8 M3559.7 1626.1 L3558.6 1629.6 L3560.9 1637.8 L3567.1 1645.4 L3566.6 1651.9 L3563.7 1658.5 L3558.0 1651.9 L3559.2 1643.7 L3551.8 1640.1 L3548.9 1637.8 L3552.3 1631.4 L3551.8 1621.5 L3550.1 1613.4 M3551.8 1640.1 L3534.7 1646.0 L3535.8 1649.6 L3527.3 1651.6 L3516.5 1663.5 L3506.5 1662.6 L3496.0 1661.4 M3537.8 1606.5 L3527.3 1608.2 L3524.5 1612.8 L3525.6 1618.0 L3524.5 1627.3 L3527.9 1630.8 L3532.4 1629.3 L3532.4 1636.9 L3524.5 1631.4 L3517.6 1626.1 L3507.4 1623.8 L3501.7 1625.0 L3499.4 1622.1 L3499.4 1634.3 L3488.1 1634.3 L3488.1 1653.1 L3496.0 1661.4 M3535.8 1649.6 L3550.1 1656.1 L3548.9 1669.2 L3550.6 1674.7 L3547.8 1683.8 L3541.0 1690.5 L3544.9 1703.5 L3544.7 1712.6 M3506.5 1662.6 L3511.9 1672.8 L3520.5 1678.9 L3530.2 1689.3 L3541.0 1690.5 M3530.2 1689.3 L3523.9 1692.4 L3516.5 1698.2 L3510.8 1704.8 L3508.5 1710.4 L3493.7 1708.5 L3476.7 1705.1 M3506.5 1662.6 L3499.4 1665.0 L3482.4 1665.6 L3482.4 1688.0 L3476.7 1688.0 L3476.7 1719.3 M3429.7 1659.4 L3436.9 1657.9 L3442.5 1660.2 L3467.6 1660.2 L3484.6 1663.8 L3496.0 1661.4 M3432.9 1593.3 L3438.0 1593.0 L3457.3 1593.3 L3459.6 1600.8 L3473.8 1599.6 L3473.8 1604.8 L3486.9 1601.3 L3487.5 1614.6 L3489.8 1623.8 L3499.4 1622.1 M3432.3 1592.2 L3437.4 1585.9 L3435.1 1584.8 L3431.2 1588.2 M3437.4 1585.9 L3444.8 1587.6 L3449.4 1584.2 L3455.1 1572.2 L3458.5 1566.5 L3464.2 1562.0 L3465.9 1551.2 L3468.7 1539.8 L3471.0 1532.9 L3480.1 1534.6 L3490.3 1536.4 L3496.0 1533.5 L3506.8 1531.2 L3518.8 1530.6 M3426.0 1582.2 L3430.6 1579.6 L3428.9 1573.4 L3434.0 1572.8 L3436.9 1573.4 L3444.8 1572.8 L3444.8 1567.1 L3442.0 1559.7 L3445.4 1554.0 L3438.6 1552.6 L3438.6 1547.2 L3454.5 1550.0 L3455.1 1547.2 L3457.3 1539.8 L3468.7 1539.8 M3418.7 1554.0 L3427.5 1554.0 L3427.5 1547.2 L3418.7 1546.6 M3427.5 1547.2 L3438.6 1547.2 M3455.1 1547.2 L3448.8 1538.1 L3445.4 1529.5 L3451.1 1516.9 L3449.4 1511.2 L3442.0 1504.3 L3451.1 1502.5 L3448.2 1496.7 L3448.2 1490.3 L3445.4 1485.7 M3411.3 1532.9 L3415.8 1522.6 L3423.2 1519.5 L3427.2 1522.6 L3430.6 1519.2 L3435.7 1511.2 L3441.4 1496.7 L3446.0 1493.8 L3443.7 1488.0 L3445.4 1485.7 M3451.1 1516.9 L3463.6 1514.6 L3471.6 1508.3 L3479.0 1507.7 L3486.3 1499.6 L3493.2 1497.3 M3445.4 1485.7 L3440.3 1481.0 L3439.7 1476.3 L3451.1 1462.1 L3451.6 1443.5 L3448.2 1425.2 M3440.3 1481.0 L3434.0 1484.5 L3423.8 1482.8 L3417.5 1486.3 L3407.3 1483.3 L3402.2 1485.1 L3394.2 1479.8 L3386.2 1482.2 L3383.4 1492.7 L3384.5 1499.1 L3378.5 1508.3 L3378.3 1523.5 M3383.4 1492.7 L3378.8 1488.9 L3376.6 1491.5 L3370.9 1494.1 L3368.0 1496.7 L3362.0 1496.2 M3376.6 1491.5 L3375.1 1487.4 L3368.0 1482.2 L3364.0 1473.7 L3370.9 1471.6 L3382.8 1471.3 L3386.8 1462.7 L3387.1 1448.7 M3364.0 1473.7 L3358.9 1472.8 L3351.5 1478.1 L3343.6 1483.3 L3338.4 1484.5 L3337.9 1488.0 L3332.7 1492.1 L3331.6 1500.2 L3336.2 1504.3 L3344.7 1503.1 L3347.5 1506.0 M3345.3 1530.6 L3347.0 1523.8 L3344.7 1519.8 L3348.7 1512.9 L3347.5 1506.0 L3346.4 1496.7 L3362.0 1496.2 L3365.2 1500.8 L3366.3 1512.3 L3366.0 1520.4 L3369.7 1524.9 M3368.0 1496.7 L3367.5 1500.2 L3372.0 1508.3 L3372.3 1524.4 M3331.6 1500.2 L3327.6 1498.5 L3317.4 1501.4 L3315.7 1496.7 L3311.7 1488.6 L3304.3 1489.8 L3298.0 1488.6 L3298.0 1485.1 L3293.5 1474.8 M3317.4 1501.4 L3319.7 1507.7 L3315.7 1516.3 L3315.1 1523.2 L3320.8 1526.6 L3319.9 1534.9 M3315.7 1516.3 L3309.4 1517.5 L3309.4 1514.0 L3304.3 1511.2 L3302.6 1515.2 L3297.5 1520.4 M3304.3 1511.2 L3302.6 1507.1 L3299.2 1502.5 L3291.8 1503.1 L3287.2 1508.0 M3298.0 1488.6 L3285.0 1486.9 L3267.9 1488.9 M3285.0 1486.9 L3285.0 1492.7 L3277.6 1497.0 M3267.3 1481.6 L3275.3 1480.1 L3284.4 1482.2 L3275.3 1483.1 L3267.6 1484.8" fill="none" stroke="#8a8a8a" stroke-width="1.1" stroke-linejoin="round"/>
<path d="M3313.6 1395.8 L3287.8 1395.8 M3017.6 1530.1 L3013.6 1526.1 L3015.3 1521.5 L3019.9 1519.8 L3018.2 1516.9 L3022.7 1512.3 M3037.5 1525.8 L3036.9 1531.2 L3033.5 1533.5 L3032.9 1539.2 L3037.5 1540.9 L3041.5 1548.9 M3791.8 1365.4 L3785.6 1360.6 L3783.3 1349.7 L3800.9 1346.9 L3805.5 1343.4 L3795.3 1336.4 L3789.0 1331.1 M3791.8 1365.4 L3799.8 1360.6 L3811.2 1363.3 L3811.8 1351.7 L3819.1 1343.4 L3805.5 1343.4 M3811.2 1363.3 L3815.2 1362.7 L3823.7 1379.3 M3884.0 1394.3 L3894.8 1389.1 L3906.2 1386.5 L3916.7 1392.4 M3886.8 1401.0 L3897.7 1397.5 L3909.0 1394.3 L3914.7 1395.6 M3551.8 1431.4 L3556.9 1431.4 L3565.4 1425.2 M3567.4 1533.5 L3564.9 1528.9 L3558.6 1530.6 L3556.3 1535.8 M3521.6 1504.8 L3522.2 1500.8 L3527.9 1500.8 L3527.9 1504.3 M3641.7 1495.3 L3641.7 1508.3 L3636.0 1514.0 M3601.3 1537.2 L3593.3 1536.9" fill="none" stroke="#999" stroke-width="1.2" stroke-dasharray="3 2.5" stroke-linejoin="round"/>
<circle cx="2671" cy="1321" r="1.2" fill="#f89646" fill-opacity="0.62"/>
<circle cx="2671" cy="1321" r="2.10" fill="none" stroke="#fbcfa8" stroke-opacity="0.72" stroke-width="1.80"/>
<circle cx="2831.8" cy="1274.4" r="2.5" fill="#f89646" fill-opacity="0.62"/>
<circle cx="2831.8" cy="1274.4" r="3.95" fill="none" stroke="#fbcfa8" stroke-opacity="0.72" stroke-width="2.90"/>
<circle cx="2958.8" cy="1294.4" r="2.5" fill="#f89646" fill-opacity="0.62"/>
<circle cx="2958.8" cy="1294.4" r="3.95" fill="none" stroke="#fbcfa8" stroke-opacity="0.72" stroke-width="2.90"/>
<circle cx="2923.2" cy="1330" r="2" fill="#f89646" fill-opacity="0.62"/>
<circle cx="2923.2" cy="1330" r="3.50" fill="none" stroke="#fbcfa8" stroke-opacity="0.72" stroke-width="3.00"/>
<circle cx="3397.8" cy="1263" r="3" fill="#f89646" fill-opacity="0.62"/>
<circle cx="3397.8" cy="1263" r="4.50" fill="none" stroke="#fbcfa8" stroke-opacity="0.72" stroke-width="3.00"/>
<circle cx="3350" cy="1190" r="3" fill="#f89646" fill-opacity="0.62"/>
<circle cx="3350" cy="1190" r="4.50" fill="none" stroke="#fbcfa8" stroke-opacity="0.72" stroke-width="3.00"/>
<circle cx="3388" cy="1222" r="3" fill="#f89646" fill-opacity="0.62"/>
<circle cx="3388" cy="1222" r="4.50" fill="none" stroke="#fbcfa8" stroke-opacity="0.72" stroke-width="3.00"/>
<circle cx="3472.2" cy="1253.4" r="1.2" fill="#f89646" fill-opacity="0.62"/>
<circle cx="3472.2" cy="1253.4" r="2.90" fill="none" stroke="#fbcfa8" stroke-opacity="0.72" stroke-width="3.40"/>
<circle cx="3326.6" cy="1199.8" r="1.5" fill="#f89646" fill-opacity="0.62"/>
<circle cx="3326.6" cy="1199.8" r="2.85" fill="none" stroke="#fbcfa8" stroke-opacity="0.72" stroke-width="2.70"/>
<circle cx="3310.8" cy="1320.5" r="2" fill="#f89646" fill-opacity="0.62"/>
<circle cx="3310.8" cy="1320.5" r="4.00" fill="none" stroke="#fbcfa8" stroke-opacity="0.72" stroke-width="4.00"/>
<circle cx="3504.6" cy="1128.4" r="2" fill="#f89646" fill-opacity="0.62"/>
<circle cx="3504.6" cy="1128.4" r="3.85" fill="none" stroke="#fbcfa8" stroke-opacity="0.72" stroke-width="3.70"/>
<circle cx="3504" cy="1138.6" r="2.5" fill="#f89646" fill-opacity="0.62"/>
<circle cx="3504" cy="1138.6" r="4.10" fill="none" stroke="#fbcfa8" stroke-opacity="0.72" stroke-width="3.20"/>
<circle cx="3538.6" cy="1228.4" r="1.5" fill="#f89646" fill-opacity="0.62"/>
<circle cx="3538.6" cy="1228.4" r="3.25" fill="none" stroke="#fbcfa8" stroke-opacity="0.72" stroke-width="3.50"/>
<circle cx="3553.8" cy="1348.7" r="2" fill="#f89646" fill-opacity="0.62"/>
<circle cx="3553.8" cy="1348.7" r="3.05" fill="none" stroke="#fbcfa8" stroke-opacity="0.72" stroke-width="2.10"/>
<circle cx="3970.2" cy="1250" r="1" fill="#f89646" fill-opacity="0.62"/>
<circle cx="3970.2" cy="1250" r="2.55" fill="none" stroke="#fbcfa8" stroke-opacity="0.72" stroke-width="3.10"/>
<circle cx="4082.2" cy="1330.6" r="1.5" fill="#f89646" fill-opacity="0.62"/>
<circle cx="4082.2" cy="1330.6" r="2.95" fill="none" stroke="#fbcfa8" stroke-opacity="0.72" stroke-width="2.90"/>
<circle cx="2940.7" cy="1534" r="1" fill="#f89646" fill-opacity="0.62"/>
<circle cx="2940.7" cy="1534" r="3.00" fill="none" stroke="#fbcfa8" stroke-opacity="0.72" stroke-width="4.00"/>
<circle cx="2916.9" cy="1561.6" r="1" fill="#f89646" fill-opacity="0.62"/>
<circle cx="2916.9" cy="1561.6" r="2.70" fill="none" stroke="#fbcfa8" stroke-opacity="0.72" stroke-width="3.40"/>
<circle cx="3048.9" cy="1529.6" r="1" fill="#f89646" fill-opacity="0.62"/>
<circle cx="3048.9" cy="1529.6" r="2.90" fill="none" stroke="#fbcfa8" stroke-opacity="0.72" stroke-width="3.80"/>
<circle cx="3117.1" cy="1694" r="2" fill="#f89646" fill-opacity="0.62"/>
<circle cx="3117.1" cy="1694" r="3.70" fill="none" stroke="#fbcfa8" stroke-opacity="0.72" stroke-width="3.40"/>
<circle cx="3801.7" cy="1391.2" r="1" fill="#f89646" fill-opacity="0.62"/>
<circle cx="3801.7" cy="1391.2" r="2.70" fill="none" stroke="#fbcfa8" stroke-opacity="0.72" stroke-width="3.40"/>
<circle cx="3848.3" cy="1396.6" r="1.5" fill="#f89646" fill-opacity="0.62"/>
<circle cx="3848.3" cy="1396.6" r="3.45" fill="none" stroke="#fbcfa8" stroke-opacity="0.72" stroke-width="3.90"/>
<circle cx="4052.7" cy="1413.4" r="2.5" fill="#f89646" fill-opacity="0.62"/>
<circle cx="4052.7" cy="1413.4" r="4.25" fill="none" stroke="#fbcfa8" stroke-opacity="0.72" stroke-width="3.50"/>
<circle cx="2662" cy="1237.3" r="6.3" fill="#f89646" fill-opacity="0.62"/>
<circle cx="2662" cy="1237.3" r="8.40" fill="none" stroke="#fbcfa8" stroke-opacity="0.72" stroke-width="4.20"/>
<circle cx="2666.8" cy="1252.8" r="8.5" fill="#f89646" fill-opacity="0.62"/>
<circle cx="2666.8" cy="1252.8" r="10.10" fill="none" stroke="#fbcfa8" stroke-opacity="0.72" stroke-width="3.20"/>
<circle cx="2665.2" cy="1268.4" r="5" fill="#f89646" fill-opacity="0.62"/>
<circle cx="2665.2" cy="1268.4" r="6.75" fill="none" stroke="#fbcfa8" stroke-opacity="0.72" stroke-width="3.50"/>
<circle cx="2669.3" cy="1330.6" r="33.3" fill="#f89646" fill-opacity="0.62"/>
<circle cx="2669.3" cy="1330.6" r="34.90" fill="none" stroke="#fbcfa8" stroke-opacity="0.72" stroke-width="3.20"/>
<circle cx="2689" cy="1355.3" r="8.5" fill="#f89646" fill-opacity="0.62"/>
<circle cx="2689" cy="1355.3" r="10.60" fill="none" stroke="#fbcfa8" stroke-opacity="0.72" stroke-width="4.20"/>
<circle cx="2767.4" cy="1312.8" r="4.8" fill="#f89646" fill-opacity="0.62"/>
<circle cx="2767.4" cy="1312.8" r="6.65" fill="none" stroke="#fbcfa8" stroke-opacity="0.72" stroke-width="3.70"/>
<circle cx="2811.2" cy="1362.3" r="12" fill="#f89646" fill-opacity="0.62"/>
<circle cx="2811.2" cy="1362.3" r="13.95" fill="none" stroke="#fbcfa8" stroke-opacity="0.72" stroke-width="3.90"/>
<circle cx="2862.9" cy="1296.9" r="7.9" fill="#f89646" fill-opacity="0.62"/>
<circle cx="2862.9" cy="1296.9" r="9.65" fill="none" stroke="#fbcfa8" stroke-opacity="0.72" stroke-width="3.50"/>
<circle cx="2909.6" cy="1283" r="10.2" fill="#f89646" fill-opacity="0.62"/>
<circle cx="2909.6" cy="1283" r="11.90" fill="none" stroke="#fbcfa8" stroke-opacity="0.72" stroke-width="3.40"/>
<circle cx="2923.2" cy="1320.4" r="21.6" fill="#f89646" fill-opacity="0.62"/>
<circle cx="2923.2" cy="1320.4" r="23.20" fill="none" stroke="#fbcfa8" stroke-opacity="0.72" stroke-width="3.20"/>
<circle cx="2941.3" cy="1306.1" r="29.5" fill="#f89646" fill-opacity="0.62"/>
<circle cx="2941.3" cy="1306.1" r="31.10" fill="none" stroke="#fbcfa8" stroke-opacity="0.72" stroke-width="3.20"/>
<circle cx="2882.6" cy="1357" r="7.9" fill="#f89646" fill-opacity="0.62"/>
<circle cx="2882.6" cy="1357" r="9.65" fill="none" stroke="#fbcfa8" stroke-opacity="0.72" stroke-width="3.50"/>
<circle cx="3420" cy="1198" r="5" fill="#f89646" fill-opacity="0.62"/>
<circle cx="3420" cy="1198" r="6.70" fill="none" stroke="#fbcfa8" stroke-opacity="0.72" stroke-width="3.40"/>
<circle cx="3437.9" cy="1208.9" r="5" fill="#f89646" fill-opacity="0.62"/>
<circle cx="3437.9" cy="1208.9" r="6.50" fill="none" stroke="#fbcfa8" stroke-opacity="0.72" stroke-width="3.00"/>
<circle cx="3444" cy="1230.9" r="5.5" fill="#f89646" fill-opacity="0.62"/>
<circle cx="3444" cy="1230.9" r="7.15" fill="none" stroke="#fbcfa8" stroke-opacity="0.72" stroke-width="3.30"/>
<circle cx="3430" cy="1245.5" r="4" fill="#f89646" fill-opacity="0.62"/>
<circle cx="3430" cy="1245.5" r="6.00" fill="none" stroke="#fbcfa8" stroke-opacity="0.72" stroke-width="4.00"/>
<circle cx="3412" cy="1253" r="4" fill="#f89646" fill-opacity="0.62"/>
<circle cx="3412" cy="1253" r="5.50" fill="none" stroke="#fbcfa8" stroke-opacity="0.72" stroke-width="3.00"/>
<circle cx="3359.7" cy="1217.4" r="34.5" fill="#f89646" fill-opacity="0.62"/>
<circle cx="3359.7" cy="1217.4" r="35.95" fill="none" stroke="#fbcfa8" stroke-opacity="0.72" stroke-width="2.90"/>
<circle cx="3377.2" cy="1240.2" r="49.5" fill="#f89646" fill-opacity="0.62"/>
<circle cx="3377.2" cy="1240.2" r="50.95" fill="none" stroke="#fbcfa8" stroke-opacity="0.72" stroke-width="2.90"/>
<circle cx="3411.2" cy="1229.8" r="39.3" fill="#f89646" fill-opacity="0.62"/>
<circle cx="3411.2" cy="1229.8" r="40.75" fill="none" stroke="#fbcfa8" stroke-opacity="0.72" stroke-width="2.90"/>
<circle cx="3392.5" cy="1285.9" r="15.5" fill="#f89646" fill-opacity="0.62"/>
<circle cx="3392.5" cy="1285.9" r="17.25" fill="none" stroke="#fbcfa8" stroke-opacity="0.72" stroke-width="3.50"/>
<circle cx="3457.2" cy="1247.8" r="7" fill="#f89646" fill-opacity="0.62"/>
<circle cx="3457.2" cy="1247.8" r="8.60" fill="none" stroke="#fbcfa8" stroke-opacity="0.72" stroke-width="3.20"/>
<circle cx="3482.2" cy="1211.2" r="12" fill="#f89646" fill-opacity="0.62"/>
<circle cx="3482.2" cy="1211.2" r="13.90" fill="none" stroke="#fbcfa8" stroke-opacity="0.72" stroke-width="3.80"/>
<circle cx="3434.9" cy="1178.5" r="6.5" fill="#f89646" fill-opacity="0.62"/>
<circle cx="3434.9" cy="1178.5" r="8.10" fill="none" stroke="#fbcfa8" stroke-opacity="0.72" stroke-width="3.20"/>
<circle cx="3342.6" cy="1308.2" r="5.8" fill="#f89646" fill-opacity="0.62"/>
<circle cx="3342.6" cy="1308.2" r="7.75" fill="none" stroke="#fbcfa8" stroke-opacity="0.72" stroke-width="3.90"/>
<circle cx="3511.7" cy="1276.8" r="7" fill="#f89646" fill-opacity="0.62"/>
<circle cx="3511.7" cy="1276.8" r="8.60" fill="none" stroke="#fbcfa8" stroke-opacity="0.72" stroke-width="3.20"/>
<circle cx="3495.9" cy="1291.7" r="7.9" fill="#f89646" fill-opacity="0.62"/>
<circle cx="3495.9" cy="1291.7" r="9.40" fill="none" stroke="#fbcfa8" stroke-opacity="0.72" stroke-width="3.00"/>
<circle cx="3425.9" cy="1129.4" r="6.3" fill="#f89646" fill-opacity="0.62"/>
<circle cx="3425.9" cy="1129.4" r="8.05" fill="none" stroke="#fbcfa8" stroke-opacity="0.72" stroke-width="3.50"/>
<circle cx="3464.7" cy="1135.1" r="3.5" fill="#f89646" fill-opacity="0.62"/>
<circle cx="3464.7" cy="1135.1" r="5.25" fill="none" stroke="#fbcfa8" stroke-opacity="0.72" stroke-width="3.50"/>
<circle cx="3578.6" cy="1180.1" r="9.5" fill="#f89646" fill-opacity="0.62"/>
<circle cx="3578.6" cy="1180.1" r="11.40" fill="none" stroke="#fbcfa8" stroke-opacity="0.72" stroke-width="3.80"/>
<circle cx="4161.6" cy="1342.6" r="5.7" fill="#f89646" fill-opacity="0.62"/>
<circle cx="4161.6" cy="1342.6" r="7.45" fill="none" stroke="#fbcfa8" stroke-opacity="0.72" stroke-width="3.50"/>
<circle cx="2906.1" cy="1408.7" r="4.8" fill="#f89646" fill-opacity="0.62"/>
<circle cx="2906.1" cy="1408.7" r="6.55" fill="none" stroke="#fbcfa8" stroke-opacity="0.72" stroke-width="3.50"/>
<circle cx="3098.1" cy="1697.1" r="8.9" fill="#f89646" fill-opacity="0.62"/>
<circle cx="3098.1" cy="1697.1" r="10.80" fill="none" stroke="#fbcfa8" stroke-opacity="0.72" stroke-width="3.80"/>
<circle cx="3777.2" cy="1450.2" r="8.9" fill="#f89646" fill-opacity="0.62"/>
<circle cx="3777.2" cy="1450.2" r="10.95" fill="none" stroke="#fbcfa8" stroke-opacity="0.72" stroke-width="4.10"/>
<circle cx="3954.7" cy="1552.7" r="30" fill="#f89646" fill-opacity="0.62"/>
<circle cx="3954.7" cy="1552.7" r="31.65" fill="none" stroke="#fbcfa8" stroke-opacity="0.72" stroke-width="3.30"/>
<circle cx="4010.8" cy="1430.2" r="13.3" fill="#f89646" fill-opacity="0.62"/>
<circle cx="4010.8" cy="1430.2" r="15.05" fill="none" stroke="#fbcfa8" stroke-opacity="0.72" stroke-width="3.50"/>
<circle cx="3946.4" cy="1456.6" r="7.6" fill="#f89646" fill-opacity="0.62"/>
<circle cx="3946.4" cy="1456.6" r="9.35" fill="none" stroke="#fbcfa8" stroke-opacity="0.72" stroke-width="3.50"/>
<rect x="3873" y="1667" width="560" height="45" fill="#fff" fill-opacity="0.55"/>
<defs><filter id="blur" x="-40%" y="-40%" width="180%" height="180%"><feGaussianBlur stdDeviation="4"/></filter></defs>
<rect x="4343" y="1077" width="58" height="110" fill="#000" fill-opacity="0.22" filter="url(#blur)"/>
<rect x="4343.5" y="1076.5" width="57" height="109.5" rx="2" fill="#e3e3e3"/>
<rect x="4346" y="1079" width="52" height="104.5" fill="#f7f7f7"/>
<path d="M4346 1129.6H4398" stroke="#e0e0e0" stroke-width="2"/>
<path d="M4365 1105.3H4378.8M4371.9 1098.4V1112.2M4365 1157H4378.8" stroke="#000" stroke-width="3.6" stroke-linecap="round"/>
<g><circle cx="2339.9" cy="1671.4" r="18.6" fill="#fff" stroke="#fff" stroke-width="6" opacity="0.9"/><circle cx="2339.9" cy="1671.4" r="18.6" fill="#fff" stroke="#a6a6a6" stroke-width="3.2"/><path d="M2331 1680.5 C2331 1668 2337 1661.5 2343.5 1661.5 C2350 1661.5 2353 1666.5 2352.4 1671.2 C2351.5 1677.5 2344 1680.5 2331 1680.5Z" fill="#a6a6a6"/><path d="M2343 1665.2 L2344.4 1669.2 L2348.4 1670.6 L2344.4 1672 L2343 1676 L2341.6 1672 L2337.6 1670.6 L2341.6 1669.2Z" fill="#fff"/><text x="2364.5" y="1681.8" font-family="Liberation Sans, sans-serif" font-weight="700" font-size="35" textLength="124" lengthAdjust="spacingAndGlyphs" fill="#fff" stroke="#fff" stroke-width="7" stroke-linejoin="round" opacity="0.9">mapbox</text><text x="2364.5" y="1681.8" font-family="Liberation Sans, sans-serif" font-weight="700" font-size="35" textLength="124" lengthAdjust="spacingAndGlyphs" fill="#fff" stroke="#a3a3a3" stroke-width="5.4" stroke-linejoin="round" paint-order="stroke">mapbox</text></g>
</svg>
<span class="t" style="left:33.00px;top:44.41px;font-size:33.17px;line-height:33.17px;letter-spacing:-0.842px;color:#4a4a4a;font-weight:400;">Workers &amp; Pages</span>
<span class="t" style="left:295.00px;top:44.41px;font-size:33.17px;line-height:33.17px;letter-spacing:0.000px;color:#b5b5b5;font-weight:400;">/</span>
<span class="t" style="left:320.00px;top:44.41px;font-size:33.17px;line-height:33.17px;letter-spacing:0.932px;color:#1d1d1d;font-weight:400;">catch-404s</span>
<span class="t" style="left:33.00px;top:132.94px;font-size:32.12px;line-height:32.12px;letter-spacing:0.467px;color:#4a4a4a;font-weight:400;">Deployments</span>
<span class="t" style="left:291.00px;top:132.94px;font-size:32.12px;line-height:32.12px;letter-spacing:1.349px;color:#313131;font-weight:400;-webkit-text-stroke:0.75px #313131;">Metrics</span>
<span class="t" style="left:467.00px;top:132.94px;font-size:32.12px;line-height:32.12px;letter-spacing:0.142px;color:#4a4a4a;font-weight:400;">Logs</span>
<span class="t" style="left:569.00px;top:143.57px;font-size:18.85px;line-height:18.85px;letter-spacing:1.239px;color:#5b3a1c;font-weight:400;">Beta</span>
<span class="t" style="left:694.00px;top:132.94px;font-size:32.12px;line-height:32.12px;letter-spacing:0.706px;color:#4a4a4a;font-weight:400;">Integrations</span>
<span class="t" style="left:937.00px;top:132.94px;font-size:32.12px;line-height:32.12px;letter-spacing:0.719px;color:#4a4a4a;font-weight:400;">Settings</span>
<span class="t" style="left:67.00px;top:233.79px;font-size:31.42px;line-height:31.42px;letter-spacing:0.446px;color:#1d1d1d;font-weight:400;">All deployed versions</span>
<span class="t" style="left:4130.40px;top:234.68px;font-size:27.65px;line-height:27.65px;letter-spacing:0.777px;color:#1d1d1d;font-weight:400;-webkit-text-stroke:0.55px #1d1d1d;">Last 12 hours</span>
<span class="t" style="left:4315.00px;top:234.68px;font-size:27.65px;line-height:27.65px;letter-spacing:-0.223px;color:#4a4a4a;font-weight:400;">UTC</span>
<span class="t" style="left:75.00px;top:614.01px;font-size:32.47px;line-height:32.47px;letter-spacing:-0.554px;color:#313131;font-weight:700;">Active deployment</span>
<span class="t" style="left:107.50px;top:717.33px;font-size:25.84px;line-height:25.84px;letter-spacing:-0.006px;color:#1d1d1d;font-weight:700;">Version</span>
<span class="t" style="left:671.00px;top:717.33px;font-size:25.84px;line-height:25.84px;letter-spacing:0.180px;color:#1d1d1d;font-weight:700;">Deployed on</span>
<span class="t" style="left:1279.75px;top:717.33px;font-size:25.84px;line-height:25.84px;letter-spacing:0.478px;color:#1d1d1d;font-weight:700;">Deployment %</span>
<span class="t" style="left:1714.50px;top:717.33px;font-size:25.84px;line-height:25.84px;letter-spacing:0.280px;color:#1d1d1d;font-weight:700;">Requests/sec</span>
<span class="t" style="left:2366.00px;top:717.33px;font-size:25.84px;line-height:25.84px;letter-spacing:0.061px;color:#1d1d1d;font-weight:700;">Error Rate</span>
<span class="t" style="left:3017.75px;top:717.33px;font-size:25.84px;line-height:25.84px;letter-spacing:0.389px;color:#1d1d1d;font-weight:700;">Median CPU Time</span>
<span class="t" style="left:3799.70px;top:717.33px;font-size:25.84px;line-height:25.84px;letter-spacing:0.575px;color:#1d1d1d;font-weight:700;">Cached %</span>
<span class="t" style="left:131.50px;top:795.75px;font-size:26.5px;line-height:26.5px;letter-spacing:0.000px;color:#555555;font-weight:400;">v</span>
<span class="t" style="left:143.00px;top:798.20px;font-size:25.6px;line-height:25.6px;letter-spacing:-0.966px;color:#1d1d1d;font-weight:400;font-family:'Liberation Mono',monospace;-webkit-text-stroke:0.8px #1d1d1d;">b34558f1</span>
<span class="t" style="left:671.00px;top:795.55px;font-size:26.89px;line-height:26.89px;letter-spacing:1.675px;color:#313131;font-weight:400;">2025-02-19 14:38:54</span>
<span class="t" style="left:960.00px;top:795.55px;font-size:26.89px;line-height:26.89px;letter-spacing:0.463px;color:#8e8e8e;font-weight:400;">UTC</span>
<span class="t" style="left:1278.00px;top:795.55px;font-size:26.89px;line-height:26.89px;letter-spacing:1.637px;color:#1d1d1d;font-weight:400;">100%</span>
<span class="t" style="left:1714.50px;top:795.55px;font-size:26.89px;line-height:26.89px;letter-spacing:1.174px;color:#1d1d1d;font-weight:400;">0 req/sec</span>
<span class="t" style="left:2366.00px;top:795.55px;font-size:26.89px;line-height:26.89px;letter-spacing:3.553px;color:#1d1d1d;font-weight:400;">0%</span>
<span class="t" style="left:3018.00px;top:795.55px;font-size:26.89px;line-height:26.89px;letter-spacing:0.880px;color:#1d1d1d;font-weight:400;">0.75</span>
<span class="t" style="left:3089.50px;top:795.75px;font-size:26.5px;line-height:26.5px;letter-spacing:1.925px;color:#767676;font-weight:400;">ms</span>
<span class="t" style="left:3798.70px;top:795.55px;font-size:26.89px;line-height:26.89px;letter-spacing:1.303px;color:#1d1d1d;font-weight:400;">13%</span>
<span class="t" style="left:4196.00px;top:613.94px;font-size:29.33px;line-height:29.33px;letter-spacing:-0.113px;color:#ffffff;font-weight:400;-webkit-text-stroke:0.4px #ffffff;">Deploy version</span>
<span class="t" style="left:73.00px;top:982.54px;font-size:31.42px;line-height:31.42px;letter-spacing:0.085px;color:#313131;font-weight:700;">Requests</span>
<span class="t" style="left:98.25px;top:1065.56px;font-size:26.89px;line-height:26.89px;letter-spacing:2.336px;color:#313131;font-weight:400;">034fdb02</span>
<span class="t" style="left:235.25px;top:1065.56px;font-size:26.89px;line-height:26.89px;letter-spacing:1.499px;color:#313131;font-weight:700;">12.25k</span>
<span class="t" style="left:398.50px;top:1065.56px;font-size:26.89px;line-height:26.89px;letter-spacing:1.836px;color:#313131;font-weight:400;">b34558f1</span>
<span class="t" style="left:533.25px;top:1065.56px;font-size:26.89px;line-height:26.89px;letter-spacing:0.000px;color:#313131;font-weight:700;">8</span>
<span class="t" style="left:1872.00px;top:987.55px;font-size:26.89px;line-height:26.89px;letter-spacing:1.250px;color:#0b4bb5;font-weight:400;">Count</span>
<span class="t" style="left:2021.00px;top:987.55px;font-size:26.89px;line-height:26.89px;letter-spacing:-0.667px;color:#313131;font-weight:400;">RPS</span>
<span class="t" style="left:79.50px;top:1130.15px;font-size:19.2px;line-height:19.2px;letter-spacing:2.704px;color:#313131;font-weight:400;">600</span>
<span class="t" style="left:79.50px;top:1236.90px;font-size:19.2px;line-height:19.2px;letter-spacing:2.704px;color:#313131;font-weight:400;">450</span>
<span class="t" style="left:79.50px;top:1366.90px;font-size:19.2px;line-height:19.2px;letter-spacing:2.704px;color:#313131;font-weight:400;">300</span>
<span class="t" style="left:79.50px;top:1496.90px;font-size:19.2px;line-height:19.2px;letter-spacing:2.704px;color:#313131;font-weight:400;">150</span>
<span class="t" style="left:551.60px;top:1659.31px;font-size:18.99px;line-height:18.99px;letter-spacing:0.942px;color:#313131;font-weight:400;">Feb 19, 05:15</span>
<span class="t" style="left:1011.40px;top:1659.31px;font-size:18.99px;line-height:18.99px;letter-spacing:1.258px;color:#313131;font-weight:400;">Feb 19, 08:00</span>
<span class="t" style="left:1473.00px;top:1659.31px;font-size:18.99px;line-height:18.99px;letter-spacing:1.092px;color:#313131;font-weight:400;">Feb 19, 10:45</span>
<span class="t" style="left:1918.00px;top:1659.31px;font-size:18.99px;line-height:18.99px;letter-spacing:1.033px;color:#313131;font-weight:400;">Feb 19, 14:30</span>
<span class="t" style="left:1068.40px;top:1695.95px;font-size:24.3px;line-height:24.3px;letter-spacing:0.137px;color:#4a4a4a;font-weight:400;">Time (UTC)</span>
<span class="t" style="left:2304.50px;top:982.54px;font-size:31.42px;line-height:31.42px;letter-spacing:0.124px;color:#313131;font-weight:700;">Request Distribution</span>
<span class="t" style="left:4103.30px;top:987.55px;font-size:26.89px;line-height:26.89px;letter-spacing:0.938px;color:#0b4bb5;font-weight:400;">Count</span>
<span class="t" style="left:4251.70px;top:987.55px;font-size:26.89px;line-height:26.89px;letter-spacing:-0.667px;color:#313131;font-weight:400;">RPS</span>
<span class="t" style="left:3883.90px;top:1676.76px;font-size:22.49px;line-height:22.49px;letter-spacing:1.087px;color:#404040;font-weight:400;">© Mapbox © OpenStreetMap</span>
<span class="t" style="left:4211.40px;top:1676.76px;font-size:22.49px;line-height:22.49px;letter-spacing:0.818px;color:#404040;font-weight:700;">Improve this map</span>
<span class="t" style="left:82.00px;top:354.91px;font-size:23.39px;line-height:23.39px;letter-spacing:0.848px;color:#313131;font-weight:400;">Requests</span>
<span class="t" style="left:80.50px;top:399.94px;font-size:39.11px;line-height:39.11px;letter-spacing:-0.501px;color:#313131;font-weight:700;">12k</span>
<span class="t" style="left:195.75px;top:396.31px;font-size:23.39px;line-height:23.39px;letter-spacing:1.501px;color:#4a93f9;font-weight:400;">59.49%</span>
<span class="t" style="left:711.50px;top:354.91px;font-size:23.39px;line-height:23.39px;letter-spacing:1.094px;color:#313131;font-weight:400;">Subrequests</span>
<span class="t" style="left:711.50px;top:399.94px;font-size:39.11px;line-height:39.11px;letter-spacing:1.749px;color:#313131;font-weight:700;">2k</span>
<span class="t" style="left:808.25px;top:396.31px;font-size:23.39px;line-height:23.39px;letter-spacing:1.051px;color:#4a93f9;font-weight:400;">67.46%</span>
<span class="t" style="left:1342.00px;top:354.91px;font-size:23.39px;line-height:23.39px;letter-spacing:0.811px;color:#313131;font-weight:400;">Errors</span>
<span class="t" style="left:1342.50px;top:399.94px;font-size:39.11px;line-height:39.11px;letter-spacing:0.000px;color:#313131;font-weight:700;">5</span>
<span class="t" style="left:1418.00px;top:396.31px;font-size:23.39px;line-height:23.39px;letter-spacing:1.301px;color:#e81403;font-weight:400;">58.33%</span>
<span class="t" style="left:1972.00px;top:354.91px;font-size:23.39px;line-height:23.39px;letter-spacing:0.833px;color:#313131;font-weight:400;">CPU Time</span>
<span class="t" style="left:1972.00px;top:399.94px;font-size:39.11px;line-height:39.11px;letter-spacing:1.544px;color:#313131;font-weight:700;">0.57</span>
<span class="t" style="left:2053.50px;top:412.50px;font-size:24px;line-height:24px;letter-spacing:0.160px;color:#7a7a7a;font-weight:700;">ms</span>
<span class="t" style="left:2140.00px;top:396.31px;font-size:23.39px;line-height:23.39px;letter-spacing:0.126px;color:#4a93f9;font-weight:400;">3.51%</span>
<span class="t" style="left:2603.00px;top:354.91px;font-size:23.39px;line-height:23.39px;letter-spacing:0.908px;color:#313131;font-weight:400;">Wall time</span>
<span class="t" style="left:2602.50px;top:399.94px;font-size:39.11px;line-height:39.11px;letter-spacing:0.845px;color:#313131;font-weight:700;">50.41</span>
<span class="t" style="left:2705.00px;top:412.50px;font-size:24px;line-height:24px;letter-spacing:0.160px;color:#7a7a7a;font-weight:700;">ms</span>
<span class="t" style="left:2790.00px;top:396.31px;font-size:23.39px;line-height:23.39px;letter-spacing:0.626px;color:#4a93f9;font-weight:400;">7.47%</span>
<span class="t" style="left:3232.00px;top:354.91px;font-size:23.39px;line-height:23.39px;letter-spacing:1.022px;color:#313131;font-weight:400;">Execution duration</span>
<span class="t" style="left:3232.00px;top:399.94px;font-size:39.11px;line-height:39.11px;letter-spacing:2.470px;color:#313131;font-weight:700;">99.23</span>
<span class="t" style="left:3342.50px;top:413.65px;font-size:22.7px;line-height:22.7px;letter-spacing:1.336px;color:#7a7a7a;font-weight:700;">GB-sec</span>
<span class="t" style="left:3477.00px;top:396.31px;font-size:23.39px;line-height:23.39px;letter-spacing:1.501px;color:#4a93f9;font-weight:400;">24.90%</span>
<span class="t" style="left:3862.00px;top:354.91px;font-size:23.39px;line-height:23.39px;letter-spacing:1.031px;color:#313131;font-weight:400;">Request duration</span>
<span class="t" style="left:3862.00px;top:399.94px;font-size:39.11px;line-height:39.11px;letter-spacing:0.970px;color:#313131;font-weight:700;">51.26</span>
<span class="t" style="left:3964.75px;top:412.50px;font-size:24px;line-height:24px;letter-spacing:-0.340px;color:#7a7a7a;font-weight:700;">ms</span>
<span class="t" style="left:4050.00px;top:396.31px;font-size:23.39px;line-height:23.39px;letter-spacing:0.814px;color:#4a93f9;font-weight:400;">7.46%</span>
</body></html>
